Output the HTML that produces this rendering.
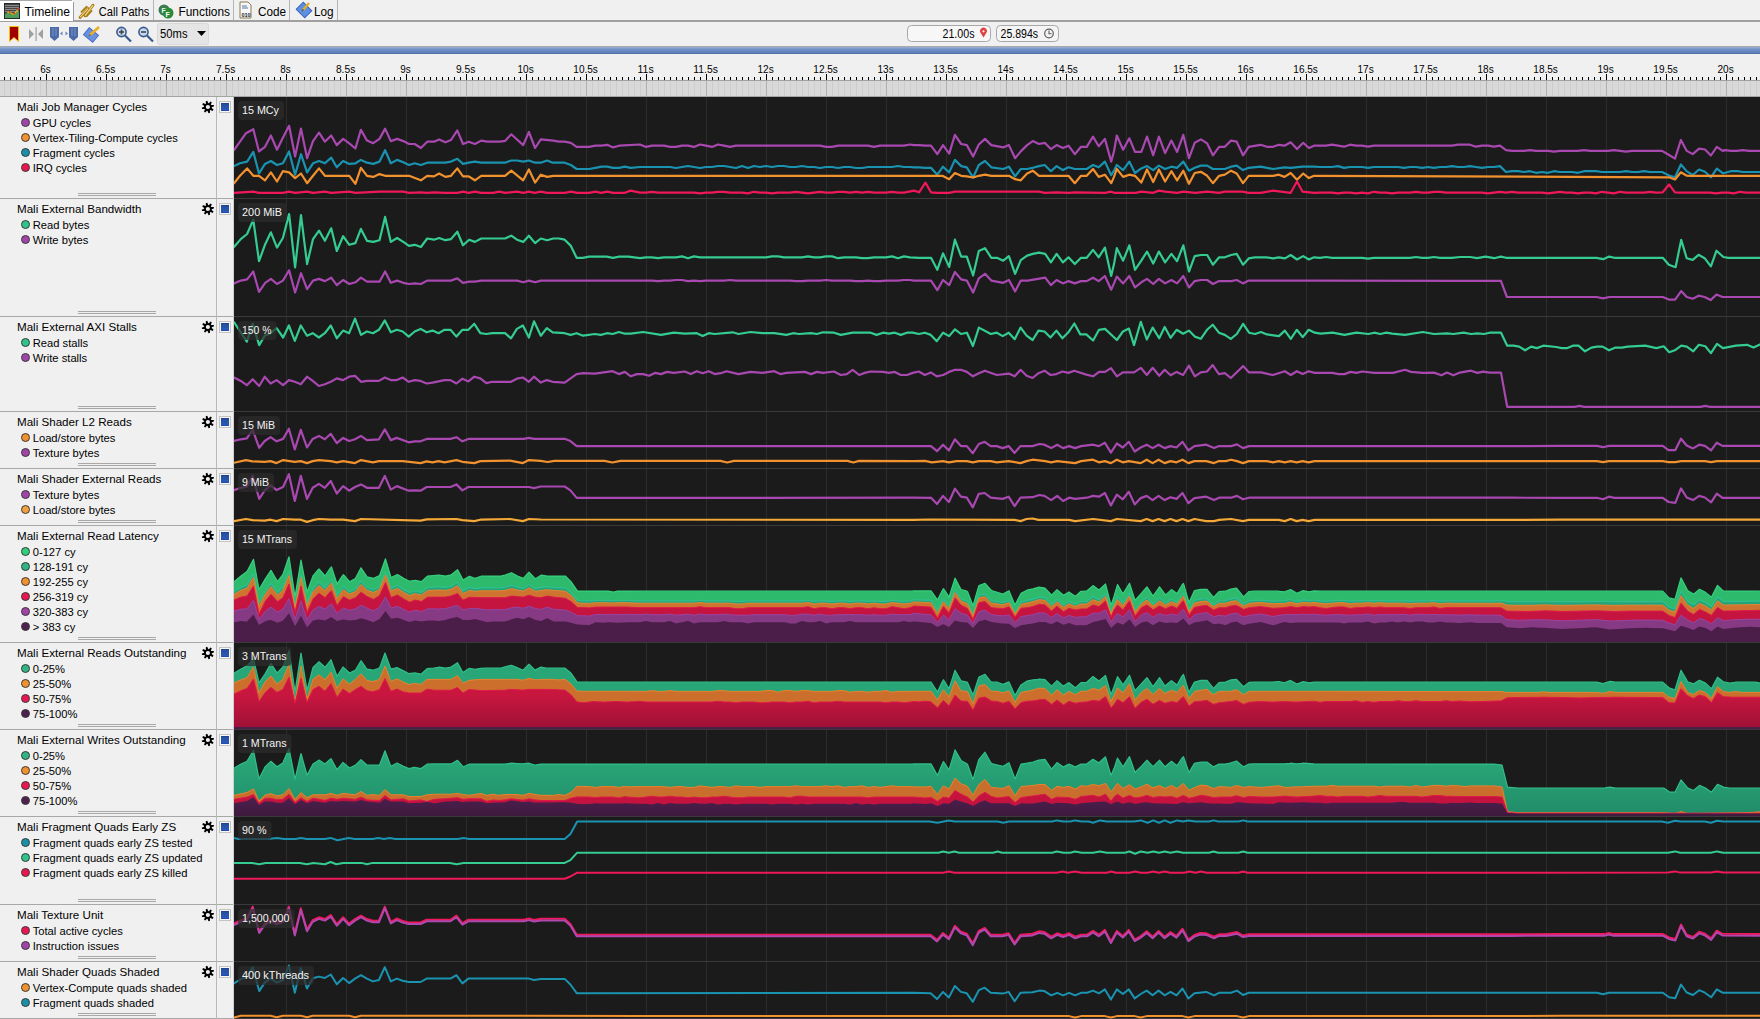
<!DOCTYPE html><html><head><meta charset="utf-8"><style>html,body{margin:0;padding:0;background:#f0f0f0;overflow:hidden}svg{display:block}text{font-family:"Liberation Sans",sans-serif}</style></head><body><svg width="1760" height="1019" viewBox="0 0 1760 1019"><rect width="1760" height="1019" fill="#f0f0f0"/><rect x="0" y="20" width="1760" height="2" fill="#a0a0a0"/><rect x="0" y="1" width="73" height="20" fill="#ffffff"/><rect x="0" y="0" width="72" height="1" fill="#a8a8a8"/><rect x="73" y="2" width="1" height="19" fill="#9a9a9a"/><rect x="153" y="0" width="1" height="20" fill="#b4b4b4"/><rect x="233" y="0" width="1" height="20" fill="#b4b4b4"/><rect x="289" y="0" width="1" height="20" fill="#b4b4b4"/><rect x="337" y="0" width="1" height="20" fill="#b4b4b4"/><text x="24.5" y="15.5" font-size="12" fill="#000" textLength="45.4" lengthAdjust="spacingAndGlyphs">Timeline</text><text x="98.8" y="15.5" font-size="12" fill="#000" textLength="50.6" lengthAdjust="spacingAndGlyphs">Call Paths</text><text x="178.4" y="15.5" font-size="12" fill="#000" textLength="51.7" lengthAdjust="spacingAndGlyphs">Functions</text><text x="258" y="15.5" font-size="12" fill="#000" textLength="28" lengthAdjust="spacingAndGlyphs">Code</text><text x="314" y="15.5" font-size="12" fill="#000" textLength="19.6" lengthAdjust="spacingAndGlyphs">Log</text><g><rect x="4" y="3" width="16" height="16" fill="#2a2a2a"/><rect x="5" y="4" width="14" height="14" fill="#454545"/><path d="M5 5.5h14M5 7.5h14M5 9.5h14M5 11.5h14" stroke="#8a8a8a" stroke-width="1"/><path d="M5 18 L5 14 L7.5 13 L9.5 12.5 L11 14 L13.5 15 L16 13 L19 10.5 L19 18Z" fill="#4f9d5c"/><path d="M7.5 13 L9.5 11.5 L11 13 L13.5 14.5 L15.5 12.5 L17 11 L19 8" stroke="#e8c020" stroke-width="1.3" fill="none"/><path d="M9 11.2 L10.5 12.5 M13.5 14.2 L14.8 13 M17.5 10 L19 8" stroke="#d83020" stroke-width="1.3" fill="none"/></g><g fill="none" stroke-linecap="round" stroke-linejoin="round"><path d="M80 17.5 L88 8.6 M85 15.8 L93 5.2" stroke="#a87c14" stroke-width="2.8"/><path d="M81.4 11.8 L86.7 6.6 M86.7 16.2 L91.6 11" stroke="#a87c14" stroke-width="1.8"/><path d="M80.3 17 L87.8 8.9 M85.3 15.4 L92.7 5.6" stroke="#f8dc90" stroke-width="1.1"/></g><circle cx="164" cy="10" r="5.5" fill="#3f7a4f"/><circle cx="168" cy="13" r="5.5" fill="#2a8a3a"/><text x="161.5" y="13" font-size="7" fill="#dfe" font-weight="bold">F</text><text x="165.5" y="16.5" font-size="7" fill="#fff" font-weight="bold">F</text><path d="M240 2 h8 l3 3 v13 h-11z" fill="#f8f8f8" stroke="#8a7a50" stroke-width="1"/><path d="M242 6h5M242 8h6" stroke="#5577aa" stroke-width="1"/><text x="241.5" y="16.5" font-size="5.5" fill="#123" font-weight="bold">010</text><g transform="translate(304,10) rotate(45)"><rect x="-6" y="-5" width="12" height="10" fill="#5f8fe0" stroke="#3a66c0" stroke-width="1"/></g><path d="M303 10 L309 3" stroke="#e8b020" stroke-width="2.4"/><path d="M302 11 L303.5 9.5" stroke="#555" stroke-width="1.5"/><rect x="0" y="46" width="1760" height="1" fill="#a8a8a8"/><defs><linearGradient id="bb" x1="0" y1="0" x2="0" y2="1"><stop offset="0" stop-color="#9bb2d8"/><stop offset="0.35" stop-color="#7090c8"/><stop offset="0.8" stop-color="#6080b8"/><stop offset="1" stop-color="#4a6aa0"/></linearGradient></defs><rect x="0" y="47" width="1760" height="7" fill="url(#bb)"/><defs><linearGradient id="bsq" x1="0" y1="0" x2="0" y2="1"><stop offset="0" stop-color="#1c3e92"/><stop offset="0.2" stop-color="#2550a0"/><stop offset="0.8" stop-color="#2a58b4"/><stop offset="1" stop-color="#1a48b8"/></linearGradient></defs><defs><clipPath id="chartclip"><rect x="234" y="97" width="1526" height="922"/></clipPath></defs><path d="M9.5 26.5 h9 v15 l-4.5 -4 l-4.5 4z" fill="#a00000" stroke="#f0c000" stroke-width="1"/><path d="M29 29 L34 34 L29 39z M43 29 L38 34 L43 39z" fill="#a0a0a0"/><rect x="35.5" y="27" width="1.2" height="14" fill="#a0a0a0"/><path d="M50 27 h9 v10 l-4.5 4 l-4.5 -4z M69 27 h9 v10 l-4.5 4 l-4.5 -4z" fill="#4a6aa8"/><path d="M53 28v8M56 28v8M72 28v8M75 28v8" stroke="#8aa0c8" stroke-width="0.8"/><path d="M60 33.5 l2.5 -2 v4z M68 33.5 l-2.5 -2 v4z" fill="#6a84b8"/><g transform="translate(91,35) rotate(40)"><rect x="-6" y="-4.5" width="12" height="9" fill="#6a90e0" stroke="#4a70c8" stroke-width="1"/></g><path d="M90 35 L99 27" stroke="#e8b020" stroke-width="2.6"/><path d="M89 36 L90.5 34.5" stroke="#666" stroke-width="1.4"/><circle cx="121.5" cy="32" r="4.6" fill="#c8d8f0" stroke="#3a5a8a" stroke-width="1.6"/><path d="M125 35.5 L131 41.5" stroke="#3a5a8a" stroke-width="2.2"/><path d="M119 32 h5" stroke="#444" stroke-width="1.6"/><path d="M121.5 29.5 v5" stroke="#444" stroke-width="1.6"/><circle cx="143.5" cy="32" r="4.6" fill="#c8d8f0" stroke="#3a5a8a" stroke-width="1.6"/><path d="M147 35.5 L153 41.5" stroke="#3a5a8a" stroke-width="2.2"/><path d="M141 32 h5" stroke="#444" stroke-width="1.6"/><rect x="157.5" y="23.5" width="51" height="21" rx="2" fill="#e5e5e5" stroke="#d8d8d8" stroke-width="1"/><text x="160" y="37.5" font-size="12" fill="#000" textLength="27.5" lengthAdjust="spacingAndGlyphs">50ms</text><path d="M197 31 h9 l-4.5 5z" fill="#000"/><rect x="907.5" y="25.5" width="83" height="16" rx="4" fill="#f7f7f7" stroke="#a8a8a8" stroke-width="1"/><rect x="996.5" y="25.5" width="62" height="16" rx="4" fill="#f4f4f4" stroke="#a8a8a8" stroke-width="1"/><text x="942.5" y="38" font-size="12" fill="#000" textLength="32" lengthAdjust="spacingAndGlyphs">21.00s</text><text x="1000.6" y="38" font-size="12" fill="#000" textLength="37.5" lengthAdjust="spacingAndGlyphs">25.894s</text><path d="M983.5 37.5 L980.6 32.8 A3.4 3.4 0 1 1 986.4 32.8 Z" fill="#e04040"/><circle cx="983.5" cy="31.3" r="1.1" fill="#f7f7f7"/><circle cx="1049" cy="33.5" r="4.3" fill="none" stroke="#606060" stroke-width="1.2"/><path d="M1049 30.5 v3.2 h2.6" stroke="#606060" stroke-width="1.1" fill="none"/><rect x="0" y="80" width="1760" height="1" fill="#a0a0a0"/><rect x="0" y="81" width="1760" height="15" fill="#d9d9d9"/><rect x="0" y="96" width="1760" height="1" fill="#a4a4a4"/><path d="M4.5 81v15M10.5 81v15M16.5 81v15M22.5 81v15M28.5 81v15M34.5 81v15M40.5 81v15M52.5 81v15M58.5 81v15M64.5 81v15M70.5 81v15M76.5 81v15M82.5 81v15M88.5 81v15M94.5 81v15M100.5 81v15M112.5 81v15M118.5 81v15M124.5 81v15M130.5 81v15M136.5 81v15M142.5 81v15M148.5 81v15M154.5 81v15M160.5 81v15M172.5 81v15M178.5 81v15M184.5 81v15M190.5 81v15M196.5 81v15M202.5 81v15M208.5 81v15M214.5 81v15M220.5 81v15M232.5 81v15M238.5 81v15M244.5 81v15M250.5 81v15M256.5 81v15M262.5 81v15M268.5 81v15M274.5 81v15M280.5 81v15M292.5 81v15M298.5 81v15M304.5 81v15M310.5 81v15M316.5 81v15M322.5 81v15M328.5 81v15M334.5 81v15M340.5 81v15M352.5 81v15M358.5 81v15M364.5 81v15M370.5 81v15M376.5 81v15M382.5 81v15M388.5 81v15M394.5 81v15M400.5 81v15M412.5 81v15M418.5 81v15M424.5 81v15M430.5 81v15M436.5 81v15M442.5 81v15M448.5 81v15M454.5 81v15M460.5 81v15M472.5 81v15M478.5 81v15M484.5 81v15M490.5 81v15M496.5 81v15M502.5 81v15M508.5 81v15M514.5 81v15M520.5 81v15M532.5 81v15M538.5 81v15M544.5 81v15M550.5 81v15M556.5 81v15M562.5 81v15M568.5 81v15M574.5 81v15M580.5 81v15M592.5 81v15M598.5 81v15M604.5 81v15M610.5 81v15M616.5 81v15M622.5 81v15M628.5 81v15M634.5 81v15M640.5 81v15M652.5 81v15M658.5 81v15M664.5 81v15M670.5 81v15M676.5 81v15M682.5 81v15M688.5 81v15M694.5 81v15M700.5 81v15M712.5 81v15M718.5 81v15M724.5 81v15M730.5 81v15M736.5 81v15M742.5 81v15M748.5 81v15M754.5 81v15M760.5 81v15M772.5 81v15M778.5 81v15M784.5 81v15M790.5 81v15M796.5 81v15M802.5 81v15M808.5 81v15M814.5 81v15M820.5 81v15M832.5 81v15M838.5 81v15M844.5 81v15M850.5 81v15M856.5 81v15M862.5 81v15M868.5 81v15M874.5 81v15M880.5 81v15M892.5 81v15M898.5 81v15M904.5 81v15M910.5 81v15M916.5 81v15M922.5 81v15M928.5 81v15M934.5 81v15M940.5 81v15M952.5 81v15M958.5 81v15M964.5 81v15M970.5 81v15M976.5 81v15M982.5 81v15M988.5 81v15M994.5 81v15M1000.5 81v15M1012.5 81v15M1018.5 81v15M1024.5 81v15M1030.5 81v15M1036.5 81v15M1042.5 81v15M1048.5 81v15M1054.5 81v15M1060.5 81v15M1072.5 81v15M1078.5 81v15M1084.5 81v15M1090.5 81v15M1096.5 81v15M1102.5 81v15M1108.5 81v15M1114.5 81v15M1120.5 81v15M1132.5 81v15M1138.5 81v15M1144.5 81v15M1150.5 81v15M1156.5 81v15M1162.5 81v15M1168.5 81v15M1174.5 81v15M1180.5 81v15M1192.5 81v15M1198.5 81v15M1204.5 81v15M1210.5 81v15M1216.5 81v15M1222.5 81v15M1228.5 81v15M1234.5 81v15M1240.5 81v15M1252.5 81v15M1258.5 81v15M1264.5 81v15M1270.5 81v15M1276.5 81v15M1282.5 81v15M1288.5 81v15M1294.5 81v15M1300.5 81v15M1312.5 81v15M1318.5 81v15M1324.5 81v15M1330.5 81v15M1336.5 81v15M1342.5 81v15M1348.5 81v15M1354.5 81v15M1360.5 81v15M1372.5 81v15M1378.5 81v15M1384.5 81v15M1390.5 81v15M1396.5 81v15M1402.5 81v15M1408.5 81v15M1414.5 81v15M1420.5 81v15M1432.5 81v15M1438.5 81v15M1444.5 81v15M1450.5 81v15M1456.5 81v15M1462.5 81v15M1468.5 81v15M1474.5 81v15M1480.5 81v15M1492.5 81v15M1498.5 81v15M1504.5 81v15M1510.5 81v15M1516.5 81v15M1522.5 81v15M1528.5 81v15M1534.5 81v15M1540.5 81v15M1552.5 81v15M1558.5 81v15M1564.5 81v15M1570.5 81v15M1576.5 81v15M1582.5 81v15M1588.5 81v15M1594.5 81v15M1600.5 81v15M1612.5 81v15M1618.5 81v15M1624.5 81v15M1630.5 81v15M1636.5 81v15M1642.5 81v15M1648.5 81v15M1654.5 81v15M1660.5 81v15M1672.5 81v15M1678.5 81v15M1684.5 81v15M1690.5 81v15M1696.5 81v15M1702.5 81v15M1708.5 81v15M1714.5 81v15M1720.5 81v15M1732.5 81v15M1738.5 81v15M1744.5 81v15M1750.5 81v15M1756.5 81v15" stroke="#cdcdcd" stroke-width="1"/><path d="M46.5 81v15M106.5 81v15M166.5 81v15M226.5 81v15M286.5 81v15M346.5 81v15M406.5 81v15M466.5 81v15M526.5 81v15M586.5 81v15M646.5 81v15M706.5 81v15M766.5 81v15M826.5 81v15M886.5 81v15M946.5 81v15M1006.5 81v15M1066.5 81v15M1126.5 81v15M1186.5 81v15M1246.5 81v15M1306.5 81v15M1366.5 81v15M1426.5 81v15M1486.5 81v15M1546.5 81v15M1606.5 81v15M1666.5 81v15M1726.5 81v15" stroke="#b0b0b0" stroke-width="1"/><path d="M4.5 77v3M10.5 77v3M16.5 77v3M22.5 77v3M28.5 77v3M34.5 77v3M40.5 77v3M46.5 74v6M52.5 77v3M58.5 77v3M64.5 77v3M70.5 77v3M76.5 77v3M82.5 77v3M88.5 77v3M94.5 77v3M100.5 77v3M106.5 74v6M112.5 77v3M118.5 77v3M124.5 77v3M130.5 77v3M136.5 77v3M142.5 77v3M148.5 77v3M154.5 77v3M160.5 77v3M166.5 74v6M172.5 77v3M178.5 77v3M184.5 77v3M190.5 77v3M196.5 77v3M202.5 77v3M208.5 77v3M214.5 77v3M220.5 77v3M226.5 74v6M232.5 77v3M238.5 77v3M244.5 77v3M250.5 77v3M256.5 77v3M262.5 77v3M268.5 77v3M274.5 77v3M280.5 77v3M286.5 74v6M292.5 77v3M298.5 77v3M304.5 77v3M310.5 77v3M316.5 77v3M322.5 77v3M328.5 77v3M334.5 77v3M340.5 77v3M346.5 74v6M352.5 77v3M358.5 77v3M364.5 77v3M370.5 77v3M376.5 77v3M382.5 77v3M388.5 77v3M394.5 77v3M400.5 77v3M406.5 74v6M412.5 77v3M418.5 77v3M424.5 77v3M430.5 77v3M436.5 77v3M442.5 77v3M448.5 77v3M454.5 77v3M460.5 77v3M466.5 74v6M472.5 77v3M478.5 77v3M484.5 77v3M490.5 77v3M496.5 77v3M502.5 77v3M508.5 77v3M514.5 77v3M520.5 77v3M526.5 74v6M532.5 77v3M538.5 77v3M544.5 77v3M550.5 77v3M556.5 77v3M562.5 77v3M568.5 77v3M574.5 77v3M580.5 77v3M586.5 74v6M592.5 77v3M598.5 77v3M604.5 77v3M610.5 77v3M616.5 77v3M622.5 77v3M628.5 77v3M634.5 77v3M640.5 77v3M646.5 74v6M652.5 77v3M658.5 77v3M664.5 77v3M670.5 77v3M676.5 77v3M682.5 77v3M688.5 77v3M694.5 77v3M700.5 77v3M706.5 74v6M712.5 77v3M718.5 77v3M724.5 77v3M730.5 77v3M736.5 77v3M742.5 77v3M748.5 77v3M754.5 77v3M760.5 77v3M766.5 74v6M772.5 77v3M778.5 77v3M784.5 77v3M790.5 77v3M796.5 77v3M802.5 77v3M808.5 77v3M814.5 77v3M820.5 77v3M826.5 74v6M832.5 77v3M838.5 77v3M844.5 77v3M850.5 77v3M856.5 77v3M862.5 77v3M868.5 77v3M874.5 77v3M880.5 77v3M886.5 74v6M892.5 77v3M898.5 77v3M904.5 77v3M910.5 77v3M916.5 77v3M922.5 77v3M928.5 77v3M934.5 77v3M940.5 77v3M946.5 74v6M952.5 77v3M958.5 77v3M964.5 77v3M970.5 77v3M976.5 77v3M982.5 77v3M988.5 77v3M994.5 77v3M1000.5 77v3M1006.5 74v6M1012.5 77v3M1018.5 77v3M1024.5 77v3M1030.5 77v3M1036.5 77v3M1042.5 77v3M1048.5 77v3M1054.5 77v3M1060.5 77v3M1066.5 74v6M1072.5 77v3M1078.5 77v3M1084.5 77v3M1090.5 77v3M1096.5 77v3M1102.5 77v3M1108.5 77v3M1114.5 77v3M1120.5 77v3M1126.5 74v6M1132.5 77v3M1138.5 77v3M1144.5 77v3M1150.5 77v3M1156.5 77v3M1162.5 77v3M1168.5 77v3M1174.5 77v3M1180.5 77v3M1186.5 74v6M1192.5 77v3M1198.5 77v3M1204.5 77v3M1210.5 77v3M1216.5 77v3M1222.5 77v3M1228.5 77v3M1234.5 77v3M1240.5 77v3M1246.5 74v6M1252.5 77v3M1258.5 77v3M1264.5 77v3M1270.5 77v3M1276.5 77v3M1282.5 77v3M1288.5 77v3M1294.5 77v3M1300.5 77v3M1306.5 74v6M1312.5 77v3M1318.5 77v3M1324.5 77v3M1330.5 77v3M1336.5 77v3M1342.5 77v3M1348.5 77v3M1354.5 77v3M1360.5 77v3M1366.5 74v6M1372.5 77v3M1378.5 77v3M1384.5 77v3M1390.5 77v3M1396.5 77v3M1402.5 77v3M1408.5 77v3M1414.5 77v3M1420.5 77v3M1426.5 74v6M1432.5 77v3M1438.5 77v3M1444.5 77v3M1450.5 77v3M1456.5 77v3M1462.5 77v3M1468.5 77v3M1474.5 77v3M1480.5 77v3M1486.5 74v6M1492.5 77v3M1498.5 77v3M1504.5 77v3M1510.5 77v3M1516.5 77v3M1522.5 77v3M1528.5 77v3M1534.5 77v3M1540.5 77v3M1546.5 74v6M1552.5 77v3M1558.5 77v3M1564.5 77v3M1570.5 77v3M1576.5 77v3M1582.5 77v3M1588.5 77v3M1594.5 77v3M1600.5 77v3M1606.5 74v6M1612.5 77v3M1618.5 77v3M1624.5 77v3M1630.5 77v3M1636.5 77v3M1642.5 77v3M1648.5 77v3M1654.5 77v3M1660.5 77v3M1666.5 74v6M1672.5 77v3M1678.5 77v3M1684.5 77v3M1690.5 77v3M1696.5 77v3M1702.5 77v3M1708.5 77v3M1714.5 77v3M1720.5 77v3M1726.5 74v6M1732.5 77v3M1738.5 77v3M1744.5 77v3M1750.5 77v3M1756.5 77v3" stroke="#000" stroke-width="1"/><text x="45.6" y="73" font-size="11" fill="#000" textLength="10.5" lengthAdjust="spacingAndGlyphs" text-anchor="middle">6s</text><text x="105.6" y="73" font-size="11" fill="#000" textLength="19.3" lengthAdjust="spacingAndGlyphs" text-anchor="middle">6.5s</text><text x="165.6" y="73" font-size="11" fill="#000" textLength="10.5" lengthAdjust="spacingAndGlyphs" text-anchor="middle">7s</text><text x="225.6" y="73" font-size="11" fill="#000" textLength="19.3" lengthAdjust="spacingAndGlyphs" text-anchor="middle">7.5s</text><text x="285.6" y="73" font-size="11" fill="#000" textLength="10.5" lengthAdjust="spacingAndGlyphs" text-anchor="middle">8s</text><text x="345.6" y="73" font-size="11" fill="#000" textLength="19.3" lengthAdjust="spacingAndGlyphs" text-anchor="middle">8.5s</text><text x="405.6" y="73" font-size="11" fill="#000" textLength="10.5" lengthAdjust="spacingAndGlyphs" text-anchor="middle">9s</text><text x="465.6" y="73" font-size="11" fill="#000" textLength="19.3" lengthAdjust="spacingAndGlyphs" text-anchor="middle">9.5s</text><text x="525.6" y="73" font-size="11" fill="#000" textLength="16.2" lengthAdjust="spacingAndGlyphs" text-anchor="middle">10s</text><text x="585.6" y="73" font-size="11" fill="#000" textLength="24.6" lengthAdjust="spacingAndGlyphs" text-anchor="middle">10.5s</text><text x="645.6" y="73" font-size="11" fill="#000" textLength="16.2" lengthAdjust="spacingAndGlyphs" text-anchor="middle">11s</text><text x="705.6" y="73" font-size="11" fill="#000" textLength="24.6" lengthAdjust="spacingAndGlyphs" text-anchor="middle">11.5s</text><text x="765.6" y="73" font-size="11" fill="#000" textLength="16.2" lengthAdjust="spacingAndGlyphs" text-anchor="middle">12s</text><text x="825.6" y="73" font-size="11" fill="#000" textLength="24.6" lengthAdjust="spacingAndGlyphs" text-anchor="middle">12.5s</text><text x="885.6" y="73" font-size="11" fill="#000" textLength="16.2" lengthAdjust="spacingAndGlyphs" text-anchor="middle">13s</text><text x="945.6" y="73" font-size="11" fill="#000" textLength="24.6" lengthAdjust="spacingAndGlyphs" text-anchor="middle">13.5s</text><text x="1005.6" y="73" font-size="11" fill="#000" textLength="16.2" lengthAdjust="spacingAndGlyphs" text-anchor="middle">14s</text><text x="1065.6" y="73" font-size="11" fill="#000" textLength="24.6" lengthAdjust="spacingAndGlyphs" text-anchor="middle">14.5s</text><text x="1125.6" y="73" font-size="11" fill="#000" textLength="16.2" lengthAdjust="spacingAndGlyphs" text-anchor="middle">15s</text><text x="1185.6" y="73" font-size="11" fill="#000" textLength="24.6" lengthAdjust="spacingAndGlyphs" text-anchor="middle">15.5s</text><text x="1245.6" y="73" font-size="11" fill="#000" textLength="16.2" lengthAdjust="spacingAndGlyphs" text-anchor="middle">16s</text><text x="1305.6" y="73" font-size="11" fill="#000" textLength="24.6" lengthAdjust="spacingAndGlyphs" text-anchor="middle">16.5s</text><text x="1365.6" y="73" font-size="11" fill="#000" textLength="16.2" lengthAdjust="spacingAndGlyphs" text-anchor="middle">17s</text><text x="1425.6" y="73" font-size="11" fill="#000" textLength="24.6" lengthAdjust="spacingAndGlyphs" text-anchor="middle">17.5s</text><text x="1485.6" y="73" font-size="11" fill="#000" textLength="16.2" lengthAdjust="spacingAndGlyphs" text-anchor="middle">18s</text><text x="1545.6" y="73" font-size="11" fill="#000" textLength="24.6" lengthAdjust="spacingAndGlyphs" text-anchor="middle">18.5s</text><text x="1605.6" y="73" font-size="11" fill="#000" textLength="16.2" lengthAdjust="spacingAndGlyphs" text-anchor="middle">19s</text><text x="1665.6" y="73" font-size="11" fill="#000" textLength="24.6" lengthAdjust="spacingAndGlyphs" text-anchor="middle">19.5s</text><text x="1725.6" y="73" font-size="11" fill="#000" textLength="16.2" lengthAdjust="spacingAndGlyphs" text-anchor="middle">20s</text><rect x="216" y="97" width="1" height="922" fill="#b8b8b8"/><rect x="234" y="97" width="1526" height="922" fill="#1b1b1b"/><rect x="233" y="97" width="1" height="922" fill="#cfcfcf"/><path d="M286.5 97V1019M346.5 97V1019M406.5 97V1019M466.5 97V1019M526.5 97V1019M586.5 97V1019M646.5 97V1019M706.5 97V1019M766.5 97V1019M826.5 97V1019M886.5 97V1019M946.5 97V1019M1006.5 97V1019M1066.5 97V1019M1126.5 97V1019M1186.5 97V1019M1246.5 97V1019M1306.5 97V1019M1366.5 97V1019M1426.5 97V1019M1486.5 97V1019M1546.5 97V1019M1606.5 97V1019M1666.5 97V1019M1726.5 97V1019" stroke="#2c2c2c" stroke-width="1"/><rect x="0" y="198" width="216" height="1" fill="#a8a8a8"/><rect x="217" y="198" width="16" height="1" fill="#a8a8a8"/><rect x="234" y="198" width="1526" height="1" fill="#3a3a3a"/><rect x="78" y="193" width="78" height="1" fill="#a8a8a8"/><rect x="78" y="195" width="78" height="1" fill="#a8a8a8"/><text x="17" y="111" font-size="11.6" fill="#000">Mali Job Manager Cycles</text><circle cx="25.5" cy="122.5" r="4" fill="#a044a8" stroke="#3a3a3a" stroke-width="1"/><text x="32.7" y="127" font-size="11.2" fill="#000">GPU cycles</text><circle cx="25.5" cy="137.5" r="4" fill="#f0902f" stroke="#3a3a3a" stroke-width="1"/><text x="32.7" y="142" font-size="11.2" fill="#000">Vertex-Tiling-Compute cycles</text><circle cx="25.5" cy="152.5" r="4" fill="#1a8fa8" stroke="#3a3a3a" stroke-width="1"/><text x="32.7" y="157" font-size="11.2" fill="#000">Fragment cycles</text><circle cx="25.5" cy="167.5" r="4" fill="#e8174f" stroke="#3a3a3a" stroke-width="1"/><text x="32.7" y="172" font-size="11.2" fill="#000">IRQ cycles</text><polygon points="205.89,103.66 205.78,101.17 207.25,100.83 208.24,103.11 208.84,103.22 210.52,101.38 211.80,102.18 210.89,104.49 211.24,104.99 213.73,104.88 214.07,106.35 211.79,107.34 211.68,107.94 213.52,109.62 212.72,110.90 210.41,109.99 209.91,110.34 210.02,112.83 208.55,113.17 207.56,110.89 206.96,110.78 205.28,112.62 204.00,111.82 204.91,109.51 204.56,109.01 202.07,109.12 201.73,107.65 204.01,106.66 204.12,106.06 202.28,104.38 203.08,103.10 205.39,104.01" fill="#000"/><circle cx="207.9" cy="107" r="2.1" fill="#f0f0f0"/><rect x="219.5" y="101.5" width="11" height="11" fill="#f8f6ee" stroke="#c4c4c4" stroke-width="1"/><rect x="221" y="103" width="8" height="8" fill="url(#bsq)"/><rect x="0" y="316" width="216" height="1" fill="#a8a8a8"/><rect x="217" y="316" width="16" height="1" fill="#a8a8a8"/><rect x="234" y="316" width="1526" height="1" fill="#3a3a3a"/><rect x="78" y="311" width="78" height="1" fill="#a8a8a8"/><rect x="78" y="313" width="78" height="1" fill="#a8a8a8"/><text x="17" y="213" font-size="11.6" fill="#000">Mali External Bandwidth</text><circle cx="25.5" cy="224.5" r="4" fill="#2fc48a" stroke="#3a3a3a" stroke-width="1"/><text x="32.7" y="229" font-size="11.2" fill="#000">Read bytes</text><circle cx="25.5" cy="239.5" r="4" fill="#a044a8" stroke="#3a3a3a" stroke-width="1"/><text x="32.7" y="244" font-size="11.2" fill="#000">Write bytes</text><polygon points="205.89,205.66 205.78,203.17 207.25,202.83 208.24,205.11 208.84,205.22 210.52,203.38 211.80,204.18 210.89,206.49 211.24,206.99 213.73,206.88 214.07,208.35 211.79,209.34 211.68,209.94 213.52,211.62 212.72,212.90 210.41,211.99 209.91,212.34 210.02,214.83 208.55,215.17 207.56,212.89 206.96,212.78 205.28,214.62 204.00,213.82 204.91,211.51 204.56,211.01 202.07,211.12 201.73,209.65 204.01,208.66 204.12,208.06 202.28,206.38 203.08,205.10 205.39,206.01" fill="#000"/><circle cx="207.9" cy="209" r="2.1" fill="#f0f0f0"/><rect x="219.5" y="203.5" width="11" height="11" fill="#f8f6ee" stroke="#c4c4c4" stroke-width="1"/><rect x="221" y="205" width="8" height="8" fill="url(#bsq)"/><rect x="0" y="411" width="216" height="1" fill="#a8a8a8"/><rect x="217" y="411" width="16" height="1" fill="#a8a8a8"/><rect x="234" y="411" width="1526" height="1" fill="#3a3a3a"/><rect x="78" y="406" width="78" height="1" fill="#a8a8a8"/><rect x="78" y="408" width="78" height="1" fill="#a8a8a8"/><text x="17" y="331" font-size="11.6" fill="#000">Mali External AXI Stalls</text><circle cx="25.5" cy="342.5" r="4" fill="#2fc48a" stroke="#3a3a3a" stroke-width="1"/><text x="32.7" y="347" font-size="11.2" fill="#000">Read stalls</text><circle cx="25.5" cy="357.5" r="4" fill="#a044a8" stroke="#3a3a3a" stroke-width="1"/><text x="32.7" y="362" font-size="11.2" fill="#000">Write stalls</text><polygon points="205.89,323.66 205.78,321.17 207.25,320.83 208.24,323.11 208.84,323.22 210.52,321.38 211.80,322.18 210.89,324.49 211.24,324.99 213.73,324.88 214.07,326.35 211.79,327.34 211.68,327.94 213.52,329.62 212.72,330.90 210.41,329.99 209.91,330.34 210.02,332.83 208.55,333.17 207.56,330.89 206.96,330.78 205.28,332.62 204.00,331.82 204.91,329.51 204.56,329.01 202.07,329.12 201.73,327.65 204.01,326.66 204.12,326.06 202.28,324.38 203.08,323.10 205.39,324.01" fill="#000"/><circle cx="207.9" cy="327" r="2.1" fill="#f0f0f0"/><rect x="219.5" y="321.5" width="11" height="11" fill="#f8f6ee" stroke="#c4c4c4" stroke-width="1"/><rect x="221" y="323" width="8" height="8" fill="url(#bsq)"/><rect x="0" y="468" width="216" height="1" fill="#a8a8a8"/><rect x="217" y="468" width="16" height="1" fill="#a8a8a8"/><rect x="234" y="468" width="1526" height="1" fill="#3a3a3a"/><rect x="78" y="463" width="78" height="1" fill="#a8a8a8"/><rect x="78" y="465" width="78" height="1" fill="#a8a8a8"/><text x="17" y="426" font-size="11.6" fill="#000">Mali Shader L2 Reads</text><circle cx="25.5" cy="437.5" r="4" fill="#f0902f" stroke="#3a3a3a" stroke-width="1"/><text x="32.7" y="442" font-size="11.2" fill="#000">Load/store bytes</text><circle cx="25.5" cy="452.5" r="4" fill="#a044a8" stroke="#3a3a3a" stroke-width="1"/><text x="32.7" y="457" font-size="11.2" fill="#000">Texture bytes</text><polygon points="205.89,418.66 205.78,416.17 207.25,415.83 208.24,418.11 208.84,418.22 210.52,416.38 211.80,417.18 210.89,419.49 211.24,419.99 213.73,419.88 214.07,421.35 211.79,422.34 211.68,422.94 213.52,424.62 212.72,425.90 210.41,424.99 209.91,425.34 210.02,427.83 208.55,428.17 207.56,425.89 206.96,425.78 205.28,427.62 204.00,426.82 204.91,424.51 204.56,424.01 202.07,424.12 201.73,422.65 204.01,421.66 204.12,421.06 202.28,419.38 203.08,418.10 205.39,419.01" fill="#000"/><circle cx="207.9" cy="422" r="2.1" fill="#f0f0f0"/><rect x="219.5" y="416.5" width="11" height="11" fill="#f8f6ee" stroke="#c4c4c4" stroke-width="1"/><rect x="221" y="418" width="8" height="8" fill="url(#bsq)"/><rect x="0" y="525" width="216" height="1" fill="#a8a8a8"/><rect x="217" y="525" width="16" height="1" fill="#a8a8a8"/><rect x="234" y="525" width="1526" height="1" fill="#3a3a3a"/><rect x="78" y="520" width="78" height="1" fill="#a8a8a8"/><rect x="78" y="522" width="78" height="1" fill="#a8a8a8"/><text x="17" y="483" font-size="11.6" fill="#000">Mali Shader External Reads</text><circle cx="25.5" cy="494.5" r="4" fill="#a044a8" stroke="#3a3a3a" stroke-width="1"/><text x="32.7" y="499" font-size="11.2" fill="#000">Texture bytes</text><circle cx="25.5" cy="509.5" r="4" fill="#f0a040" stroke="#3a3a3a" stroke-width="1"/><text x="32.7" y="514" font-size="11.2" fill="#000">Load/store bytes</text><polygon points="205.89,475.66 205.78,473.17 207.25,472.83 208.24,475.11 208.84,475.22 210.52,473.38 211.80,474.18 210.89,476.49 211.24,476.99 213.73,476.88 214.07,478.35 211.79,479.34 211.68,479.94 213.52,481.62 212.72,482.90 210.41,481.99 209.91,482.34 210.02,484.83 208.55,485.17 207.56,482.89 206.96,482.78 205.28,484.62 204.00,483.82 204.91,481.51 204.56,481.01 202.07,481.12 201.73,479.65 204.01,478.66 204.12,478.06 202.28,476.38 203.08,475.10 205.39,476.01" fill="#000"/><circle cx="207.9" cy="479" r="2.1" fill="#f0f0f0"/><rect x="219.5" y="473.5" width="11" height="11" fill="#f8f6ee" stroke="#c4c4c4" stroke-width="1"/><rect x="221" y="475" width="8" height="8" fill="url(#bsq)"/><rect x="0" y="642" width="216" height="1" fill="#a8a8a8"/><rect x="217" y="642" width="16" height="1" fill="#a8a8a8"/><rect x="234" y="642" width="1526" height="1" fill="#3a3a3a"/><rect x="78" y="637" width="78" height="1" fill="#a8a8a8"/><rect x="78" y="639" width="78" height="1" fill="#a8a8a8"/><text x="17" y="540" font-size="11.6" fill="#000">Mali External Read Latency</text><circle cx="25.5" cy="551.5" r="4" fill="#30d07a" stroke="#3a3a3a" stroke-width="1"/><text x="32.7" y="556" font-size="11.2" fill="#000">0-127 cy</text><circle cx="25.5" cy="566.5" r="4" fill="#2fb584" stroke="#3a3a3a" stroke-width="1"/><text x="32.7" y="571" font-size="11.2" fill="#000">128-191 cy</text><circle cx="25.5" cy="581.5" r="4" fill="#f0902f" stroke="#3a3a3a" stroke-width="1"/><text x="32.7" y="586" font-size="11.2" fill="#000">192-255 cy</text><circle cx="25.5" cy="596.5" r="4" fill="#e8174f" stroke="#3a3a3a" stroke-width="1"/><text x="32.7" y="601" font-size="11.2" fill="#000">256-319 cy</text><circle cx="25.5" cy="611.5" r="4" fill="#a044a8" stroke="#3a3a3a" stroke-width="1"/><text x="32.7" y="616" font-size="11.2" fill="#000">320-383 cy</text><circle cx="25.5" cy="626.5" r="4" fill="#4e2050" stroke="#3a3a3a" stroke-width="1"/><text x="32.7" y="631" font-size="11.2" fill="#000">&gt; 383 cy</text><polygon points="205.89,532.66 205.78,530.17 207.25,529.83 208.24,532.11 208.84,532.22 210.52,530.38 211.80,531.18 210.89,533.49 211.24,533.99 213.73,533.88 214.07,535.35 211.79,536.34 211.68,536.94 213.52,538.62 212.72,539.90 210.41,538.99 209.91,539.34 210.02,541.83 208.55,542.17 207.56,539.89 206.96,539.78 205.28,541.62 204.00,540.82 204.91,538.51 204.56,538.01 202.07,538.12 201.73,536.65 204.01,535.66 204.12,535.06 202.28,533.38 203.08,532.10 205.39,533.01" fill="#000"/><circle cx="207.9" cy="536" r="2.1" fill="#f0f0f0"/><rect x="219.5" y="530.5" width="11" height="11" fill="#f8f6ee" stroke="#c4c4c4" stroke-width="1"/><rect x="221" y="532" width="8" height="8" fill="url(#bsq)"/><rect x="0" y="729" width="216" height="1" fill="#a8a8a8"/><rect x="217" y="729" width="16" height="1" fill="#a8a8a8"/><rect x="234" y="729" width="1526" height="1" fill="#3a3a3a"/><rect x="78" y="724" width="78" height="1" fill="#a8a8a8"/><rect x="78" y="726" width="78" height="1" fill="#a8a8a8"/><text x="17" y="657" font-size="11.6" fill="#000">Mali External Reads Outstanding</text><circle cx="25.5" cy="668.5" r="4" fill="#2fb584" stroke="#3a3a3a" stroke-width="1"/><text x="32.7" y="673" font-size="11.2" fill="#000">0-25%</text><circle cx="25.5" cy="683.5" r="4" fill="#f0902f" stroke="#3a3a3a" stroke-width="1"/><text x="32.7" y="688" font-size="11.2" fill="#000">25-50%</text><circle cx="25.5" cy="698.5" r="4" fill="#e8174f" stroke="#3a3a3a" stroke-width="1"/><text x="32.7" y="703" font-size="11.2" fill="#000">50-75%</text><circle cx="25.5" cy="713.5" r="4" fill="#4e2050" stroke="#3a3a3a" stroke-width="1"/><text x="32.7" y="718" font-size="11.2" fill="#000">75-100%</text><polygon points="205.89,649.66 205.78,647.17 207.25,646.83 208.24,649.11 208.84,649.22 210.52,647.38 211.80,648.18 210.89,650.49 211.24,650.99 213.73,650.88 214.07,652.35 211.79,653.34 211.68,653.94 213.52,655.62 212.72,656.90 210.41,655.99 209.91,656.34 210.02,658.83 208.55,659.17 207.56,656.89 206.96,656.78 205.28,658.62 204.00,657.82 204.91,655.51 204.56,655.01 202.07,655.12 201.73,653.65 204.01,652.66 204.12,652.06 202.28,650.38 203.08,649.10 205.39,650.01" fill="#000"/><circle cx="207.9" cy="653" r="2.1" fill="#f0f0f0"/><rect x="219.5" y="647.5" width="11" height="11" fill="#f8f6ee" stroke="#c4c4c4" stroke-width="1"/><rect x="221" y="649" width="8" height="8" fill="url(#bsq)"/><rect x="0" y="816" width="216" height="1" fill="#a8a8a8"/><rect x="217" y="816" width="16" height="1" fill="#a8a8a8"/><rect x="234" y="816" width="1526" height="1" fill="#3a3a3a"/><rect x="78" y="811" width="78" height="1" fill="#a8a8a8"/><rect x="78" y="813" width="78" height="1" fill="#a8a8a8"/><text x="17" y="744" font-size="11.6" fill="#000">Mali External Writes Outstanding</text><circle cx="25.5" cy="755.5" r="4" fill="#2fb584" stroke="#3a3a3a" stroke-width="1"/><text x="32.7" y="760" font-size="11.2" fill="#000">0-25%</text><circle cx="25.5" cy="770.5" r="4" fill="#f0902f" stroke="#3a3a3a" stroke-width="1"/><text x="32.7" y="775" font-size="11.2" fill="#000">25-50%</text><circle cx="25.5" cy="785.5" r="4" fill="#e8174f" stroke="#3a3a3a" stroke-width="1"/><text x="32.7" y="790" font-size="11.2" fill="#000">50-75%</text><circle cx="25.5" cy="800.5" r="4" fill="#4e2050" stroke="#3a3a3a" stroke-width="1"/><text x="32.7" y="805" font-size="11.2" fill="#000">75-100%</text><polygon points="205.89,736.66 205.78,734.17 207.25,733.83 208.24,736.11 208.84,736.22 210.52,734.38 211.80,735.18 210.89,737.49 211.24,737.99 213.73,737.88 214.07,739.35 211.79,740.34 211.68,740.94 213.52,742.62 212.72,743.90 210.41,742.99 209.91,743.34 210.02,745.83 208.55,746.17 207.56,743.89 206.96,743.78 205.28,745.62 204.00,744.82 204.91,742.51 204.56,742.01 202.07,742.12 201.73,740.65 204.01,739.66 204.12,739.06 202.28,737.38 203.08,736.10 205.39,737.01" fill="#000"/><circle cx="207.9" cy="740" r="2.1" fill="#f0f0f0"/><rect x="219.5" y="734.5" width="11" height="11" fill="#f8f6ee" stroke="#c4c4c4" stroke-width="1"/><rect x="221" y="736" width="8" height="8" fill="url(#bsq)"/><rect x="0" y="904" width="216" height="1" fill="#a8a8a8"/><rect x="217" y="904" width="16" height="1" fill="#a8a8a8"/><rect x="234" y="904" width="1526" height="1" fill="#3a3a3a"/><rect x="78" y="899" width="78" height="1" fill="#a8a8a8"/><rect x="78" y="901" width="78" height="1" fill="#a8a8a8"/><text x="17" y="831" font-size="11.6" fill="#000">Mali Fragment Quads Early ZS</text><circle cx="25.5" cy="842.5" r="4" fill="#1a8fa8" stroke="#3a3a3a" stroke-width="1"/><text x="32.7" y="847" font-size="11.2" fill="#000">Fragment quads early ZS tested</text><circle cx="25.5" cy="857.5" r="4" fill="#2fc48a" stroke="#3a3a3a" stroke-width="1"/><text x="32.7" y="862" font-size="11.2" fill="#000">Fragment quads early ZS updated</text><circle cx="25.5" cy="872.5" r="4" fill="#e8174f" stroke="#3a3a3a" stroke-width="1"/><text x="32.7" y="877" font-size="11.2" fill="#000">Fragment quads early ZS killed</text><polygon points="205.89,823.66 205.78,821.17 207.25,820.83 208.24,823.11 208.84,823.22 210.52,821.38 211.80,822.18 210.89,824.49 211.24,824.99 213.73,824.88 214.07,826.35 211.79,827.34 211.68,827.94 213.52,829.62 212.72,830.90 210.41,829.99 209.91,830.34 210.02,832.83 208.55,833.17 207.56,830.89 206.96,830.78 205.28,832.62 204.00,831.82 204.91,829.51 204.56,829.01 202.07,829.12 201.73,827.65 204.01,826.66 204.12,826.06 202.28,824.38 203.08,823.10 205.39,824.01" fill="#000"/><circle cx="207.9" cy="827" r="2.1" fill="#f0f0f0"/><rect x="219.5" y="821.5" width="11" height="11" fill="#f8f6ee" stroke="#c4c4c4" stroke-width="1"/><rect x="221" y="823" width="8" height="8" fill="url(#bsq)"/><rect x="0" y="961" width="216" height="1" fill="#a8a8a8"/><rect x="217" y="961" width="16" height="1" fill="#a8a8a8"/><rect x="234" y="961" width="1526" height="1" fill="#3a3a3a"/><rect x="78" y="956" width="78" height="1" fill="#a8a8a8"/><rect x="78" y="958" width="78" height="1" fill="#a8a8a8"/><text x="17" y="919" font-size="11.6" fill="#000">Mali Texture Unit</text><circle cx="25.5" cy="930.5" r="4" fill="#e8174f" stroke="#3a3a3a" stroke-width="1"/><text x="32.7" y="935" font-size="11.2" fill="#000">Total active cycles</text><circle cx="25.5" cy="945.5" r="4" fill="#a044a8" stroke="#3a3a3a" stroke-width="1"/><text x="32.7" y="950" font-size="11.2" fill="#000">Instruction issues</text><polygon points="205.89,911.66 205.78,909.17 207.25,908.83 208.24,911.11 208.84,911.22 210.52,909.38 211.80,910.18 210.89,912.49 211.24,912.99 213.73,912.88 214.07,914.35 211.79,915.34 211.68,915.94 213.52,917.62 212.72,918.90 210.41,917.99 209.91,918.34 210.02,920.83 208.55,921.17 207.56,918.89 206.96,918.78 205.28,920.62 204.00,919.82 204.91,917.51 204.56,917.01 202.07,917.12 201.73,915.65 204.01,914.66 204.12,914.06 202.28,912.38 203.08,911.10 205.39,912.01" fill="#000"/><circle cx="207.9" cy="915" r="2.1" fill="#f0f0f0"/><rect x="219.5" y="909.5" width="11" height="11" fill="#f8f6ee" stroke="#c4c4c4" stroke-width="1"/><rect x="221" y="911" width="8" height="8" fill="url(#bsq)"/><rect x="0" y="1018" width="216" height="1" fill="#a8a8a8"/><rect x="217" y="1018" width="16" height="1" fill="#a8a8a8"/><rect x="234" y="1018" width="1526" height="1" fill="#3a3a3a"/><rect x="78" y="1013" width="78" height="1" fill="#a8a8a8"/><rect x="78" y="1015" width="78" height="1" fill="#a8a8a8"/><text x="17" y="976" font-size="11.6" fill="#000">Mali Shader Quads Shaded</text><circle cx="25.5" cy="987.5" r="4" fill="#f0902f" stroke="#3a3a3a" stroke-width="1"/><text x="32.7" y="992" font-size="11.2" fill="#000">Vertex-Compute quads shaded</text><circle cx="25.5" cy="1002.5" r="4" fill="#1a8fa8" stroke="#3a3a3a" stroke-width="1"/><text x="32.7" y="1007" font-size="11.2" fill="#000">Fragment quads shaded</text><polygon points="205.89,968.66 205.78,966.17 207.25,965.83 208.24,968.11 208.84,968.22 210.52,966.38 211.80,967.18 210.89,969.49 211.24,969.99 213.73,969.88 214.07,971.35 211.79,972.34 211.68,972.94 213.52,974.62 212.72,975.90 210.41,974.99 209.91,975.34 210.02,977.83 208.55,978.17 207.56,975.89 206.96,975.78 205.28,977.62 204.00,976.82 204.91,974.51 204.56,974.01 202.07,974.12 201.73,972.65 204.01,971.66 204.12,971.06 202.28,969.38 203.08,968.10 205.39,969.01" fill="#000"/><circle cx="207.9" cy="972" r="2.1" fill="#f0f0f0"/><rect x="219.5" y="966.5" width="11" height="11" fill="#f8f6ee" stroke="#c4c4c4" stroke-width="1"/><rect x="221" y="968" width="8" height="8" fill="url(#bsq)"/><g clip-path="url(#chartclip)"><path d="M232.0,150.2 234.0,150.2 240.0,141.7 246.0,133.2 253.3,129.2 259.0,151.4 265.0,146.8 270.9,135.5 277.0,149.7 282.9,137.7 289.1,125.8 295.1,156.5 301.0,128.6 307.1,158.2 313.0,141.1 319.0,132.6 324.9,141.7 331.2,135.5 336.8,145.1 343.1,138.9 349.3,143.4 355.4,148.5 360.9,129.8 367.0,140.6 373.2,143.2 379.5,138.9 385.1,128.6 390.8,141.1 397.1,138.9 403.3,141.1 409.0,144.0 414.7,144.0 420.9,148.0 427.2,141.7 434.0,141.7 439.1,139.4 445.4,142.3 451.0,140.0 457.3,130.3 463.0,144.0 468.7,141.7 474.9,144.0 481.2,140.6 487.4,141.7 499.9,141.7 505.0,140.9 511.3,134.3 523.2,145.1 528.9,132.0 535.1,148.0 540.8,139.4 553.3,140.6 559.0,141.7 564.7,141.7 570.9,142.8 576.6,146.8 589.1,146.8 595.4,145.7 601.6,145.7 607.3,144.8 613.0,147.4 619.2,145.7 640.0,144.5 646.0,146.9 652.0,145.7 658.0,145.7 664.0,145.7 670.0,146.9 676.0,146.9 682.0,145.7 688.0,145.7 694.0,146.9 700.0,144.5 706.0,145.7 712.0,146.9 718.0,144.5 724.0,145.7 730.0,146.9 736.0,145.7 742.0,145.7 748.0,145.7 754.0,145.7 760.0,145.7 766.0,145.7 772.0,145.7 778.0,145.7 784.0,145.7 790.0,145.7 796.0,145.7 802.0,145.7 808.0,145.7 814.0,145.7 820.0,145.7 826.0,146.9 832.0,146.9 838.0,145.7 844.0,145.7 850.0,145.7 856.0,145.7 862.0,145.7 868.0,145.7 874.0,146.9 880.0,145.7 886.0,145.7 892.0,145.7 898.0,145.7 904.0,145.7 910.0,144.5 914.0,145.1 919.1,145.1 925.4,145.7 931.0,145.7 937.3,154.2 943.0,145.1 949.2,153.6 954.9,134.9 961.2,144.0 966.8,145.1 973.1,156.5 978.8,144.5 985.0,138.9 991.3,145.1 1003.2,147.4 1008.9,145.1 1015.1,158.2 1020.8,151.4 1027.1,145.1 1032.8,141.1 1039.0,144.0 1044.7,142.8 1050.9,149.1 1056.6,145.1 1062.9,148.0 1068.5,145.7 1074.8,154.2 1081.0,146.8 1086.7,146.8 1093.0,136.6 1098.7,146.2 1104.9,138.9 1111.2,161.6 1114.0,151.4 1116.8,135.5 1123.1,149.7 1129.3,138.3 1135.0,151.9 1141.3,151.9 1147.0,136.6 1153.2,155.3 1158.9,136.6 1165.1,153.1 1171.4,140.6 1177.1,151.9 1183.3,134.9 1189.0,158.2 1194.7,142.8 1200.9,139.4 1207.2,143.4 1212.9,155.3 1219.1,146.8 1224.8,146.8 1231.0,140.6 1236.7,141.7 1243.0,155.3 1248.7,146.8 1260.6,144.8 1266.8,146.8 1273.1,146.8 1278.8,144.8 1284.5,145.7 1290.7,142.3 1297.0,149.1 1303.2,142.8 1308.9,148.0 1314.0,145.7 1320.0,145.7 1326.0,145.7 1332.0,144.7 1338.0,145.7 1344.0,146.7 1350.0,144.7 1356.0,145.7 1362.0,145.7 1368.0,146.7 1374.0,145.7 1380.0,145.7 1386.0,145.7 1392.0,145.7 1398.0,145.7 1404.0,145.7 1410.0,145.7 1416.0,145.7 1422.0,145.7 1428.0,145.7 1434.0,145.7 1440.0,145.7 1446.0,145.7 1452.0,145.7 1458.0,144.7 1464.0,144.7 1470.0,144.7 1476.0,146.7 1482.0,145.7 1488.0,145.7 1494.0,146.7 1500.0,145.7 1506.0,150.1 1512.0,150.9 1518.0,150.9 1524.0,150.9 1530.0,150.1 1536.0,150.9 1542.0,150.9 1548.0,150.9 1554.0,151.7 1560.0,150.9 1566.0,150.9 1572.0,150.9 1578.0,150.9 1584.0,150.1 1590.0,150.9 1596.0,150.9 1602.0,150.9 1608.0,150.9 1614.0,150.1 1620.0,150.9 1626.0,151.7 1632.0,150.9 1638.0,150.9 1644.0,150.9 1650.0,150.9 1656.0,150.9 1662.0,150.9 1669.1,155.0 1675.0,158.6 1680.9,140.0 1686.8,150.9 1692.7,154.1 1699.1,148.6 1705.0,149.5 1710.9,155.5 1716.8,146.8 1722.7,150.9 1725.0,150.1 1731.0,150.9 1737.0,150.9 1743.0,150.1 1749.0,150.9 1755.0,150.9 1762.0,150.9" fill="none" stroke="#a848b0" stroke-width="2.2" stroke-linejoin="round"/><path d="M232.0,166.1 234.0,166.1 240.0,163.3 247.1,161.6 253.3,151.9 259.0,173.5 265.0,163.9 270.9,161.0 277.0,165.0 282.9,163.3 289.1,151.4 295.1,174.7 301.0,154.2 307.1,172.4 313.0,163.3 319.0,161.0 324.9,163.3 331.2,157.6 336.8,167.3 343.1,161.0 349.3,163.9 355.4,163.3 360.9,159.9 367.0,162.7 373.2,163.9 379.5,161.6 385.1,150.2 390.8,163.3 397.1,159.9 403.3,162.2 409.0,165.0 414.7,163.3 420.9,165.0 427.2,162.7 434.0,162.7 445.4,162.7 451.0,161.6 457.3,158.8 463.0,163.9 468.7,162.7 474.9,161.6 481.2,162.7 505.0,162.7 511.3,160.5 517.0,160.5 523.2,161.6 528.9,160.5 535.1,162.7 540.8,162.7 547.1,160.5 552.8,162.7 564.7,162.7 570.9,165.0 576.6,169.0 589.1,169.0 595.4,167.8 601.6,166.7 607.3,166.7 613.0,167.8 619.2,167.8 624.9,166.7 630.6,167.8 640.0,167.0 646.0,167.0 652.0,167.0 658.0,167.0 664.0,167.0 670.0,167.0 676.0,168.0 682.0,167.0 688.0,166.0 694.0,167.0 700.0,168.0 706.0,167.0 712.0,167.0 718.0,166.0 724.0,166.0 730.0,167.0 736.0,168.0 742.0,166.0 748.0,168.0 754.0,166.0 760.0,167.0 766.0,166.0 772.0,167.0 778.0,166.0 784.0,166.0 790.0,167.0 796.0,167.0 802.0,166.0 808.0,167.0 814.0,167.0 820.0,168.0 826.0,167.0 832.0,167.0 838.0,168.0 844.0,167.0 850.0,167.0 856.0,168.0 862.0,168.0 868.0,167.0 874.0,167.0 880.0,167.0 886.0,167.0 892.0,167.0 898.0,166.0 904.0,167.0 910.0,167.0 914.0,167.3 919.1,167.3 925.4,167.8 931.0,167.8 937.3,174.7 943.0,166.7 949.2,172.4 954.9,159.9 961.2,166.1 966.8,167.3 973.1,177.5 978.8,165.0 985.0,161.0 991.3,167.3 1003.2,169.0 1008.9,166.7 1015.1,176.4 1020.8,169.0 1027.1,169.0 1032.8,167.8 1039.0,166.1 1044.7,165.0 1050.9,171.2 1056.6,166.1 1062.9,170.1 1068.5,167.3 1074.8,169.0 1086.7,169.0 1093.0,165.0 1098.7,167.3 1104.9,161.6 1111.2,175.2 1114.0,170.7 1116.8,165.0 1123.1,170.1 1129.3,161.6 1135.0,173.0 1141.3,168.4 1147.0,166.1 1153.2,170.1 1158.9,165.6 1165.1,169.0 1171.4,166.7 1177.1,167.8 1183.3,161.6 1189.0,170.7 1194.7,167.8 1200.9,165.6 1207.2,165.6 1212.9,169.0 1224.8,169.0 1231.0,166.7 1236.7,165.6 1243.0,170.1 1248.7,167.8 1260.6,166.7 1273.1,169.0 1284.5,167.3 1290.7,167.8 1302.6,166.7 1314.0,166.7 1320.0,167.0 1326.0,167.0 1332.0,167.0 1338.0,166.1 1344.0,167.9 1350.0,167.0 1356.0,167.0 1362.0,167.0 1368.0,167.9 1374.0,167.0 1380.0,167.0 1386.0,167.0 1392.0,167.0 1398.0,167.0 1404.0,167.9 1410.0,167.0 1416.0,167.0 1422.0,167.9 1428.0,167.0 1434.0,167.9 1440.0,167.0 1446.0,167.0 1452.0,166.1 1458.0,167.0 1464.0,167.0 1470.0,166.1 1476.0,167.0 1482.0,167.9 1488.0,167.0 1494.0,167.0 1500.0,166.1 1506.0,172.0 1512.0,171.2 1518.0,171.2 1524.0,172.0 1530.0,171.2 1536.0,172.8 1542.0,172.0 1548.0,172.8 1554.0,171.2 1560.0,172.0 1566.0,172.0 1572.0,172.0 1578.0,172.8 1584.0,171.2 1590.0,171.2 1596.0,171.2 1602.0,172.0 1608.0,172.0 1614.0,172.0 1620.0,172.0 1626.0,171.2 1632.0,172.0 1638.0,172.0 1644.0,171.2 1650.0,172.0 1656.0,172.0 1662.0,172.0 1669.1,175.5 1675.0,177.3 1680.9,164.5 1686.8,171.4 1692.7,175.0 1699.1,169.5 1705.0,171.8 1710.9,177.3 1716.8,168.6 1722.7,173.2 1725.0,172.8 1731.0,171.2 1737.0,171.2 1743.0,172.0 1749.0,172.0 1755.0,172.0 1762.0,172.0" fill="none" stroke="#1a93b0" stroke-width="2.2" stroke-linejoin="round"/><path d="M232.0,183.2 234.0,183.2 240.0,175.8 247.1,168.4 253.3,175.8 259.0,175.8 265.0,180.3 270.9,172.4 277.0,181.5 282.9,171.2 289.1,172.4 295.1,178.1 301.0,173.5 307.1,183.2 313.0,175.8 319.0,168.4 324.9,175.8 349.3,175.8 355.4,183.8 360.9,167.8 367.0,175.8 373.2,176.9 379.5,174.1 385.1,175.8 409.0,175.8 420.9,180.3 427.2,175.8 434.0,176.4 439.1,173.5 445.4,176.9 451.0,175.8 457.3,168.4 463.0,176.4 468.7,176.4 474.9,180.3 481.2,175.8 505.0,175.8 511.3,170.7 523.2,180.3 528.9,169.5 535.1,182.6 540.8,174.7 547.1,176.9 553.3,175.8 914.0,175.8 942.4,175.8 949.2,179.2 954.9,173.0 961.2,175.8 966.8,176.4 973.1,177.5 978.8,175.8 985.0,174.7 991.3,175.8 1008.9,175.8 1015.1,179.2 1020.8,180.3 1027.1,173.5 1032.8,170.7 1039.0,175.8 1068.5,175.8 1074.8,183.2 1081.0,175.8 1086.7,175.8 1093.0,169.0 1098.7,176.9 1104.9,174.7 1111.2,183.2 1114.0,176.9 1116.8,169.0 1123.1,176.9 1129.3,174.7 1135.0,175.8 1141.3,182.6 1147.0,169.5 1153.2,182.0 1158.9,169.5 1165.1,181.5 1171.4,171.2 1177.1,180.3 1183.3,170.7 1189.0,183.8 1194.7,173.0 1200.9,171.8 1207.2,175.8 1212.9,183.2 1219.1,175.8 1224.8,174.7 1231.0,170.7 1236.7,173.5 1243.0,183.2 1248.7,175.8 1273.1,175.8 1278.8,174.7 1284.5,176.9 1290.7,173.0 1297.0,179.8 1303.2,173.5 1308.9,178.1 1314.0,175.8 1669.1,177.3 1675.0,179.5 1680.9,172.3 1686.8,175.7 1690.0,175.8 1760.0,175.8 1762.0,175.8" fill="none" stroke="#f2922f" stroke-width="2.2" stroke-linejoin="round"/><path d="M232.0,192.8 234.0,192.8 253.3,191.7 259.0,192.8 282.9,192.8 289.1,191.7 295.1,192.8 307.1,191.7 313.0,192.8 324.9,191.7 331.2,192.8 349.3,191.7 355.4,192.8 379.5,191.7 403.3,191.7 409.0,192.8 420.9,192.3 427.2,192.8 434.0,192.3 445.4,192.8 457.3,192.8 463.0,191.7 468.7,192.8 474.9,191.7 481.2,192.8 493.1,192.8 499.3,191.7 505.0,192.8 517.0,191.7 523.2,192.8 528.9,191.7 534.6,192.8 540.8,191.7 547.1,192.8 564.7,192.8 570.9,191.7 577.2,192.8 589.1,192.8 595.4,191.7 601.0,192.8 607.3,191.7 613.0,192.8 624.9,192.8 630.6,190.6 640.0,192.6 646.0,192.6 652.0,191.8 658.0,192.6 664.0,192.6 670.0,192.6 676.0,192.6 682.0,192.6 688.0,192.6 694.0,192.6 700.0,193.4 706.0,192.6 712.0,192.6 718.0,191.8 724.0,191.8 730.0,192.6 736.0,192.6 742.0,192.6 748.0,193.4 754.0,191.8 760.0,192.6 766.0,192.6 772.0,193.4 778.0,192.6 784.0,192.6 790.0,192.6 796.0,191.8 802.0,192.6 808.0,193.4 814.0,192.6 820.0,191.8 826.0,192.6 832.0,192.6 838.0,191.8 844.0,191.8 850.0,192.6 856.0,191.8 862.0,192.6 868.0,191.8 874.0,192.6 880.0,192.6 886.0,192.6 892.0,191.8 898.0,192.6 904.0,192.6 914.0,190.6 919.1,192.3 925.4,182.6 931.0,192.3 937.3,192.8 949.2,192.8 954.9,191.7 1039.0,191.7 1044.7,192.8 1056.6,192.3 1068.5,192.8 1074.8,192.3 1104.9,192.8 1111.2,191.7 1114.0,192.8 1135.6,192.8 1141.3,191.7 1153.2,192.8 1158.9,190.6 1165.1,191.7 1177.1,192.8 1183.3,191.7 1195.2,192.8 1207.2,191.7 1219.1,192.8 1224.8,191.7 1242.4,191.7 1248.7,192.8 1260.6,192.8 1273.1,190.6 1290.7,192.8 1297.0,181.5 1302.6,191.7 1314.0,192.8 1320.0,192.6 1326.0,192.6 1332.0,192.6 1338.0,193.4 1344.0,192.6 1350.0,192.6 1356.0,193.4 1362.0,192.6 1368.0,193.4 1374.0,191.8 1380.0,192.6 1386.0,192.6 1392.0,193.4 1398.0,192.6 1404.0,192.6 1410.0,192.6 1416.0,191.8 1422.0,192.6 1428.0,192.6 1434.0,191.8 1440.0,191.8 1446.0,192.6 1452.0,192.6 1458.0,192.6 1464.0,192.6 1470.0,192.6 1476.0,192.6 1482.0,192.6 1488.0,193.4 1494.0,192.6 1500.0,191.8 1506.0,192.6 1512.0,191.8 1518.0,192.6 1524.0,192.6 1530.0,192.6 1536.0,192.6 1542.0,192.6 1548.0,193.4 1554.0,192.6 1560.0,191.8 1566.0,192.6 1572.0,192.6 1578.0,193.4 1584.0,192.6 1590.0,192.6 1596.0,193.4 1602.0,191.8 1608.0,192.6 1614.0,193.4 1620.0,191.8 1626.0,192.6 1632.0,192.6 1638.0,192.6 1644.0,192.6 1650.0,191.8 1656.0,192.6 1662.7,192.3 1669.1,184.5 1675.0,192.3 1680.0,192.6 1686.0,192.6 1692.0,192.6 1698.0,192.6 1704.0,192.6 1710.0,192.6 1716.0,193.4 1722.0,192.6 1728.0,192.6 1734.0,193.4 1740.0,191.8 1746.0,192.6 1752.0,192.6 1758.0,192.6 1762.0,192.6" fill="none" stroke="#f0185a" stroke-width="2.2" stroke-linejoin="round"/><path d="M232.0,247.0 234.0,247.0 240.8,239.1 247.1,234.0 253.3,219.8 259.0,261.2 265.2,244.2 270.9,232.3 277.0,247.6 282.9,238.0 289.1,214.1 295.1,267.5 301.0,215.2 307.1,264.1 313.0,239.1 319.0,230.6 324.9,240.8 331.2,228.3 336.8,251.0 343.1,236.2 349.3,244.8 355.4,243.1 360.9,228.9 367.0,240.8 373.2,241.9 379.5,240.2 385.1,216.9 390.8,241.9 397.1,238.0 403.3,241.9 409.0,245.9 414.7,244.8 420.9,247.0 427.2,238.5 434.0,239.7 439.1,238.0 445.4,240.2 451.0,239.1 457.3,231.7 463.0,245.3 469.2,239.7 474.9,241.9 481.2,238.5 505.0,238.5 511.3,235.7 517.0,239.7 523.2,241.9 528.9,235.7 535.1,243.1 540.8,238.5 547.1,240.2 553.3,238.5 559.0,238.5 564.7,239.7 570.9,245.9 576.6,257.8 582.9,257.8 589.1,256.7 606.7,256.7 613.0,257.8 619.2,256.7 628.3,256.7 640.0,258.2 646.0,257.3 652.0,257.3 658.0,258.2 664.0,257.3 670.0,257.3 676.0,257.3 682.0,256.4 688.0,258.2 694.0,256.4 700.0,257.3 706.0,257.3 712.0,257.3 718.0,257.3 724.0,257.3 730.0,257.3 736.0,257.3 742.0,257.3 748.0,257.3 754.0,257.3 760.0,257.3 766.0,257.3 772.0,256.4 778.0,256.4 784.0,257.3 790.0,257.3 796.0,257.3 802.0,257.3 808.0,256.4 814.0,257.3 820.0,257.3 826.0,256.4 832.0,256.4 838.0,258.2 844.0,257.3 850.0,257.3 856.0,257.3 862.0,258.2 868.0,258.2 874.0,257.3 880.0,257.3 886.0,257.3 892.0,256.4 898.0,258.2 904.0,256.4 910.0,257.3 919.1,257.8 931.0,257.8 937.3,269.8 943.0,253.3 949.2,266.9 954.9,239.7 961.2,256.7 966.8,256.7 973.1,275.5 978.8,251.0 985.0,248.2 991.3,257.8 997.0,257.8 1003.2,260.7 1008.9,256.1 1015.1,273.8 1020.8,260.1 1027.1,255.6 1032.8,253.9 1039.0,252.7 1045.2,253.9 1050.9,262.4 1056.6,253.9 1062.9,262.4 1068.5,257.3 1074.8,264.1 1081.0,257.8 1086.7,257.8 1093.0,249.9 1098.7,257.3 1104.9,247.6 1111.2,276.0 1114.0,264.1 1116.8,248.2 1123.1,260.7 1129.3,245.3 1135.0,269.8 1141.3,260.7 1147.0,251.6 1153.2,263.5 1158.9,251.6 1165.1,262.4 1171.4,253.9 1177.1,261.2 1183.3,245.3 1189.0,271.5 1194.7,256.1 1200.9,255.0 1207.2,255.0 1212.9,264.7 1219.1,257.3 1224.8,257.3 1231.0,255.0 1236.7,253.9 1243.0,264.7 1248.7,258.4 1254.9,257.3 1266.3,257.3 1273.1,258.4 1278.8,257.3 1285.0,258.4 1290.7,255.0 1297.0,259.5 1303.2,256.1 1308.9,259.5 1314.0,257.3 1320.0,257.8 1326.0,257.0 1332.0,257.8 1338.0,257.8 1344.0,257.8 1350.0,257.8 1356.0,257.8 1362.0,257.8 1368.0,258.6 1374.0,257.8 1380.0,257.8 1386.0,257.8 1392.0,257.8 1398.0,257.8 1404.0,257.8 1410.0,257.8 1416.0,257.0 1422.0,257.8 1428.0,257.8 1434.0,257.0 1440.0,257.8 1446.0,257.8 1452.0,257.8 1460.0,257.0 1470.2,257.0 1477.0,258.2 1485.6,256.6 1494.1,258.2 1500.9,256.6 1506.0,257.8 1596.4,257.8 1603.2,259.2 1609.1,256.6 1614.3,257.8 1662.8,257.8 1668.8,264.7 1675.6,267.2 1681.2,239.9 1686.7,258.2 1692.7,259.9 1698.6,254.8 1704.6,258.2 1710.9,266.4 1716.5,250.7 1723.3,257.0 1728.5,257.8 1760.0,257.8 1762.0,257.8" fill="none" stroke="#34cc90" stroke-width="2.2" stroke-linejoin="round"/><path d="M232.0,283.4 234.0,283.4 240.8,280.6 247.1,279.4 253.3,271.5 259.0,291.9 265.2,282.8 270.9,278.9 277.0,284.0 282.9,280.6 289.1,270.3 295.1,292.5 301.0,273.2 307.1,289.1 313.0,280.6 319.0,278.9 324.9,281.1 331.2,277.7 336.8,285.1 343.1,280.0 349.3,284.0 355.4,282.3 360.9,277.7 367.0,281.7 379.5,281.7 385.1,271.5 390.8,282.8 397.1,280.6 403.3,282.8 409.0,284.0 414.7,283.4 420.9,284.0 427.2,280.6 434.0,280.6 451.0,280.6 457.3,278.3 463.0,282.8 469.2,281.7 474.9,281.7 481.2,280.6 517.0,280.6 523.2,282.3 528.9,280.6 535.1,282.3 540.8,280.6 634.0,280.6 640.0,280.6 646.0,280.6 652.0,280.6 658.0,281.2 664.0,280.6 670.0,280.6 676.0,280.0 682.0,280.0 688.0,281.2 694.0,280.6 700.0,281.2 706.0,280.6 712.0,280.6 718.0,280.6 724.0,280.6 730.0,280.0 736.0,280.6 742.0,280.6 748.0,280.6 754.0,280.6 760.0,280.6 766.0,280.6 772.0,280.6 778.0,280.6 784.0,280.6 790.0,280.6 796.0,281.2 802.0,281.2 808.0,280.6 814.0,280.6 820.0,280.6 826.0,280.0 832.0,280.6 838.0,280.6 844.0,280.6 850.0,280.6 856.0,281.2 862.0,281.2 868.0,280.6 874.0,281.2 880.0,281.2 886.0,280.6 892.0,280.6 898.0,280.6 904.0,280.0 910.0,280.0 914.0,280.6 931.0,280.6 937.3,290.2 943.0,280.0 949.2,285.1 954.9,272.0 961.2,279.4 966.8,280.6 973.1,292.5 978.8,278.3 985.0,273.8 991.3,280.6 1003.2,282.8 1008.9,280.0 1015.1,291.4 1020.8,280.6 1027.6,280.6 1045.2,277.7 1050.9,285.1 1056.6,280.0 1062.9,283.4 1068.5,281.1 1074.8,283.4 1081.0,281.1 1086.7,281.1 1093.0,277.7 1098.7,281.1 1104.9,276.0 1111.2,289.7 1114.0,283.4 1116.8,276.6 1123.1,283.4 1129.3,276.0 1135.0,287.4 1141.3,282.3 1147.0,278.9 1153.2,284.0 1158.9,278.9 1165.1,283.4 1171.4,280.0 1177.1,283.4 1183.3,276.0 1189.0,287.4 1194.7,281.1 1200.9,280.0 1207.2,280.0 1212.9,284.0 1219.1,281.1 1231.0,281.1 1236.7,280.0 1243.0,283.4 1248.7,280.6 1314.0,280.6 1460.0,280.8 1500.9,280.8 1506.9,297.0 1596.4,297.0 1603.2,298.4 1609.1,297.0 1662.8,297.0 1668.8,299.6 1675.1,299.6 1681.2,291.1 1686.7,297.0 1692.7,298.7 1698.6,295.7 1704.6,297.0 1710.6,300.1 1716.5,294.5 1722.5,297.0 1760.0,297.0 1762.0,297.0" fill="none" stroke="#a848b0" stroke-width="2.2" stroke-linejoin="round"/><path d="M232.0,322.1 234.0,322.1 240.8,332.3 246.8,341.7 252.7,323.8 259.2,345.1 264.7,335.7 270.6,333.2 276.6,328.1 283.1,337.5 288.9,325.5 294.8,340.9 300.8,325.5 307.0,335.7 312.7,333.2 318.9,337.5 324.8,333.2 330.8,325.5 336.8,338.3 343.1,330.6 349.1,333.2 355.0,318.7 361.0,334.9 366.9,331.5 372.9,333.2 378.9,329.8 384.8,320.4 390.8,332.3 396.8,329.8 402.7,331.5 408.7,336.6 414.7,331.5 420.6,328.9 426.6,332.3 432.6,330.6 438.5,333.2 444.5,329.8 450.5,329.8 456.4,336.6 462.4,329.8 468.4,329.8 474.3,323.8 480.3,333.2 486.3,334.0 492.2,333.2 498.2,333.2 505.0,333.2 511.0,338.3 516.9,328.9 522.9,325.5 528.9,337.5 534.0,321.3 540.8,335.7 546.8,328.1 552.7,332.3 564.7,333.2 570.6,334.9 576.6,333.2 583.1,335.7 594.8,334.0 600.8,334.9 607.0,333.2 612.7,334.0 618.9,332.0 624.8,333.7 630.8,333.7 643.1,332.0 661.0,334.9 673.8,332.7 684.8,333.7 696.8,333.2 702.7,336.1 708.7,333.2 714.7,334.0 732.6,332.3 738.5,334.0 750.5,332.0 762.4,333.2 774.3,333.2 786.3,334.9 793.1,333.2 799.0,334.0 811.0,333.2 816.9,334.0 822.9,332.3 834.0,332.7 840.8,334.9 852.7,332.7 870.6,332.7 876.6,334.9 883.1,332.7 888.9,333.7 894.8,332.7 900.8,334.9 907.0,332.7 912.7,332.7 918.9,334.0 924.8,332.7 930.8,334.9 936.8,341.2 943.1,332.7 949.1,336.1 955.0,329.3 961.0,334.0 966.9,332.7 972.9,346.0 978.9,327.6 990.8,334.0 996.8,332.7 1002.7,336.1 1008.7,332.7 1014.7,339.2 1020.6,327.6 1026.6,335.7 1032.6,340.0 1038.5,330.6 1044.5,331.5 1050.5,337.5 1056.4,330.6 1062.4,338.3 1068.4,332.3 1074.3,323.5 1080.3,334.4 1086.3,334.4 1093.1,340.5 1099.0,329.8 1105.0,328.9 1116.9,340.0 1122.9,331.5 1128.9,328.6 1134.0,345.1 1140.8,321.8 1146.8,339.5 1152.7,327.6 1159.2,338.3 1164.7,326.9 1170.6,337.8 1176.6,329.8 1183.1,333.7 1188.9,330.6 1194.8,336.6 1200.8,338.8 1207.0,329.8 1212.7,324.7 1218.9,332.7 1224.8,334.9 1230.8,338.8 1236.8,334.0 1243.1,323.8 1249.1,332.7 1255.0,334.0 1261.0,332.0 1266.9,334.4 1278.9,336.1 1284.8,330.6 1290.8,338.8 1296.8,329.8 1302.7,337.1 1308.7,329.8 1314.7,332.7 1320.6,333.7 1332.6,332.7 1344.5,334.9 1356.4,332.7 1368.4,334.0 1374.3,332.7 1380.3,334.0 1386.3,332.7 1392.2,333.7 1405.0,334.9 1422.9,332.0 1434.0,334.0 1447.0,333.3 1453.4,334.0 1463.6,332.7 1471.0,334.0 1477.5,333.3 1484.0,334.0 1489.6,332.7 1501.0,332.7 1507.2,345.7 1513.6,345.7 1519.2,346.6 1525.1,350.3 1531.2,346.6 1536.8,348.1 1543.3,345.7 1556.2,347.0 1561.8,348.1 1567.4,348.1 1572.9,345.7 1578.5,345.7 1585.0,351.3 1591.4,347.6 1597.0,346.6 1602.5,346.6 1609.0,350.3 1615.5,347.6 1622.0,347.6 1627.6,346.6 1645.2,345.7 1656.3,348.1 1663.7,346.3 1669.2,352.2 1674.8,350.3 1681.3,345.7 1686.8,346.6 1693.3,351.3 1698.9,344.8 1705.3,346.3 1710.9,353.1 1717.0,343.9 1722.9,348.1 1735.9,345.7 1747.0,344.8 1753.5,347.6 1760.0,344.4 1762.0,344.4" fill="none" stroke="#34cc90" stroke-width="2.2" stroke-linejoin="round"/><path d="M232.0,377.5 234.0,377.5 240.8,380.9 246.8,385.2 252.7,379.2 259.2,386.0 264.7,376.7 270.6,383.5 276.6,380.1 283.1,385.2 288.9,380.1 294.8,381.8 300.8,384.3 307.0,376.7 312.7,380.9 318.9,386.0 324.8,384.3 330.8,381.8 336.8,378.4 343.1,380.1 349.1,376.7 355.0,375.8 361.0,381.8 366.9,380.9 378.9,380.9 384.8,377.5 390.8,380.1 396.8,380.1 402.7,377.5 408.7,381.8 414.7,380.1 420.6,380.9 426.6,383.5 432.6,382.6 438.5,381.4 444.5,380.1 450.5,380.1 456.4,383.5 462.4,378.7 468.4,381.4 474.3,376.7 480.3,378.4 486.3,383.1 492.2,381.8 511.0,381.8 516.9,378.7 522.9,377.5 528.9,381.8 534.0,376.7 540.8,382.6 546.8,380.1 552.7,381.8 564.7,382.6 576.6,374.1 583.1,373.2 594.8,373.6 612.7,371.2 618.9,374.1 624.8,371.9 630.8,376.3 636.8,374.1 643.1,374.1 649.1,375.8 655.0,372.9 661.0,374.1 666.9,371.9 673.8,372.9 684.8,371.5 690.8,374.1 696.8,371.2 702.7,373.2 708.7,371.2 714.7,374.1 720.6,373.2 726.6,371.2 738.5,374.1 750.5,371.9 762.4,372.9 774.3,371.2 780.3,374.1 786.3,372.9 805.0,371.9 811.0,374.1 816.9,371.9 822.9,372.9 834.0,371.5 840.8,375.0 846.8,374.1 852.7,369.8 859.2,375.0 864.7,372.9 870.6,371.5 883.1,371.9 888.9,372.9 894.8,371.9 900.8,375.0 907.0,375.0 912.7,372.9 918.9,371.5 924.8,375.0 930.8,372.4 936.8,376.3 943.1,375.0 949.1,371.9 955.0,369.8 961.0,369.8 966.9,371.9 972.9,376.3 978.9,373.2 984.8,370.7 996.8,375.0 1008.7,373.6 1014.7,376.3 1020.6,369.8 1026.6,375.8 1032.6,378.0 1038.5,373.2 1044.5,370.7 1050.5,375.0 1056.4,374.1 1062.4,371.5 1068.4,372.9 1074.3,370.7 1086.3,374.6 1093.1,376.3 1099.0,371.9 1105.0,371.9 1111.0,368.1 1116.9,376.3 1122.9,372.4 1134.0,372.4 1140.8,367.8 1146.8,375.0 1152.7,367.8 1159.2,375.8 1164.7,369.8 1170.6,375.3 1176.6,371.9 1183.1,375.0 1188.9,365.6 1194.8,376.3 1200.8,372.4 1207.0,371.5 1212.7,365.1 1218.9,374.1 1224.8,373.2 1230.8,378.0 1243.1,366.1 1249.1,372.4 1261.0,372.4 1272.9,375.0 1284.8,371.2 1290.8,375.0 1296.8,371.2 1302.7,374.1 1308.7,371.2 1314.7,372.9 1332.6,372.9 1338.5,374.1 1344.5,374.1 1350.5,371.9 1356.4,372.9 1362.4,371.5 1374.3,372.9 1393.1,372.9 1405.0,369.8 1411.0,371.9 1422.9,372.9 1434.0,372.6 1441.4,375.3 1447.0,372.6 1453.4,375.3 1459.9,372.6 1471.0,370.7 1477.5,372.9 1483.1,371.6 1489.6,372.6 1501.0,372.6 1507.2,406.8 1574.8,406.8 1579.4,405.9 1584.0,406.8 1700.7,406.8 1705.3,405.9 1710.0,406.8 1760.0,406.8 1762.0,406.8" fill="none" stroke="#a848b0" stroke-width="2.2" stroke-linejoin="round"/><path d="M232.0,441.0 234.0,441.0 240.8,439.3 246.8,438.4 252.7,429.9 259.2,447.8 264.7,441.0 270.6,437.2 276.6,441.3 283.1,438.9 288.9,428.7 294.8,449.5 300.8,429.9 307.0,447.5 312.7,438.9 318.9,435.9 324.8,439.3 330.8,433.8 336.8,443.2 343.1,437.9 349.1,441.0 355.0,439.3 361.0,435.9 366.9,440.1 378.9,439.3 384.8,429.4 390.8,440.1 396.8,437.9 408.7,442.3 414.7,441.3 420.6,441.3 426.6,438.9 450.5,438.9 456.4,437.2 462.4,441.3 468.4,438.9 523.8,438.9 528.9,437.9 534.0,438.8 564.7,438.8 570.4,441.1 576.7,446.1 914.0,446.1 929.5,446.1 931.0,446.1 937.0,451.2 943.0,444.7 948.9,450.4 954.9,439.3 960.9,446.1 966.8,446.1 972.8,453.2 978.8,444.0 984.7,441.8 990.7,446.1 996.7,446.1 1002.6,448.1 1008.6,446.1 1014.6,452.9 1020.5,446.1 1032.5,446.1 1039.3,444.0 1044.4,444.7 1051.2,448.1 1057.2,444.7 1063.1,448.1 1069.1,446.1 1075.1,448.1 1081.0,446.1 1093.0,444.7 1098.9,446.1 1104.9,442.7 1110.9,452.6 1116.8,443.5 1122.8,447.5 1128.8,441.8 1134.7,451.5 1140.7,447.5 1146.7,444.7 1152.6,448.1 1158.6,444.7 1164.6,448.1 1170.5,446.1 1176.5,447.5 1182.5,441.8 1188.4,450.4 1194.4,446.1 1206.3,444.7 1214.0,448.1 1219.1,446.1 1231.0,446.1 1237.0,444.4 1243.0,448.1 1248.9,446.1 1510.6,446.1 1560.0,445.9 1596.9,445.9 1603.0,447.2 1608.9,445.9 1662.8,445.9 1668.5,450.1 1675.3,450.1 1681.0,438.7 1686.7,445.5 1693.0,448.4 1699.2,444.7 1704.9,445.9 1711.1,450.4 1716.8,442.7 1722.5,445.9 1760.0,445.9 1762.0,445.9" fill="none" stroke="#a848b0" stroke-width="2.2" stroke-linejoin="round"/><path d="M232.0,462.8 234.0,462.8 245.9,460.1 252.7,461.4 264.7,461.8 270.6,461.1 276.6,463.1 283.1,460.1 294.8,461.8 300.8,461.1 307.0,463.1 312.7,461.1 318.9,460.1 330.8,461.1 336.8,462.3 343.1,461.1 355.0,463.1 361.0,460.1 372.9,462.3 378.9,461.1 402.7,461.1 420.6,463.1 426.6,461.4 432.6,462.3 438.5,461.1 444.5,462.3 456.4,460.1 462.4,461.8 474.3,463.1 480.3,461.1 510.1,460.6 522.9,463.1 528.9,460.1 540.8,460.9 547.6,462.0 554.5,460.9 604.5,460.9 612.4,462.5 620.4,460.9 720.4,460.9 727.2,462.5 734.0,460.9 847.6,460.9 853.3,462.5 859.0,460.9 914.0,461.1 924.9,460.9 931.9,462.3 943.0,461.1 948.9,462.3 956.6,461.1 966.8,461.1 972.8,462.3 978.8,461.1 990.7,461.1 996.7,462.3 1008.6,461.1 1020.5,463.1 1026.5,461.1 1032.5,459.7 1045.2,461.1 1051.2,462.3 1057.2,461.1 1075.1,463.1 1081.0,461.1 1093.0,459.7 1098.9,462.3 1104.9,461.1 1110.9,463.1 1116.8,459.7 1122.8,462.3 1128.8,461.1 1140.7,463.1 1146.7,459.7 1152.6,463.1 1158.6,459.7 1164.6,463.1 1170.5,461.1 1176.5,462.3 1182.5,459.7 1188.4,463.1 1194.4,461.1 1206.3,461.1 1214.0,463.1 1219.1,461.1 1225.9,461.1 1231.0,459.7 1237.0,461.1 1243.0,463.1 1248.9,461.1 1266.8,461.1 1272.8,462.3 1278.8,461.1 1284.7,462.3 1290.7,461.1 1296.7,462.3 1302.6,461.1 1308.6,462.3 1314.6,461.1 1510.6,461.1 1560.0,461.1 1596.9,461.1 1603.0,462.2 1608.9,461.1 1662.8,461.1 1668.5,462.2 1675.3,462.2 1681.0,461.1 1704.9,461.1 1711.1,462.2 1716.8,461.1 1760.0,461.1 1762.0,461.1" fill="none" stroke="#f2922f" stroke-width="2.2" stroke-linejoin="round"/><path d="M232.0,490.1 234.0,490.1 240.8,487.8 246.8,486.7 252.7,475.9 259.2,498.9 264.7,490.4 270.6,485.3 276.6,490.1 283.1,487.0 288.9,474.2 294.8,501.0 300.8,475.9 307.0,498.9 312.7,487.8 318.9,483.9 324.8,487.8 330.8,481.0 336.8,493.5 343.1,486.1 349.1,490.7 355.0,487.0 361.0,484.4 366.9,487.8 378.9,487.8 384.8,475.9 390.8,489.6 396.8,486.1 408.7,490.7 414.7,490.4 420.6,490.7 426.6,487.0 450.5,487.0 456.4,484.4 462.4,490.4 468.4,487.0 528.9,487.0 534.0,488.1 540.8,486.5 564.7,486.5 570.4,490.4 576.7,497.9 914.0,497.7 929.5,497.9 931.0,497.7 937.0,504.0 943.0,495.9 948.9,502.0 954.9,488.7 960.9,496.7 966.8,497.7 972.8,507.4 978.8,493.8 984.7,493.0 990.7,497.7 1002.6,498.9 1008.6,496.7 1014.6,506.1 1020.5,497.7 1032.5,497.2 1039.3,495.0 1044.4,495.9 1051.2,500.1 1057.2,495.9 1063.1,501.0 1069.1,497.7 1075.1,498.9 1087.0,497.7 1093.0,495.9 1098.9,496.7 1104.9,493.0 1110.9,505.4 1116.8,494.7 1122.8,499.3 1128.8,491.8 1134.7,504.4 1140.7,498.1 1146.7,495.9 1152.6,500.1 1158.6,495.9 1164.6,500.1 1170.5,497.2 1176.5,498.9 1182.5,493.0 1188.4,503.2 1194.4,498.1 1206.3,496.7 1214.0,500.1 1219.1,497.7 1231.0,497.7 1237.0,495.9 1243.0,499.3 1248.9,497.7 1510.6,497.7 1560.0,497.8 1596.9,497.8 1603.0,499.3 1608.9,496.7 1614.5,497.8 1662.8,497.8 1668.5,502.0 1675.3,502.9 1681.0,488.4 1686.7,497.5 1693.0,500.1 1699.2,495.9 1704.9,497.5 1711.1,502.3 1716.8,493.6 1722.5,497.8 1760.0,497.8 1762.0,497.8" fill="none" stroke="#a848b0" stroke-width="2.2" stroke-linejoin="round"/><path d="M232.0,521.1 234.0,521.1 245.9,519.0 252.7,520.2 264.7,520.7 270.6,519.7 276.6,521.1 283.1,519.0 294.8,519.7 300.8,519.7 307.0,521.9 312.7,520.2 318.9,519.0 330.8,519.7 343.1,519.7 355.0,521.1 361.0,519.0 420.6,520.7 426.6,519.4 456.4,519.0 462.4,520.2 474.3,521.1 480.3,519.7 510.1,519.0 522.9,521.1 528.9,519.0 540.8,519.5 914.0,519.9 929.5,519.5 1014.6,519.9 1020.5,521.1 1026.5,519.0 1032.5,518.5 1038.4,519.9 1069.1,519.9 1075.1,521.1 1093.0,519.0 1110.9,521.1 1116.8,519.0 1140.7,521.1 1146.7,519.0 1152.6,521.1 1158.6,519.0 1164.6,521.1 1170.5,519.0 1176.5,521.1 1182.5,519.0 1188.4,521.1 1194.4,519.0 1206.3,521.1 1214.0,521.1 1219.1,519.9 1231.0,519.0 1243.0,521.1 1248.9,519.9 1278.8,519.9 1284.7,521.1 1290.7,519.0 1296.7,521.1 1302.6,519.9 1308.6,521.1 1314.6,519.9 1510.6,519.9 1560.0,519.7 1760.0,519.7 1762.0,519.7" fill="none" stroke="#f4a838" stroke-width="2.2" stroke-linejoin="round"/><path d="M234,642L234,581.8 241,576.0 246,572.3 247,571.6 253.5,559.3 258,584.0 259,589.5 265.5,578.6 270,571.9 271,570.4 277.5,581.5 282,575.6 283,574.2 289,556.8 294,590.1 295,597.1 301,560.1 306,586.4 307,592.1 313,575.9 318,570.0 319,568.9 325,576.0 330,568.5 331.5,567.0 337,584.0 342,576.4 343.5,574.6 349.5,581.7 354,579.3 355.5,578.4 361,567.8 366,575.3 367,576.9 373.5,578.3 378,576.3 379.5,575.6 385.5,558.8 390,574.1 391,577.5 397.5,574.5 402,577.3 403.5,578.3 409.5,581.2 414,580.5 415,580.4 421.5,581.6 426,577.5 427.5,576.1 434,575.5 438,575.1 439,575.0 445.5,576.1 450,575.2 451,575.0 457.5,569.6 462,578.1 463,580.0 469.5,576.2 474,578.0 475,578.4 481,576.2 486,576.1 487,576.1 493,576.1 498,576.1 501,576.1 505,575.0 510,573.2 511.5,572.7 517.5,576.0 522,577.8 523.5,578.2 529,572.2 534,577.5 535.5,578.8 541,575.2 546,575.9 547.5,576.1 553.5,576.1 558,576.1 565.5,576.1 570,580.6 571,581.6 577.5,591.1 582,591.1 589.5,591.1 594,591.1 595.5,591.1 604.5,591.1 606,591.1 608,591.1 609.5,591.3 613.5,592.0 617.5,591.1 618,591.1 627.5,591.1 630,591.1 640,591.2 642,591.2 646,591.2 652,591.2 654,591.2 658,591.2 664,591.2 666,591.2 670,591.2 676,591.2 678,591.2 682,591.2 688,591.2 690,591.2 694,591.2 700,591.2 702,591.2 706,591.2 712,591.2 714,591.2 718,591.2 724,591.2 726,591.2 730,591.2 736,591.2 738,591.2 742,591.2 748,591.2 750,591.2 754,591.2 760,591.2 762,591.2 766,591.2 772,591.2 774,591.2 778,591.2 784,591.2 786,591.2 790,591.2 796,591.2 798,591.2 802,591.2 808,591.2 810,591.2 814,591.2 820,591.2 822,591.2 826,591.2 832,591.2 834,591.2 838,591.2 844,591.2 846,591.2 850,591.2 856,591.2 858,591.2 862,591.2 868,591.2 870,591.2 874,591.2 880,591.2 882,591.2 886,591.2 892,591.2 894,591.2 898,591.2 904,591.2 906,591.2 910,591.2 912,591.2 914,590.9 918,590.9 930,590.9 931,590.9 937.5,599.9 942,591.0 943.5,588.7 949,597.2 954,581.4 955,578.1 961,589.5 966,590.9 967.5,591.5 973,605.8 978,588.4 979,585.5 985,583.3 990,589.0 991.5,590.5 1002,593.7 1003,594.0 1009,590.7 1014,602.7 1015,605.1 1021,593.4 1026,590.7 1027,590.2 1033,588.9 1038,587.4 1039,587.0 1045,588.1 1050,593.5 1051.5,595.2 1057,589.7 1062,593.9 1063.5,595.2 1069,591.9 1074,595.4 1075.5,596.2 1081,591.3 1086,591.2 1086.5,591.2 1093,585.6 1098,589.2 1099,589.9 1105.5,584.0 1110,601.5 1111,605.4 1114,596.4 1117.5,584.6 1122,592.2 1123,593.9 1129.5,583.2 1134,597.2 1135,600.3 1141.5,593.2 1146,587.9 1147,586.8 1153,596.0 1158,589.0 1159.5,586.8 1165.5,594.9 1170,590.9 1171.5,589.6 1177,593.5 1182,585.0 1183.5,583.4 1189,602.6 1194,591.6 1194.5,590.5 1201,589.3 1206,589.3 1207,589.3 1213.5,597.4 1218,592.7 1219,591.7 1225.5,591.2 1230,589.4 1231,589.0 1236.5,588.2 1242,594.9 1243.5,596.9 1249,591.5 1254,591.2 1260.5,591.2 1266,591.2 1273,591.2 1278,591.2 1279,591.3 1284.5,591.8 1290,589.8 1290.5,589.6 1297,593.2 1302,591.0 1303,590.5 1309,591.8 1314,590.9 1320,591.2 1326,591.2 1332,591.2 1338,591.2 1344,591.2 1350,591.2 1356,591.2 1362,591.2 1368,591.2 1374,591.2 1380,591.2 1386,591.2 1392,591.2 1398,591.2 1404,591.2 1410,591.2 1416,591.2 1422,591.2 1428,591.2 1434,591.2 1440,591.2 1446,591.2 1452,591.2 1455,591.2 1458,591.2 1460,591.2 1470,591.2 1477,591.2 1482,591.2 1490.5,591.2 1494,591.2 1501,591.2 1506,591.2 1507,591.2 1518,591.2 1519.5,591.2 1528,591.2 1530,591.2 1531.5,591.2 1542,591.2 1545,591.2 1554,591.2 1562.5,591.2 1566,591.2 1578,591.2 1579.5,591.2 1590,591.2 1596.5,591.2 1602,591.2 1610,591.2 1613.5,591.2 1614,591.2 1626,591.2 1630.5,591.2 1638,591.2 1647.5,591.2 1650,591.2 1662,591.2 1663,591.4 1669,597.9 1674,599.0 1675,599.2 1681,577.9 1686,587.3 1687.5,590.6 1693.5,594.1 1698,590.5 1699.5,589.3 1705.5,592.4 1710,596.0 1711.5,597.0 1717.5,585.4 1722,589.7 1723.5,591.0 1732.5,591.1 1734,591.1 1746,591.1 1750,591.1 1758,591.2 1760,591.2L1760,642Z" fill="#2dba6c"/><path d="M234,581.8 241,576.0 246,572.3 247,571.6 253.5,559.3 258,584.0 259,589.5 265.5,578.6 270,571.9 271,570.4 277.5,581.5 282,575.6 283,574.2 289,556.8 294,590.1 295,597.1 301,560.1 306,586.4 307,592.1 313,575.9 318,570.0 319,568.9 325,576.0 330,568.5 331.5,567.0 337,584.0 342,576.4 343.5,574.6 349.5,581.7 354,579.3 355.5,578.4 361,567.8 366,575.3 367,576.9 373.5,578.3 378,576.3 379.5,575.6 385.5,558.8 390,574.1 391,577.5 397.5,574.5 402,577.3 403.5,578.3 409.5,581.2 414,580.5 415,580.4 421.5,581.6 426,577.5 427.5,576.1 434,575.5 438,575.1 439,575.0 445.5,576.1 450,575.2 451,575.0 457.5,569.6 462,578.1 463,580.0 469.5,576.2 474,578.0 475,578.4 481,576.2 486,576.1 487,576.1 493,576.1 498,576.1 501,576.1 505,575.0 510,573.2 511.5,572.7 517.5,576.0 522,577.8 523.5,578.2 529,572.2 534,577.5 535.5,578.8 541,575.2 546,575.9 547.5,576.1 553.5,576.1 558,576.1 565.5,576.1 570,580.6 571,581.6 577.5,591.1 582,591.1 589.5,591.1 594,591.1 595.5,591.1 604.5,591.1 606,591.1 608,591.1 609.5,591.3 613.5,592.0 617.5,591.1 618,591.1 627.5,591.1 630,591.1 640,591.2 642,591.2 646,591.2 652,591.2 654,591.2 658,591.2 664,591.2 666,591.2 670,591.2 676,591.2 678,591.2 682,591.2 688,591.2 690,591.2 694,591.2 700,591.2 702,591.2 706,591.2 712,591.2 714,591.2 718,591.2 724,591.2 726,591.2 730,591.2 736,591.2 738,591.2 742,591.2 748,591.2 750,591.2 754,591.2 760,591.2 762,591.2 766,591.2 772,591.2 774,591.2 778,591.2 784,591.2 786,591.2 790,591.2 796,591.2 798,591.2 802,591.2 808,591.2 810,591.2 814,591.2 820,591.2 822,591.2 826,591.2 832,591.2 834,591.2 838,591.2 844,591.2 846,591.2 850,591.2 856,591.2 858,591.2 862,591.2 868,591.2 870,591.2 874,591.2 880,591.2 882,591.2 886,591.2 892,591.2 894,591.2 898,591.2 904,591.2 906,591.2 910,591.2 912,591.2 914,590.9 918,590.9 930,590.9 931,590.9 937.5,599.9 942,591.0 943.5,588.7 949,597.2 954,581.4 955,578.1 961,589.5 966,590.9 967.5,591.5 973,605.8 978,588.4 979,585.5 985,583.3 990,589.0 991.5,590.5 1002,593.7 1003,594.0 1009,590.7 1014,602.7 1015,605.1 1021,593.4 1026,590.7 1027,590.2 1033,588.9 1038,587.4 1039,587.0 1045,588.1 1050,593.5 1051.5,595.2 1057,589.7 1062,593.9 1063.5,595.2 1069,591.9 1074,595.4 1075.5,596.2 1081,591.3 1086,591.2 1086.5,591.2 1093,585.6 1098,589.2 1099,589.9 1105.5,584.0 1110,601.5 1111,605.4 1114,596.4 1117.5,584.6 1122,592.2 1123,593.9 1129.5,583.2 1134,597.2 1135,600.3 1141.5,593.2 1146,587.9 1147,586.8 1153,596.0 1158,589.0 1159.5,586.8 1165.5,594.9 1170,590.9 1171.5,589.6 1177,593.5 1182,585.0 1183.5,583.4 1189,602.6 1194,591.6 1194.5,590.5 1201,589.3 1206,589.3 1207,589.3 1213.5,597.4 1218,592.7 1219,591.7 1225.5,591.2 1230,589.4 1231,589.0 1236.5,588.2 1242,594.9 1243.5,596.9 1249,591.5 1254,591.2 1260.5,591.2 1266,591.2 1273,591.2 1278,591.2 1279,591.3 1284.5,591.8 1290,589.8 1290.5,589.6 1297,593.2 1302,591.0 1303,590.5 1309,591.8 1314,590.9 1320,591.2 1326,591.2 1332,591.2 1338,591.2 1344,591.2 1350,591.2 1356,591.2 1362,591.2 1368,591.2 1374,591.2 1380,591.2 1386,591.2 1392,591.2 1398,591.2 1404,591.2 1410,591.2 1416,591.2 1422,591.2 1428,591.2 1434,591.2 1440,591.2 1446,591.2 1452,591.2 1455,591.2 1458,591.2 1460,591.2 1470,591.2 1477,591.2 1482,591.2 1490.5,591.2 1494,591.2 1501,591.2 1506,591.2 1507,591.2 1518,591.2 1519.5,591.2 1528,591.2 1530,591.2 1531.5,591.2 1542,591.2 1545,591.2 1554,591.2 1562.5,591.2 1566,591.2 1578,591.2 1579.5,591.2 1590,591.2 1596.5,591.2 1602,591.2 1610,591.2 1613.5,591.2 1614,591.2 1626,591.2 1630.5,591.2 1638,591.2 1647.5,591.2 1650,591.2 1662,591.2 1663,591.4 1669,597.9 1674,599.0 1675,599.2 1681,577.9 1686,587.3 1687.5,590.6 1693.5,594.1 1698,590.5 1699.5,589.3 1705.5,592.4 1710,596.0 1711.5,597.0 1717.5,585.4 1722,589.7 1723.5,591.0 1732.5,591.1 1734,591.1 1746,591.1 1750,591.1 1758,591.2 1760,591.2" fill="none" stroke="#36d07e" stroke-width="1.2" stroke-linejoin="round"/><path d="M234,642L234,591.6 241,587.4 246,585.2 247,584.8 253.5,573.7 258,597.5 259,602.7 265.5,590.7 270,584.6 271,583.3 277.5,592.3 282,587.9 283,586.8 289,571.5 294,599.5 295,605.4 301,574.1 306,598.1 307,603.2 313,588.4 318,583.1 319,582.1 325,587.7 330,581.1 331.5,579.8 337,595.7 342,588.3 343.5,586.6 349.5,591.6 354,589.5 355.5,588.8 361,581.0 366,586.3 367,587.5 373.5,589.7 378,587.2 379.5,586.4 385.5,571.7 390,585.3 391,588.3 397.5,585.5 402,588.4 403.5,589.4 409.5,592.5 414,591.3 415,591.0 421.5,592.3 426,588.7 427.5,587.5 434,587.2 438,587.0 439,586.9 445.5,587.4 450,586.5 451,586.3 457.5,582.4 462,589.3 463,590.8 469.5,587.5 474,588.4 475,588.6 481,587.8 486,587.8 487,587.8 493,587.8 498,587.8 501,587.8 505,587.3 510,585.7 511.5,585.3 517.5,587.1 522,588.2 523.5,588.4 529,584.6 534,587.9 535.5,588.7 541,587.3 546,586.9 547.5,586.9 553.5,587.5 558,587.7 565.5,588.1 570,591.6 571,592.5 577.5,600.4 582,600.7 589.5,600.9 594,600.5 595.5,600.4 604.5,600.4 606,600.4 608,600.4 609.5,600.5 613.5,600.7 617.5,600.4 618,600.4 627.5,600.4 630,600.4 640,600.8 642,600.8 646,600.8 652,600.8 654,600.8 658,600.8 664,600.8 666,600.8 670,600.8 676,600.8 678,600.8 682,600.8 688,600.8 690,600.8 694,600.8 700,600.2 702,600.4 706,600.8 712,600.8 714,600.8 718,600.8 724,600.8 726,600.8 730,600.8 736,601.4 738,601.4 742,601.4 748,600.8 750,600.8 754,600.8 760,600.8 762,600.8 766,600.8 772,600.8 774,600.8 778,600.8 784,600.8 786,600.8 790,600.8 796,600.8 798,600.8 802,600.8 808,600.2 810,600.6 814,601.4 820,600.8 822,600.8 826,600.8 832,601.4 834,601.2 838,600.8 844,600.8 846,601.0 850,601.4 856,600.8 858,600.8 862,600.8 868,601.4 870,601.2 874,600.8 880,601.4 882,601.4 886,601.4 892,600.2 894,600.4 898,600.8 904,601.4 906,601.2 910,600.8 912,600.3 914,599.7 918,599.8 930,600.3 931,600.3 937.5,610.5 942,601.5 943.5,599.1 949,606.4 954,592.5 955,589.6 961,598.6 966,600.6 967.5,601.3 973,613.7 978,598.0 979,595.4 985,593.8 990,599.1 991.5,600.5 1002,602.4 1003,602.6 1009,600.0 1014,610.1 1015,612.1 1021,602.0 1026,600.6 1027,600.3 1033,599.1 1038,597.4 1039,597.1 1045,597.8 1050,602.9 1051.5,604.5 1057,599.3 1062,603.5 1063.5,604.7 1069,601.4 1074,603.6 1075.5,604.2 1081,601.5 1086,601.5 1086.5,601.5 1093,596.8 1098,599.1 1099,599.6 1105.5,593.8 1110,608.8 1111,612.1 1114,604.3 1117.5,596.4 1122,602.0 1123,603.2 1129.5,593.4 1134,606.6 1135,609.5 1141.5,601.6 1146,598.0 1147,597.3 1153,604.0 1158,599.4 1159.5,597.9 1165.5,603.0 1170,600.1 1171.5,599.2 1177,602.1 1182,594.9 1183.5,593.5 1189,609.9 1194,601.2 1194.5,600.3 1201,599.0 1206,598.7 1207,598.7 1213.5,604.7 1218,601.7 1219,601.0 1225.5,600.8 1230,599.2 1231,598.9 1236.5,598.2 1242,602.8 1243.5,604.1 1249,600.9 1254,600.5 1260.5,600.2 1266,600.6 1273,601.1 1278,601.0 1279,601.0 1284.5,601.0 1290,599.6 1290.5,599.5 1297,601.6 1302,600.2 1303,599.9 1309,600.7 1314,600.0 1320,600.8 1326,601.2 1332,600.8 1338,600.3 1344,600.3 1350,601.2 1356,600.8 1362,600.8 1368,600.3 1374,600.8 1380,600.3 1386,600.8 1392,600.8 1398,600.8 1404,600.8 1410,601.2 1416,600.8 1422,600.8 1428,600.8 1434,600.3 1440,601.2 1446,600.8 1452,600.8 1455,600.8 1458,600.8 1460,600.8 1470,600.8 1477,600.8 1482,600.8 1490.5,600.8 1494,600.8 1501,600.4 1506,601.3 1507,601.6 1518,601.7 1519.5,601.7 1528,601.7 1530,601.7 1531.5,601.7 1542,601.5 1545,601.4 1554,601.6 1562.5,601.7 1566,601.7 1578,601.6 1579.5,601.6 1590,601.5 1596.5,601.4 1602,601.5 1610,601.7 1613.5,601.7 1614,601.7 1626,601.6 1630.5,601.6 1638,601.6 1647.5,601.6 1650,601.6 1662,601.6 1663,601.7 1669,607.0 1674,608.5 1675,608.7 1681,591.1 1686,598.6 1687.5,601.2 1693.5,604.7 1698,601.0 1699.5,599.8 1705.5,602.6 1710,605.7 1711.5,606.5 1717.5,596.8 1722,600.4 1723.5,601.5 1732.5,601.4 1734,601.4 1746,601.3 1750,601.2 1758,601.1 1760,601.1L1760,642Z" fill="#25a47a"/><path d="M234,591.6 241,587.4 246,585.2 247,584.8 253.5,573.7 258,597.5 259,602.7 265.5,590.7 270,584.6 271,583.3 277.5,592.3 282,587.9 283,586.8 289,571.5 294,599.5 295,605.4 301,574.1 306,598.1 307,603.2 313,588.4 318,583.1 319,582.1 325,587.7 330,581.1 331.5,579.8 337,595.7 342,588.3 343.5,586.6 349.5,591.6 354,589.5 355.5,588.8 361,581.0 366,586.3 367,587.5 373.5,589.7 378,587.2 379.5,586.4 385.5,571.7 390,585.3 391,588.3 397.5,585.5 402,588.4 403.5,589.4 409.5,592.5 414,591.3 415,591.0 421.5,592.3 426,588.7 427.5,587.5 434,587.2 438,587.0 439,586.9 445.5,587.4 450,586.5 451,586.3 457.5,582.4 462,589.3 463,590.8 469.5,587.5 474,588.4 475,588.6 481,587.8 486,587.8 487,587.8 493,587.8 498,587.8 501,587.8 505,587.3 510,585.7 511.5,585.3 517.5,587.1 522,588.2 523.5,588.4 529,584.6 534,587.9 535.5,588.7 541,587.3 546,586.9 547.5,586.9 553.5,587.5 558,587.7 565.5,588.1 570,591.6 571,592.5 577.5,600.4 582,600.7 589.5,600.9 594,600.5 595.5,600.4 604.5,600.4 606,600.4 608,600.4 609.5,600.5 613.5,600.7 617.5,600.4 618,600.4 627.5,600.4 630,600.4 640,600.8 642,600.8 646,600.8 652,600.8 654,600.8 658,600.8 664,600.8 666,600.8 670,600.8 676,600.8 678,600.8 682,600.8 688,600.8 690,600.8 694,600.8 700,600.2 702,600.4 706,600.8 712,600.8 714,600.8 718,600.8 724,600.8 726,600.8 730,600.8 736,601.4 738,601.4 742,601.4 748,600.8 750,600.8 754,600.8 760,600.8 762,600.8 766,600.8 772,600.8 774,600.8 778,600.8 784,600.8 786,600.8 790,600.8 796,600.8 798,600.8 802,600.8 808,600.2 810,600.6 814,601.4 820,600.8 822,600.8 826,600.8 832,601.4 834,601.2 838,600.8 844,600.8 846,601.0 850,601.4 856,600.8 858,600.8 862,600.8 868,601.4 870,601.2 874,600.8 880,601.4 882,601.4 886,601.4 892,600.2 894,600.4 898,600.8 904,601.4 906,601.2 910,600.8 912,600.3 914,599.7 918,599.8 930,600.3 931,600.3 937.5,610.5 942,601.5 943.5,599.1 949,606.4 954,592.5 955,589.6 961,598.6 966,600.6 967.5,601.3 973,613.7 978,598.0 979,595.4 985,593.8 990,599.1 991.5,600.5 1002,602.4 1003,602.6 1009,600.0 1014,610.1 1015,612.1 1021,602.0 1026,600.6 1027,600.3 1033,599.1 1038,597.4 1039,597.1 1045,597.8 1050,602.9 1051.5,604.5 1057,599.3 1062,603.5 1063.5,604.7 1069,601.4 1074,603.6 1075.5,604.2 1081,601.5 1086,601.5 1086.5,601.5 1093,596.8 1098,599.1 1099,599.6 1105.5,593.8 1110,608.8 1111,612.1 1114,604.3 1117.5,596.4 1122,602.0 1123,603.2 1129.5,593.4 1134,606.6 1135,609.5 1141.5,601.6 1146,598.0 1147,597.3 1153,604.0 1158,599.4 1159.5,597.9 1165.5,603.0 1170,600.1 1171.5,599.2 1177,602.1 1182,594.9 1183.5,593.5 1189,609.9 1194,601.2 1194.5,600.3 1201,599.0 1206,598.7 1207,598.7 1213.5,604.7 1218,601.7 1219,601.0 1225.5,600.8 1230,599.2 1231,598.9 1236.5,598.2 1242,602.8 1243.5,604.1 1249,600.9 1254,600.5 1260.5,600.2 1266,600.6 1273,601.1 1278,601.0 1279,601.0 1284.5,601.0 1290,599.6 1290.5,599.5 1297,601.6 1302,600.2 1303,599.9 1309,600.7 1314,600.0 1320,600.8 1326,601.2 1332,600.8 1338,600.3 1344,600.3 1350,601.2 1356,600.8 1362,600.8 1368,600.3 1374,600.8 1380,600.3 1386,600.8 1392,600.8 1398,600.8 1404,600.8 1410,601.2 1416,600.8 1422,600.8 1428,600.8 1434,600.3 1440,601.2 1446,600.8 1452,600.8 1455,600.8 1458,600.8 1460,600.8 1470,600.8 1477,600.8 1482,600.8 1490.5,600.8 1494,600.8 1501,600.4 1506,601.3 1507,601.6 1518,601.7 1519.5,601.7 1528,601.7 1530,601.7 1531.5,601.7 1542,601.5 1545,601.4 1554,601.6 1562.5,601.7 1566,601.7 1578,601.6 1579.5,601.6 1590,601.5 1596.5,601.4 1602,601.5 1610,601.7 1613.5,601.7 1614,601.7 1626,601.6 1630.5,601.6 1638,601.6 1647.5,601.6 1650,601.6 1662,601.6 1663,601.7 1669,607.0 1674,608.5 1675,608.7 1681,591.1 1686,598.6 1687.5,601.2 1693.5,604.7 1698,601.0 1699.5,599.8 1705.5,602.6 1710,605.7 1711.5,606.5 1717.5,596.8 1722,600.4 1723.5,601.5 1732.5,601.4 1734,601.4 1746,601.3 1750,601.2 1758,601.1 1760,601.1" fill="none" stroke="#30c090" stroke-width="1.2" stroke-linejoin="round"/><path d="M234,642L234,594.2 241,590.3 246,588.6 247,588.2 253.5,577.4 258,600.9 259,606.2 265.5,593.8 270,587.9 271,586.7 277.5,595.1 282,591.1 283,590.1 289,575.3 294,601.9 295,607.6 301,577.7 306,601.1 307,606.1 313,591.7 318,586.5 319,585.5 325,590.7 330,584.4 331.5,583.2 337,598.7 342,591.4 343.5,589.6 349.5,594.1 354,592.2 355.5,591.6 361,584.4 366,589.2 367,590.2 373.5,592.6 378,590.0 379.5,589.2 385.5,575.0 390,588.2 391,591.1 397.5,588.4 402,591.3 403.5,592.2 409.5,595.5 414,594.0 415,593.7 421.5,595.1 426,591.6 427.5,590.4 434,590.2 438,590.1 439,590.0 445.5,590.4 450,589.5 451,589.3 457.5,585.7 462,592.2 463,593.6 469.5,590.4 474,591.2 475,591.3 481,590.8 486,590.8 487,590.8 493,590.8 498,590.8 501,590.8 505,590.4 510,589.0 511.5,588.6 517.5,590.0 522,590.9 523.5,591.1 529,587.8 534,590.6 535.5,591.3 541,590.5 546,589.8 547.5,589.7 553.5,590.4 558,590.7 565.5,591.2 570,594.5 571,595.3 577.5,602.8 582,603.2 589.5,603.4 594,602.9 595.5,602.8 604.5,602.7 606,602.7 608,602.7 609.5,602.8 613.5,603.0 617.5,602.7 618,602.7 627.5,602.7 630,602.8 640,603.2 642,603.2 646,603.2 652,603.2 654,603.2 658,603.2 664,603.2 666,603.2 670,603.2 676,603.2 678,603.2 682,603.2 688,603.2 690,603.2 694,603.2 700,602.5 702,602.8 706,603.2 712,603.2 714,603.2 718,603.2 724,603.2 726,603.2 730,603.2 736,604.0 738,604.0 742,604.0 748,603.2 750,603.2 754,603.2 760,603.2 762,603.2 766,603.2 772,603.2 774,603.2 778,603.2 784,603.2 786,603.2 790,603.2 796,603.2 798,603.2 802,603.2 808,602.5 810,603.0 814,604.0 820,603.2 822,603.2 826,603.2 832,604.0 834,603.7 838,603.2 844,603.2 846,603.5 850,604.0 856,603.2 858,603.2 862,603.2 868,604.0 870,603.7 874,603.2 880,604.0 882,604.0 886,604.0 892,602.5 894,602.8 898,603.2 904,604.0 906,603.7 910,603.2 912,602.6 914,601.9 918,602.1 930,602.7 931,602.8 937.5,613.2 942,604.2 943.5,601.7 949,608.8 954,595.4 955,592.5 961,601.0 966,603.1 967.5,603.9 973,615.8 978,600.5 979,598.0 985,596.6 990,601.7 991.5,603.1 1002,604.7 1003,604.8 1009,602.5 1014,612.0 1015,613.9 1021,604.3 1026,603.2 1027,603.0 1033,601.7 1038,600.0 1039,599.7 1045,600.3 1050,605.3 1051.5,606.8 1057,601.7 1062,606.0 1063.5,607.2 1069,603.9 1074,605.8 1075.5,606.3 1081,604.1 1086,604.1 1086.5,604.1 1093,599.7 1098,601.7 1099,602.1 1105.5,596.4 1110,610.6 1111,613.8 1114,606.3 1117.5,599.5 1122,604.5 1123,605.6 1129.5,596.0 1134,609.0 1135,611.9 1141.5,603.7 1146,600.6 1147,600.0 1153,606.1 1158,602.1 1159.5,600.8 1165.5,605.0 1170,602.5 1171.5,601.6 1177,604.3 1182,597.4 1183.5,596.1 1189,611.7 1194,603.7 1194.5,602.9 1201,601.5 1206,601.2 1207,601.1 1213.5,606.6 1218,604.0 1219,603.4 1225.5,603.2 1230,601.8 1231,601.4 1236.5,600.8 1242,604.9 1243.5,606.0 1249,603.4 1254,602.9 1260.5,602.5 1266,603.0 1273,603.7 1278,603.5 1279,603.5 1284.5,603.4 1290,602.2 1290.5,602.0 1297,603.8 1302,602.5 1303,602.3 1309,603.0 1314,602.4 1320,603.2 1326,603.8 1332,603.2 1338,602.7 1344,602.7 1350,603.8 1356,603.2 1362,603.2 1368,602.7 1374,603.2 1380,602.7 1386,603.2 1392,603.2 1398,603.2 1404,603.2 1410,603.8 1416,603.2 1422,603.2 1428,603.2 1434,602.7 1440,603.8 1446,603.2 1452,603.2 1455,603.3 1458,603.3 1460,603.3 1470,603.3 1477,603.3 1482,603.3 1490.5,603.3 1494,603.3 1501,603.1 1506,604.8 1507,605.2 1518,605.3 1519.5,605.3 1528,605.4 1530,605.3 1531.5,605.3 1542,605.0 1545,604.9 1554,605.2 1562.5,605.4 1566,605.3 1578,605.2 1579.5,605.1 1590,605.0 1596.5,604.9 1602,605.1 1610,605.3 1613.5,605.4 1614,605.4 1626,605.2 1630.5,605.2 1638,605.2 1647.5,605.2 1650,605.2 1662,605.2 1663,605.3 1669,610.2 1674,611.7 1675,612.1 1681,595.6 1686,602.5 1687.5,604.9 1693.5,608.4 1698,604.6 1699.5,603.4 1705.5,606.1 1710,609.0 1711.5,609.8 1717.5,600.8 1722,604.1 1723.5,605.1 1732.5,605.0 1734,604.9 1746,604.8 1750,604.7 1758,604.6 1760,604.6L1760,642Z" fill="#cf7330"/><path d="M234,594.2 241,590.3 246,588.6 247,588.2 253.5,577.4 258,600.9 259,606.2 265.5,593.8 270,587.9 271,586.7 277.5,595.1 282,591.1 283,590.1 289,575.3 294,601.9 295,607.6 301,577.7 306,601.1 307,606.1 313,591.7 318,586.5 319,585.5 325,590.7 330,584.4 331.5,583.2 337,598.7 342,591.4 343.5,589.6 349.5,594.1 354,592.2 355.5,591.6 361,584.4 366,589.2 367,590.2 373.5,592.6 378,590.0 379.5,589.2 385.5,575.0 390,588.2 391,591.1 397.5,588.4 402,591.3 403.5,592.2 409.5,595.5 414,594.0 415,593.7 421.5,595.1 426,591.6 427.5,590.4 434,590.2 438,590.1 439,590.0 445.5,590.4 450,589.5 451,589.3 457.5,585.7 462,592.2 463,593.6 469.5,590.4 474,591.2 475,591.3 481,590.8 486,590.8 487,590.8 493,590.8 498,590.8 501,590.8 505,590.4 510,589.0 511.5,588.6 517.5,590.0 522,590.9 523.5,591.1 529,587.8 534,590.6 535.5,591.3 541,590.5 546,589.8 547.5,589.7 553.5,590.4 558,590.7 565.5,591.2 570,594.5 571,595.3 577.5,602.8 582,603.2 589.5,603.4 594,602.9 595.5,602.8 604.5,602.7 606,602.7 608,602.7 609.5,602.8 613.5,603.0 617.5,602.7 618,602.7 627.5,602.7 630,602.8 640,603.2 642,603.2 646,603.2 652,603.2 654,603.2 658,603.2 664,603.2 666,603.2 670,603.2 676,603.2 678,603.2 682,603.2 688,603.2 690,603.2 694,603.2 700,602.5 702,602.8 706,603.2 712,603.2 714,603.2 718,603.2 724,603.2 726,603.2 730,603.2 736,604.0 738,604.0 742,604.0 748,603.2 750,603.2 754,603.2 760,603.2 762,603.2 766,603.2 772,603.2 774,603.2 778,603.2 784,603.2 786,603.2 790,603.2 796,603.2 798,603.2 802,603.2 808,602.5 810,603.0 814,604.0 820,603.2 822,603.2 826,603.2 832,604.0 834,603.7 838,603.2 844,603.2 846,603.5 850,604.0 856,603.2 858,603.2 862,603.2 868,604.0 870,603.7 874,603.2 880,604.0 882,604.0 886,604.0 892,602.5 894,602.8 898,603.2 904,604.0 906,603.7 910,603.2 912,602.6 914,601.9 918,602.1 930,602.7 931,602.8 937.5,613.2 942,604.2 943.5,601.7 949,608.8 954,595.4 955,592.5 961,601.0 966,603.1 967.5,603.9 973,615.8 978,600.5 979,598.0 985,596.6 990,601.7 991.5,603.1 1002,604.7 1003,604.8 1009,602.5 1014,612.0 1015,613.9 1021,604.3 1026,603.2 1027,603.0 1033,601.7 1038,600.0 1039,599.7 1045,600.3 1050,605.3 1051.5,606.8 1057,601.7 1062,606.0 1063.5,607.2 1069,603.9 1074,605.8 1075.5,606.3 1081,604.1 1086,604.1 1086.5,604.1 1093,599.7 1098,601.7 1099,602.1 1105.5,596.4 1110,610.6 1111,613.8 1114,606.3 1117.5,599.5 1122,604.5 1123,605.6 1129.5,596.0 1134,609.0 1135,611.9 1141.5,603.7 1146,600.6 1147,600.0 1153,606.1 1158,602.1 1159.5,600.8 1165.5,605.0 1170,602.5 1171.5,601.6 1177,604.3 1182,597.4 1183.5,596.1 1189,611.7 1194,603.7 1194.5,602.9 1201,601.5 1206,601.2 1207,601.1 1213.5,606.6 1218,604.0 1219,603.4 1225.5,603.2 1230,601.8 1231,601.4 1236.5,600.8 1242,604.9 1243.5,606.0 1249,603.4 1254,602.9 1260.5,602.5 1266,603.0 1273,603.7 1278,603.5 1279,603.5 1284.5,603.4 1290,602.2 1290.5,602.0 1297,603.8 1302,602.5 1303,602.3 1309,603.0 1314,602.4 1320,603.2 1326,603.8 1332,603.2 1338,602.7 1344,602.7 1350,603.8 1356,603.2 1362,603.2 1368,602.7 1374,603.2 1380,602.7 1386,603.2 1392,603.2 1398,603.2 1404,603.2 1410,603.8 1416,603.2 1422,603.2 1428,603.2 1434,602.7 1440,603.8 1446,603.2 1452,603.2 1455,603.3 1458,603.3 1460,603.3 1470,603.3 1477,603.3 1482,603.3 1490.5,603.3 1494,603.3 1501,603.1 1506,604.8 1507,605.2 1518,605.3 1519.5,605.3 1528,605.4 1530,605.3 1531.5,605.3 1542,605.0 1545,604.9 1554,605.2 1562.5,605.4 1566,605.3 1578,605.2 1579.5,605.1 1590,605.0 1596.5,604.9 1602,605.1 1610,605.3 1613.5,605.4 1614,605.4 1626,605.2 1630.5,605.2 1638,605.2 1647.5,605.2 1650,605.2 1662,605.2 1663,605.3 1669,610.2 1674,611.7 1675,612.1 1681,595.6 1686,602.5 1687.5,604.9 1693.5,608.4 1698,604.6 1699.5,603.4 1705.5,606.1 1710,609.0 1711.5,609.8 1717.5,600.8 1722,604.1 1723.5,605.1 1732.5,605.0 1734,604.9 1746,604.8 1750,604.7 1758,604.6 1760,604.6" fill="none" stroke="#e8842f" stroke-width="1.0" stroke-linejoin="round"/><path d="M234,642L234,600.0 241,597.1 246,596.2 247,596.0 253.5,586.0 258,608.9 259,614.0 265.5,600.9 270,595.5 271,594.3 277.5,601.5 282,598.4 283,597.6 289,584.0 294,607.4 295,612.4 301,586.0 306,608.0 307,612.7 313,599.1 318,594.2 319,593.3 325,597.7 330,591.9 331.5,590.8 337,605.6 342,598.4 343.5,596.7 349.5,600.0 354,598.3 355.5,597.7 361,592.2 366,595.7 367,596.4 373.5,599.4 378,596.5 379.5,595.6 385.5,582.6 390,594.8 391,597.5 397.5,595.0 402,597.8 403.5,598.8 409.5,602.2 414,600.4 415,600.0 421.5,601.5 426,598.2 427.5,597.2 434,597.1 438,597.1 439,597.1 445.5,597.1 450,596.2 451,596.0 457.5,593.4 462,598.8 463,600.0 469.5,597.2 474,597.4 475,597.4 481,597.7 486,597.7 487,597.7 493,597.7 498,597.7 501,597.7 505,597.7 510,596.4 511.5,596.0 517.5,596.6 522,597.0 523.5,597.1 529,595.2 534,596.7 535.5,597.2 541,597.7 546,596.3 547.5,596.0 553.5,597.1 558,597.6 565.5,598.3 570,601.0 571,601.6 577.5,607.4 582,607.6 589.5,607.9 594,607.3 595.5,607.1 604.5,607.0 606,607.0 608,607.0 609.5,607.0 613.5,607.0 617.5,607.0 618,607.0 627.5,607.0 630,607.2 640,607.7 642,607.7 646,607.7 652,607.7 654,607.7 658,607.7 664,607.7 666,607.7 670,607.7 676,607.7 678,607.7 682,607.7 688,607.7 690,607.7 694,607.7 700,606.7 702,607.0 706,607.7 712,607.7 714,607.7 718,607.7 724,607.7 726,607.7 730,607.7 736,608.7 738,608.7 742,608.7 748,607.7 750,607.7 754,607.7 760,607.7 762,607.7 766,607.7 772,607.7 774,607.7 778,607.7 784,607.7 786,607.7 790,607.7 796,607.7 798,607.7 802,607.7 808,606.7 810,607.4 814,608.7 820,607.7 822,607.7 826,607.7 832,608.7 834,608.4 838,607.7 844,607.7 846,608.0 850,608.7 856,607.7 858,607.7 862,607.7 868,608.7 870,608.4 874,607.7 880,608.7 882,608.7 886,608.7 892,606.7 894,607.0 898,607.7 904,608.7 906,608.4 910,607.7 912,606.9 914,606.0 918,606.3 930,607.1 931,607.2 937.5,618.1 942,609.0 943.5,606.6 949,613.1 954,600.6 955,597.9 961,605.2 966,607.7 967.5,608.5 973,619.5 978,604.9 979,602.6 985,601.5 990,606.5 991.5,607.7 1002,608.7 1003,608.8 1009,606.8 1014,615.4 1015,617.2 1021,608.3 1026,607.8 1027,607.7 1033,606.5 1038,604.7 1039,604.3 1045,604.9 1050,609.6 1051.5,611.1 1057,606.2 1062,610.4 1063.5,611.7 1069,608.4 1074,609.6 1075.5,610.0 1081,608.9 1086,608.9 1086.5,608.9 1093,604.9 1098,606.3 1099,606.5 1105.5,601.0 1110,614.0 1111,616.9 1114,610.0 1117.5,605.0 1122,609.0 1123,609.9 1129.5,600.8 1134,613.4 1135,616.2 1141.5,607.6 1146,605.4 1147,604.9 1153,609.8 1158,606.9 1159.5,606.0 1165.5,608.8 1170,606.7 1171.5,606.1 1177,608.3 1182,602.0 1183.5,600.8 1189,615.1 1194,608.1 1194.5,607.4 1201,606.0 1206,605.6 1207,605.5 1213.5,610.0 1218,608.2 1219,607.8 1225.5,607.7 1230,606.3 1231,606.0 1236.5,605.5 1242,608.5 1243.5,609.4 1249,607.8 1254,607.2 1260.5,606.6 1266,607.3 1273,608.3 1278,608.0 1279,608.0 1284.5,607.7 1290,606.7 1290.5,606.6 1297,607.7 1302,606.8 1303,606.6 1309,607.1 1314,606.6 1320,607.7 1326,608.5 1332,607.7 1338,606.9 1344,606.9 1350,608.5 1356,607.7 1362,607.7 1368,606.9 1374,607.7 1380,606.9 1386,607.7 1392,607.7 1398,607.7 1404,607.7 1410,608.5 1416,607.7 1422,607.7 1428,607.7 1434,606.9 1440,608.5 1446,607.7 1452,607.7 1455,607.7 1458,607.7 1460,607.7 1470,607.7 1477,607.7 1482,607.7 1490.5,607.7 1494,607.7 1501,607.8 1506,610.6 1507,611.1 1518,611.3 1519.5,611.3 1528,611.5 1530,611.4 1531.5,611.3 1542,610.9 1545,610.8 1554,611.1 1562.5,611.5 1566,611.4 1578,611.2 1579.5,611.1 1590,610.9 1596.5,610.8 1602,611.0 1610,611.3 1613.5,611.5 1614,611.5 1626,611.2 1630.5,611.1 1638,611.1 1647.5,611.1 1650,611.1 1662,611.1 1663,611.3 1669,615.5 1674,617.2 1675,617.6 1681,603.2 1686,609.0 1687.5,611.1 1693.5,614.5 1698,610.7 1699.5,609.4 1705.5,612.0 1710,614.6 1711.5,615.3 1717.5,607.5 1722,610.3 1723.5,611.1 1732.5,610.9 1734,610.9 1746,610.6 1750,610.5 1758,610.3 1760,610.3L1760,642Z" fill="#c4143f"/><path d="M234,600.0 241,597.1 246,596.2 247,596.0 253.5,586.0 258,608.9 259,614.0 265.5,600.9 270,595.5 271,594.3 277.5,601.5 282,598.4 283,597.6 289,584.0 294,607.4 295,612.4 301,586.0 306,608.0 307,612.7 313,599.1 318,594.2 319,593.3 325,597.7 330,591.9 331.5,590.8 337,605.6 342,598.4 343.5,596.7 349.5,600.0 354,598.3 355.5,597.7 361,592.2 366,595.7 367,596.4 373.5,599.4 378,596.5 379.5,595.6 385.5,582.6 390,594.8 391,597.5 397.5,595.0 402,597.8 403.5,598.8 409.5,602.2 414,600.4 415,600.0 421.5,601.5 426,598.2 427.5,597.2 434,597.1 438,597.1 439,597.1 445.5,597.1 450,596.2 451,596.0 457.5,593.4 462,598.8 463,600.0 469.5,597.2 474,597.4 475,597.4 481,597.7 486,597.7 487,597.7 493,597.7 498,597.7 501,597.7 505,597.7 510,596.4 511.5,596.0 517.5,596.6 522,597.0 523.5,597.1 529,595.2 534,596.7 535.5,597.2 541,597.7 546,596.3 547.5,596.0 553.5,597.1 558,597.6 565.5,598.3 570,601.0 571,601.6 577.5,607.4 582,607.6 589.5,607.9 594,607.3 595.5,607.1 604.5,607.0 606,607.0 608,607.0 609.5,607.0 613.5,607.0 617.5,607.0 618,607.0 627.5,607.0 630,607.2 640,607.7 642,607.7 646,607.7 652,607.7 654,607.7 658,607.7 664,607.7 666,607.7 670,607.7 676,607.7 678,607.7 682,607.7 688,607.7 690,607.7 694,607.7 700,606.7 702,607.0 706,607.7 712,607.7 714,607.7 718,607.7 724,607.7 726,607.7 730,607.7 736,608.7 738,608.7 742,608.7 748,607.7 750,607.7 754,607.7 760,607.7 762,607.7 766,607.7 772,607.7 774,607.7 778,607.7 784,607.7 786,607.7 790,607.7 796,607.7 798,607.7 802,607.7 808,606.7 810,607.4 814,608.7 820,607.7 822,607.7 826,607.7 832,608.7 834,608.4 838,607.7 844,607.7 846,608.0 850,608.7 856,607.7 858,607.7 862,607.7 868,608.7 870,608.4 874,607.7 880,608.7 882,608.7 886,608.7 892,606.7 894,607.0 898,607.7 904,608.7 906,608.4 910,607.7 912,606.9 914,606.0 918,606.3 930,607.1 931,607.2 937.5,618.1 942,609.0 943.5,606.6 949,613.1 954,600.6 955,597.9 961,605.2 966,607.7 967.5,608.5 973,619.5 978,604.9 979,602.6 985,601.5 990,606.5 991.5,607.7 1002,608.7 1003,608.8 1009,606.8 1014,615.4 1015,617.2 1021,608.3 1026,607.8 1027,607.7 1033,606.5 1038,604.7 1039,604.3 1045,604.9 1050,609.6 1051.5,611.1 1057,606.2 1062,610.4 1063.5,611.7 1069,608.4 1074,609.6 1075.5,610.0 1081,608.9 1086,608.9 1086.5,608.9 1093,604.9 1098,606.3 1099,606.5 1105.5,601.0 1110,614.0 1111,616.9 1114,610.0 1117.5,605.0 1122,609.0 1123,609.9 1129.5,600.8 1134,613.4 1135,616.2 1141.5,607.6 1146,605.4 1147,604.9 1153,609.8 1158,606.9 1159.5,606.0 1165.5,608.8 1170,606.7 1171.5,606.1 1177,608.3 1182,602.0 1183.5,600.8 1189,615.1 1194,608.1 1194.5,607.4 1201,606.0 1206,605.6 1207,605.5 1213.5,610.0 1218,608.2 1219,607.8 1225.5,607.7 1230,606.3 1231,606.0 1236.5,605.5 1242,608.5 1243.5,609.4 1249,607.8 1254,607.2 1260.5,606.6 1266,607.3 1273,608.3 1278,608.0 1279,608.0 1284.5,607.7 1290,606.7 1290.5,606.6 1297,607.7 1302,606.8 1303,606.6 1309,607.1 1314,606.6 1320,607.7 1326,608.5 1332,607.7 1338,606.9 1344,606.9 1350,608.5 1356,607.7 1362,607.7 1368,606.9 1374,607.7 1380,606.9 1386,607.7 1392,607.7 1398,607.7 1404,607.7 1410,608.5 1416,607.7 1422,607.7 1428,607.7 1434,606.9 1440,608.5 1446,607.7 1452,607.7 1455,607.7 1458,607.7 1460,607.7 1470,607.7 1477,607.7 1482,607.7 1490.5,607.7 1494,607.7 1501,607.8 1506,610.6 1507,611.1 1518,611.3 1519.5,611.3 1528,611.5 1530,611.4 1531.5,611.3 1542,610.9 1545,610.8 1554,611.1 1562.5,611.5 1566,611.4 1578,611.2 1579.5,611.1 1590,610.9 1596.5,610.8 1602,611.0 1610,611.3 1613.5,611.5 1614,611.5 1626,611.2 1630.5,611.1 1638,611.1 1647.5,611.1 1650,611.1 1662,611.1 1663,611.3 1669,615.5 1674,617.2 1675,617.6 1681,603.2 1686,609.0 1687.5,611.1 1693.5,614.5 1698,610.7 1699.5,609.4 1705.5,612.0 1710,614.6 1711.5,615.3 1717.5,607.5 1722,610.3 1723.5,611.1 1732.5,610.9 1734,610.9 1746,610.6 1750,610.5 1758,610.3 1760,610.3" fill="none" stroke="#e0184a" stroke-width="1.0" stroke-linejoin="round"/><path d="M234,642L234,611.1 241,609.1 246,608.9 247,608.8 253.5,600.2 258,616.0 259,619.5 265.5,611.0 270,607.8 271,607.1 277.5,612.1 282,609.6 283,609.0 289,598.6 294,615.7 295,619.3 301,600.8 306,616.7 307,620.1 313,609.9 318,606.9 319,606.3 325,609.1 330,604.8 331.5,604.0 337,613.3 342,609.1 343.5,608.0 349.5,610.2 354,609.2 355.5,608.8 361,605.2 366,607.6 367,608.1 373.5,610.8 378,608.1 379.5,607.2 385.5,596.8 390,606.0 391,608.1 397.5,606.3 402,608.6 403.5,609.3 409.5,612.2 414,610.6 415,610.2 421.5,611.5 426,609.5 427.5,608.8 434,608.8 438,609.0 439,609.1 445.5,608.5 450,607.4 451,607.1 457.5,605.3 462,609.1 463,609.9 469.5,608.5 474,608.3 475,608.3 481,609.1 486,609.8 487,609.9 493,609.6 498,609.6 501,609.6 505,609.7 510,608.1 511.5,607.7 517.5,607.1 522,608.0 523.5,608.2 529,606.2 534,608.0 535.5,608.6 541,609.4 546,607.6 547.5,607.2 553.5,609.3 558,609.5 565.5,610.0 570,611.8 571,612.1 577.5,615.7 582,615.8 589.5,616.1 594,614.8 595.5,614.4 604.5,614.6 606,614.5 608,614.4 609.5,614.3 613.5,614.5 617.5,614.6 618,614.6 627.5,614.3 630,614.4 640,614.7 642,614.5 646,614.1 652,614.7 654,614.7 658,614.7 664,614.7 666,614.5 670,614.1 676,615.2 678,615.0 682,614.7 688,614.1 690,614.5 694,615.2 700,614.1 702,614.3 706,614.7 712,614.7 714,614.7 718,614.7 724,614.1 726,614.3 730,614.7 736,615.2 738,615.2 742,615.2 748,615.2 750,615.0 754,614.7 760,614.7 762,614.7 766,614.7 772,614.7 774,614.7 778,614.7 784,614.7 786,614.9 790,615.2 796,615.2 798,614.9 802,614.1 808,614.1 810,614.5 814,615.2 820,614.1 822,614.5 826,615.2 832,615.2 834,615.0 838,614.7 844,614.7 846,614.6 850,614.6 856,614.7 858,614.7 862,614.7 868,615.2 870,615.0 874,614.7 880,615.2 882,615.2 886,615.2 892,614.1 894,614.3 898,614.7 904,614.6 906,614.6 910,614.7 912,614.0 914,613.4 918,613.7 930,614.7 931,614.8 937.5,622.4 942,616.6 943.5,615.1 949,619.8 954,610.6 955,608.7 961,613.2 966,614.7 967.5,615.3 973,623.6 978,613.3 979,611.6 985,610.2 990,613.7 991.5,614.6 1002,615.8 1003,615.9 1009,614.9 1014,621.2 1015,622.4 1021,616.5 1026,615.8 1027,615.6 1033,614.7 1038,613.1 1039,612.8 1045,613.1 1050,616.4 1051.5,617.4 1057,613.5 1062,616.9 1063.5,617.9 1069,615.4 1074,616.9 1075.5,617.3 1081,616.8 1086,616.8 1086.5,616.8 1093,613.1 1098,613.3 1099,613.4 1105.5,609.7 1110,619.9 1111,622.2 1114,617.4 1117.5,613.4 1122,616.4 1123,617.0 1129.5,609.7 1134,619.3 1135,621.4 1141.5,614.7 1146,613.1 1147,612.8 1153,617.2 1158,614.3 1159.5,613.4 1165.5,615.6 1170,614.4 1171.5,614.0 1177,615.4 1182,610.4 1183.5,609.4 1189,620.0 1194,615.2 1194.5,614.7 1201,613.4 1206,612.7 1207,612.6 1213.5,616.8 1218,615.6 1219,615.4 1225.5,616.1 1230,614.3 1231,613.9 1236.5,613.1 1242,616.2 1243.5,617.0 1249,615.4 1254,614.8 1260.5,614.0 1266,615.0 1273,616.5 1278,615.6 1279,615.5 1284.5,614.5 1290,614.5 1290.5,614.5 1297,614.8 1302,614.3 1303,614.2 1309,614.5 1314,614.2 1320,614.8 1326,615.2 1332,614.8 1338,614.4 1344,614.9 1350,615.2 1356,614.8 1362,614.8 1368,613.9 1374,615.3 1380,614.4 1386,614.8 1392,614.3 1398,614.8 1404,614.3 1410,615.2 1416,614.3 1422,614.3 1428,614.8 1434,614.4 1440,614.7 1446,614.8 1452,614.8 1455,614.9 1458,615.0 1460,615.1 1470,614.7 1477,615.1 1482,615.1 1490.5,615.1 1494,615.1 1501,615.4 1506,619.2 1507,619.7 1518,620.2 1519.5,620.3 1528,620.0 1530,619.9 1531.5,619.8 1542,619.8 1545,619.8 1554,620.3 1562.5,620.8 1566,620.6 1578,620.2 1579.5,620.2 1590,619.8 1596.5,619.6 1602,620.1 1610,621.0 1613.5,620.9 1614,620.9 1626,620.4 1630.5,620.2 1638,620.1 1647.5,620.0 1650,620.0 1662,620.2 1663,620.2 1669,623.0 1674,624.5 1675,624.8 1681,615.2 1686,618.7 1687.5,620.0 1693.5,622.7 1698,619.5 1699.5,618.5 1705.5,620.4 1710,623.0 1711.5,623.7 1717.5,617.6 1722,619.9 1723.5,620.6 1732.5,619.9 1734,619.8 1746,619.3 1750,619.2 1758,619.3 1760,619.3L1760,642Z" fill="#863a84"/><path d="M234,611.1 241,609.1 246,608.9 247,608.8 253.5,600.2 258,616.0 259,619.5 265.5,611.0 270,607.8 271,607.1 277.5,612.1 282,609.6 283,609.0 289,598.6 294,615.7 295,619.3 301,600.8 306,616.7 307,620.1 313,609.9 318,606.9 319,606.3 325,609.1 330,604.8 331.5,604.0 337,613.3 342,609.1 343.5,608.0 349.5,610.2 354,609.2 355.5,608.8 361,605.2 366,607.6 367,608.1 373.5,610.8 378,608.1 379.5,607.2 385.5,596.8 390,606.0 391,608.1 397.5,606.3 402,608.6 403.5,609.3 409.5,612.2 414,610.6 415,610.2 421.5,611.5 426,609.5 427.5,608.8 434,608.8 438,609.0 439,609.1 445.5,608.5 450,607.4 451,607.1 457.5,605.3 462,609.1 463,609.9 469.5,608.5 474,608.3 475,608.3 481,609.1 486,609.8 487,609.9 493,609.6 498,609.6 501,609.6 505,609.7 510,608.1 511.5,607.7 517.5,607.1 522,608.0 523.5,608.2 529,606.2 534,608.0 535.5,608.6 541,609.4 546,607.6 547.5,607.2 553.5,609.3 558,609.5 565.5,610.0 570,611.8 571,612.1 577.5,615.7 582,615.8 589.5,616.1 594,614.8 595.5,614.4 604.5,614.6 606,614.5 608,614.4 609.5,614.3 613.5,614.5 617.5,614.6 618,614.6 627.5,614.3 630,614.4 640,614.7 642,614.5 646,614.1 652,614.7 654,614.7 658,614.7 664,614.7 666,614.5 670,614.1 676,615.2 678,615.0 682,614.7 688,614.1 690,614.5 694,615.2 700,614.1 702,614.3 706,614.7 712,614.7 714,614.7 718,614.7 724,614.1 726,614.3 730,614.7 736,615.2 738,615.2 742,615.2 748,615.2 750,615.0 754,614.7 760,614.7 762,614.7 766,614.7 772,614.7 774,614.7 778,614.7 784,614.7 786,614.9 790,615.2 796,615.2 798,614.9 802,614.1 808,614.1 810,614.5 814,615.2 820,614.1 822,614.5 826,615.2 832,615.2 834,615.0 838,614.7 844,614.7 846,614.6 850,614.6 856,614.7 858,614.7 862,614.7 868,615.2 870,615.0 874,614.7 880,615.2 882,615.2 886,615.2 892,614.1 894,614.3 898,614.7 904,614.6 906,614.6 910,614.7 912,614.0 914,613.4 918,613.7 930,614.7 931,614.8 937.5,622.4 942,616.6 943.5,615.1 949,619.8 954,610.6 955,608.7 961,613.2 966,614.7 967.5,615.3 973,623.6 978,613.3 979,611.6 985,610.2 990,613.7 991.5,614.6 1002,615.8 1003,615.9 1009,614.9 1014,621.2 1015,622.4 1021,616.5 1026,615.8 1027,615.6 1033,614.7 1038,613.1 1039,612.8 1045,613.1 1050,616.4 1051.5,617.4 1057,613.5 1062,616.9 1063.5,617.9 1069,615.4 1074,616.9 1075.5,617.3 1081,616.8 1086,616.8 1086.5,616.8 1093,613.1 1098,613.3 1099,613.4 1105.5,609.7 1110,619.9 1111,622.2 1114,617.4 1117.5,613.4 1122,616.4 1123,617.0 1129.5,609.7 1134,619.3 1135,621.4 1141.5,614.7 1146,613.1 1147,612.8 1153,617.2 1158,614.3 1159.5,613.4 1165.5,615.6 1170,614.4 1171.5,614.0 1177,615.4 1182,610.4 1183.5,609.4 1189,620.0 1194,615.2 1194.5,614.7 1201,613.4 1206,612.7 1207,612.6 1213.5,616.8 1218,615.6 1219,615.4 1225.5,616.1 1230,614.3 1231,613.9 1236.5,613.1 1242,616.2 1243.5,617.0 1249,615.4 1254,614.8 1260.5,614.0 1266,615.0 1273,616.5 1278,615.6 1279,615.5 1284.5,614.5 1290,614.5 1290.5,614.5 1297,614.8 1302,614.3 1303,614.2 1309,614.5 1314,614.2 1320,614.8 1326,615.2 1332,614.8 1338,614.4 1344,614.9 1350,615.2 1356,614.8 1362,614.8 1368,613.9 1374,615.3 1380,614.4 1386,614.8 1392,614.3 1398,614.8 1404,614.3 1410,615.2 1416,614.3 1422,614.3 1428,614.8 1434,614.4 1440,614.7 1446,614.8 1452,614.8 1455,614.9 1458,615.0 1460,615.1 1470,614.7 1477,615.1 1482,615.1 1490.5,615.1 1494,615.1 1501,615.4 1506,619.2 1507,619.7 1518,620.2 1519.5,620.3 1528,620.0 1530,619.9 1531.5,619.8 1542,619.8 1545,619.8 1554,620.3 1562.5,620.8 1566,620.6 1578,620.2 1579.5,620.2 1590,619.8 1596.5,619.6 1602,620.1 1610,621.0 1613.5,620.9 1614,620.9 1626,620.4 1630.5,620.2 1638,620.1 1647.5,620.0 1650,620.0 1662,620.2 1663,620.2 1669,623.0 1674,624.5 1675,624.8 1681,615.2 1686,618.7 1687.5,620.0 1693.5,622.7 1698,619.5 1699.5,618.5 1705.5,620.4 1710,623.0 1711.5,623.7 1717.5,617.6 1722,619.9 1723.5,620.6 1732.5,619.9 1734,619.8 1746,619.3 1750,619.2 1758,619.3 1760,619.3" fill="none" stroke="#9a44a0" stroke-width="1.0" stroke-linejoin="round"/><path d="M234,642L234,622.2 241,621.1 246,621.5 247,621.6 253.5,614.5 258,623.1 259,625.0 265.5,621.0 270,620.1 271,619.9 277.5,622.7 282,620.9 283,620.4 289,613.3 294,623.9 295,626.2 301,615.7 306,625.4 307,627.5 313,620.6 318,619.6 319,619.4 325,620.5 330,617.8 331.5,617.2 337,621.0 342,619.7 343.5,619.4 349.5,620.5 354,620.1 355.5,619.9 361,618.2 366,619.6 367,619.9 373.5,622.2 378,619.7 379.5,618.9 385.5,611.0 390,617.3 391,618.7 397.5,617.7 402,619.3 403.5,619.9 409.5,622.1 414,620.8 415,620.5 421.5,621.6 426,620.8 427.5,620.5 434,620.5 438,620.9 439,621.0 445.5,619.9 450,618.5 451,618.2 457.5,617.1 462,619.4 463,619.9 469.5,619.9 474,619.3 475,619.1 481,620.4 486,621.9 487,622.2 493,621.4 498,621.5 501,621.5 505,621.6 510,619.9 511.5,619.3 517.5,617.7 522,618.9 523.5,619.3 529,617.1 534,619.3 535.5,619.9 541,621.0 546,618.8 547.5,618.3 553.5,621.4 558,621.5 565.5,621.6 570,622.5 571,622.7 577.5,624.5 582,624.7 589.5,625.0 594,622.9 595.5,622.2 604.5,622.7 606,622.6 608,622.3 609.5,622.2 613.5,622.5 617.5,622.7 618,622.7 627.5,622.2 630,622.2 640,622.2 642,621.8 646,621.0 652,622.2 654,622.2 658,622.2 664,622.2 666,621.8 670,621.0 676,623.4 678,623.0 682,622.2 688,621.0 690,621.8 694,623.4 700,622.2 702,622.2 706,622.2 712,622.2 714,622.2 718,622.2 724,621.0 726,621.4 730,622.2 736,622.2 738,622.2 742,622.2 748,623.4 750,623.0 754,622.2 760,622.2 762,622.2 766,622.2 772,622.2 774,622.2 778,622.2 784,622.2 786,622.6 790,623.4 796,623.4 798,622.6 802,621.0 808,622.2 810,622.2 814,622.2 820,621.0 822,621.8 826,623.4 832,622.2 834,622.2 838,622.2 844,622.2 846,621.8 850,621.0 856,622.2 858,622.2 862,622.2 868,622.2 870,622.2 874,622.2 880,622.2 882,622.2 886,622.2 892,622.2 894,622.2 898,622.2 904,621.0 906,621.4 910,622.2 912,621.8 914,621.4 918,621.8 930,623.0 931,623.1 937.5,626.9 942,624.8 943.5,624.3 949,626.9 954,621.5 955,620.4 961,621.9 966,622.4 967.5,622.6 973,628.1 978,622.3 979,621.3 985,619.7 990,621.5 991.5,622.0 1002,623.5 1003,623.6 1009,623.7 1014,627.4 1015,628.1 1021,625.3 1026,624.4 1027,624.2 1033,623.6 1038,622.2 1039,621.9 1045,621.9 1050,623.7 1051.5,624.2 1057,621.5 1062,624.0 1063.5,624.8 1069,623.1 1074,624.8 1075.5,625.3 1081,625.3 1086,625.3 1086.5,625.3 1093,621.9 1098,621.0 1099,620.8 1105.5,619.1 1110,626.3 1111,627.9 1114,625.3 1117.5,622.5 1122,624.3 1123,624.7 1129.5,619.3 1134,625.6 1135,627.0 1141.5,622.5 1146,621.6 1147,621.4 1153,625.2 1158,622.3 1159.5,621.4 1165.5,623.0 1170,622.6 1171.5,622.5 1177,623.1 1182,619.5 1183.5,618.7 1189,625.3 1194,622.8 1194.5,622.6 1201,621.4 1206,620.4 1207,620.3 1213.5,624.2 1218,623.7 1219,623.6 1225.5,625.3 1230,623.0 1231,622.5 1236.5,621.4 1242,624.4 1243.5,625.3 1249,623.7 1254,622.9 1260.5,621.9 1266,623.4 1273,625.3 1278,623.9 1279,623.6 1284.5,621.9 1290,622.9 1290.5,623.0 1297,622.5 1302,622.5 1303,622.5 1309,622.5 1314,622.5 1320,622.5 1326,622.5 1332,622.5 1338,622.5 1344,623.5 1350,622.5 1356,622.5 1362,622.5 1368,621.5 1374,623.5 1380,622.5 1386,622.5 1392,621.5 1398,622.5 1404,621.5 1410,622.5 1416,621.5 1422,621.5 1428,622.5 1434,622.5 1440,621.5 1446,622.5 1452,622.5 1455,622.7 1458,622.9 1460,623.1 1470,622.2 1477,623.1 1482,623.1 1490.5,623.1 1494,623.1 1501,623.1 1506,626.7 1507,627.3 1518,628.1 1519.5,628.2 1528,627.6 1530,627.4 1531.5,627.3 1542,627.7 1545,627.8 1554,628.5 1562.5,629.0 1566,628.8 1578,628.2 1579.5,628.2 1590,627.6 1596.5,627.3 1602,628.2 1610,629.5 1613.5,629.3 1614,629.3 1626,628.5 1630.5,628.2 1638,628.0 1647.5,627.8 1650,627.9 1662,628.2 1663,628.2 1669,629.7 1674,631.0 1675,631.2 1681,625.8 1686,627.3 1687.5,627.8 1693.5,629.9 1698,627.3 1699.5,626.5 1705.5,627.9 1710,630.4 1711.5,631.2 1717.5,626.5 1722,628.5 1723.5,629.0 1732.5,627.9 1734,627.8 1746,627.0 1750,626.8 1758,627.2 1760,627.3L1760,642Z" fill="#4a1e48"/><defs><linearGradient id="gr7" gradientUnits="userSpaceOnUse" x1="0" x2="0" y1="695" y2="729"><stop offset="0" stop-color="#c8163f"/><stop offset="1" stop-color="#9e1036"/></linearGradient><linearGradient id="gg8" gradientUnits="userSpaceOnUse" x1="0" x2="0" y1="740" y2="816"><stop offset="0" stop-color="#2cb07e"/><stop offset="1" stop-color="#218c68"/></linearGradient><linearGradient id="gp8" gradientUnits="userSpaceOnUse" x1="0" x2="0" y1="795" y2="816"><stop offset="0" stop-color="#4e2050"/><stop offset="1" stop-color="#3e1a3e"/></linearGradient></defs><path d="M234,729L234,673.1 241,669.0 246,666.3 247,665.8 253.5,658.6 258,678.4 259,682.8 265,674.0 270,665.1 271,663.6 277,672.8 282,667.8 283,666.5 289,650.7 294,685.0 295,692.0 301,653.0 306,684.0 307,690.3 313,667.4 318,662.7 319,661.8 325,667.3 330,661.0 331,659.7 337,676.3 342,668.5 343,667.0 349.5,673.0 354,670.9 355.5,670.0 361,660.7 366,667.8 367,669.1 373,670.2 378,668.5 379.5,667.9 385,653.0 390,666.8 391,669.1 397,667.5 402,670.1 403.5,670.9 409,673.7 414,672.9 414.5,672.8 421,674.2 426,669.6 427,668.7 434,668.0 438,667.3 439,667.1 445.5,668.2 450,667.3 451,667.1 457.5,662.7 462,670.8 463,672.5 469,668.4 474,669.2 475,669.3 481,668.3 486,668.2 498,668.0 501,668.0 505,666.9 510,665.5 511.5,665.3 517,667.6 522,669.8 523,670.2 529,664.1 534,669.1 535,670.1 541,667.1 546,668.0 547,668.2 553.5,668.2 558,668.2 559,668.2 565,668.2 570,672.3 571,673.2 577,681.9 582,682.2 584,682.2 593,682.2 594,682.2 604.5,682.2 606,682.2 616,682.2 618,682.2 627,682.2 630,682.2 640,682.2 642,682.2 646,682.2 652,682.2 654,682.2 658,682.2 664,682.2 666,682.2 670,682.2 676,682.2 678,682.2 682,682.2 688,682.2 690,682.2 694,682.2 700,682.2 702,682.2 706,682.2 712,682.2 714,682.2 718,682.2 724,682.2 726,682.2 730,682.2 736,682.2 738,682.2 742,682.2 748,682.2 750,682.2 754,682.2 760,682.2 762,682.2 766,682.2 772,682.2 774,682.2 778,682.2 784,682.2 786,682.2 790,682.2 796,682.2 798,682.2 802,682.2 808,682.2 810,682.2 814,682.2 820,682.2 822,682.2 826,682.2 832,682.2 834,682.2 838,682.2 844,682.2 846,682.2 850,682.2 856,682.2 858,682.2 862,682.2 868,682.2 870,682.2 874,682.2 880,682.2 882,682.2 886,682.2 892,682.2 894,682.2 898,682.2 904,682.2 906,682.2 910,682.2 912,682.2 914,682.2 918,682.2 919,682.2 925.5,682.2 930,682.2 931,682.2 937.5,692.0 942,682.2 943.5,679.7 949,688.7 954,673.4 955,670.2 961,680.8 966,681.9 967.5,682.4 973,695.1 978,679.6 979,677.0 985,674.3 990,680.6 991.5,682.2 997.5,682.2 1002,684.0 1003,684.4 1009,681.9 1014,693.3 1015,695.5 1021,684.9 1026,681.7 1027,681.1 1033,679.9 1038,679.3 1039,679.1 1045,679.6 1050,684.6 1051.5,686.2 1057,680.7 1062,684.9 1063.5,686.1 1069,682.6 1074,686.7 1075.5,687.8 1081,682.6 1086,682.5 1086.5,682.5 1093,676.5 1098,680.2 1099,680.9 1105.5,675.5 1110,691.2 1111,694.7 1114,686.8 1117.5,676.7 1122,683.4 1123,684.9 1129.5,675.3 1134,687.9 1135,690.7 1141.5,683.7 1146,678.7 1147,677.7 1153,686.5 1158,679.8 1159.5,677.7 1165,686.0 1170,681.8 1171.5,680.6 1177,685.0 1182,676.1 1183.5,674.3 1189,692.4 1194,682.9 1194.5,682.0 1201,680.3 1206,680.3 1207,680.3 1213.5,688.4 1218,683.7 1219,682.7 1225.5,682.1 1230,680.3 1231,679.9 1236.5,679.4 1242,685.1 1243.5,686.7 1249,682.4 1254,682.2 1260.5,682.2 1266,682.2 1273,682.2 1278,681.5 1279,681.5 1284.5,682.8 1290,680.6 1290.5,680.4 1296,683.5 1297,684.1 1302,682.1 1303,681.7 1309,682.8 1314,682.2 1320,682.2 1326,682.2 1332,682.2 1338,682.2 1344,682.2 1350,682.2 1356,682.2 1362,682.2 1368,682.2 1374,682.2 1380,682.2 1386,682.2 1392,682.2 1398,682.2 1404,682.2 1410,682.2 1416,682.2 1422,682.2 1428,682.2 1434,682.2 1440,682.2 1446,682.2 1452,682.2 1455,682.2 1458,682.2 1460,682.2 1470,682.2 1482,682.2 1494,682.2 1501,682.2 1506,682.2 1507,682.2 1511,682.2 1518,682.2 1530,682.2 1540,682.2 1542,682.2 1543.5,682.2 1545,682.2 1547,682.2 1554,682.2 1566,682.2 1578,682.2 1579.5,682.2 1590,682.2 1596.5,682.2 1602,683.3 1603,683.5 1610,681.4 1613.5,681.8 1614,681.9 1617,682.2 1626,682.2 1638,682.2 1650,682.2 1662,682.2 1663,682.4 1669,687.7 1674,689.5 1675,689.8 1681,670.2 1686,678.8 1687.5,681.8 1693.5,683.9 1698,681.1 1699.5,680.2 1705.5,683.1 1710,687.4 1711.5,688.5 1717.5,677.2 1722,680.8 1723.5,681.9 1729.5,683.0 1732.5,682.7 1734,682.5 1736,682.2 1741,682.2 1746,682.2 1755,682.2 1758,682.7 1760,683.1L1760,729Z" fill="#29a677"/><path d="M234,673.1 241,669.0 246,666.3 247,665.8 253.5,658.6 258,678.4 259,682.8 265,674.0 270,665.1 271,663.6 277,672.8 282,667.8 283,666.5 289,650.7 294,685.0 295,692.0 301,653.0 306,684.0 307,690.3 313,667.4 318,662.7 319,661.8 325,667.3 330,661.0 331,659.7 337,676.3 342,668.5 343,667.0 349.5,673.0 354,670.9 355.5,670.0 361,660.7 366,667.8 367,669.1 373,670.2 378,668.5 379.5,667.9 385,653.0 390,666.8 391,669.1 397,667.5 402,670.1 403.5,670.9 409,673.7 414,672.9 414.5,672.8 421,674.2 426,669.6 427,668.7 434,668.0 438,667.3 439,667.1 445.5,668.2 450,667.3 451,667.1 457.5,662.7 462,670.8 463,672.5 469,668.4 474,669.2 475,669.3 481,668.3 486,668.2 498,668.0 501,668.0 505,666.9 510,665.5 511.5,665.3 517,667.6 522,669.8 523,670.2 529,664.1 534,669.1 535,670.1 541,667.1 546,668.0 547,668.2 553.5,668.2 558,668.2 559,668.2 565,668.2 570,672.3 571,673.2 577,681.9 582,682.2 584,682.2 593,682.2 594,682.2 604.5,682.2 606,682.2 616,682.2 618,682.2 627,682.2 630,682.2 640,682.2 642,682.2 646,682.2 652,682.2 654,682.2 658,682.2 664,682.2 666,682.2 670,682.2 676,682.2 678,682.2 682,682.2 688,682.2 690,682.2 694,682.2 700,682.2 702,682.2 706,682.2 712,682.2 714,682.2 718,682.2 724,682.2 726,682.2 730,682.2 736,682.2 738,682.2 742,682.2 748,682.2 750,682.2 754,682.2 760,682.2 762,682.2 766,682.2 772,682.2 774,682.2 778,682.2 784,682.2 786,682.2 790,682.2 796,682.2 798,682.2 802,682.2 808,682.2 810,682.2 814,682.2 820,682.2 822,682.2 826,682.2 832,682.2 834,682.2 838,682.2 844,682.2 846,682.2 850,682.2 856,682.2 858,682.2 862,682.2 868,682.2 870,682.2 874,682.2 880,682.2 882,682.2 886,682.2 892,682.2 894,682.2 898,682.2 904,682.2 906,682.2 910,682.2 912,682.2 914,682.2 918,682.2 919,682.2 925.5,682.2 930,682.2 931,682.2 937.5,692.0 942,682.2 943.5,679.7 949,688.7 954,673.4 955,670.2 961,680.8 966,681.9 967.5,682.4 973,695.1 978,679.6 979,677.0 985,674.3 990,680.6 991.5,682.2 997.5,682.2 1002,684.0 1003,684.4 1009,681.9 1014,693.3 1015,695.5 1021,684.9 1026,681.7 1027,681.1 1033,679.9 1038,679.3 1039,679.1 1045,679.6 1050,684.6 1051.5,686.2 1057,680.7 1062,684.9 1063.5,686.1 1069,682.6 1074,686.7 1075.5,687.8 1081,682.6 1086,682.5 1086.5,682.5 1093,676.5 1098,680.2 1099,680.9 1105.5,675.5 1110,691.2 1111,694.7 1114,686.8 1117.5,676.7 1122,683.4 1123,684.9 1129.5,675.3 1134,687.9 1135,690.7 1141.5,683.7 1146,678.7 1147,677.7 1153,686.5 1158,679.8 1159.5,677.7 1165,686.0 1170,681.8 1171.5,680.6 1177,685.0 1182,676.1 1183.5,674.3 1189,692.4 1194,682.9 1194.5,682.0 1201,680.3 1206,680.3 1207,680.3 1213.5,688.4 1218,683.7 1219,682.7 1225.5,682.1 1230,680.3 1231,679.9 1236.5,679.4 1242,685.1 1243.5,686.7 1249,682.4 1254,682.2 1260.5,682.2 1266,682.2 1273,682.2 1278,681.5 1279,681.5 1284.5,682.8 1290,680.6 1290.5,680.4 1296,683.5 1297,684.1 1302,682.1 1303,681.7 1309,682.8 1314,682.2 1320,682.2 1326,682.2 1332,682.2 1338,682.2 1344,682.2 1350,682.2 1356,682.2 1362,682.2 1368,682.2 1374,682.2 1380,682.2 1386,682.2 1392,682.2 1398,682.2 1404,682.2 1410,682.2 1416,682.2 1422,682.2 1428,682.2 1434,682.2 1440,682.2 1446,682.2 1452,682.2 1455,682.2 1458,682.2 1460,682.2 1470,682.2 1482,682.2 1494,682.2 1501,682.2 1506,682.2 1507,682.2 1511,682.2 1518,682.2 1530,682.2 1540,682.2 1542,682.2 1543.5,682.2 1545,682.2 1547,682.2 1554,682.2 1566,682.2 1578,682.2 1579.5,682.2 1590,682.2 1596.5,682.2 1602,683.3 1603,683.5 1610,681.4 1613.5,681.8 1614,681.9 1617,682.2 1626,682.2 1638,682.2 1650,682.2 1662,682.2 1663,682.4 1669,687.7 1674,689.5 1675,689.8 1681,670.2 1686,678.8 1687.5,681.8 1693.5,683.9 1698,681.1 1699.5,680.2 1705.5,683.1 1710,687.4 1711.5,688.5 1717.5,677.2 1722,680.8 1723.5,681.9 1729.5,683.0 1732.5,682.7 1734,682.5 1736,682.2 1741,682.2 1746,682.2 1755,682.2 1758,682.7 1760,683.1" fill="none" stroke="#30bf88" stroke-width="1.2" stroke-linejoin="round"/><path d="M234,729L234,682.8 241,679.9 246,678.0 247,677.7 253.5,667.1 258,688.3 259,693.0 265,682.1 270,676.9 271,676.0 277,684.2 282,680.1 283,679.0 289,664.3 294,695.8 295,702.3 301,666.0 306,693.8 307,699.4 313,679.3 318,675.6 319,674.8 325,679.8 330,673.5 331,672.2 337,688.2 342,680.5 343,678.9 349.5,684.3 354,680.5 355.5,679.2 361,673.8 366,679.4 367,680.5 373,681.6 378,679.9 379.5,679.3 385,666.1 390,679.3 391,681.6 397,678.8 402,681.5 403.5,682.3 409,684.5 414,683.5 414.5,683.4 421,684.4 426,680.3 427,679.5 434,679.4 438,679.4 439,679.4 445.5,679.4 450,679.4 451,679.4 457.5,675.7 462,682.0 463,683.3 469,680.4 474,679.9 475,679.8 481,679.4 486,679.4 498,679.4 501,679.4 505,679.4 510,679.4 511.5,679.4 517,679.4 522,680.1 523,680.2 529,678.3 534,679.6 535,679.9 541,679.4 546,679.4 547,679.4 553.5,679.4 558,679.8 559,679.9 565,679.4 570,683.2 571,684.0 577,691.1 582,691.3 584,691.3 593,691.3 594,691.3 604.5,691.3 606,691.3 616,691.3 618,691.3 627,691.3 630,691.3 640,691.4 642,691.4 646,691.4 652,690.6 654,690.9 658,691.4 664,691.4 666,691.1 670,690.6 676,691.4 678,691.4 682,691.4 688,691.4 690,691.4 694,691.4 700,691.4 702,691.4 706,691.4 712,691.4 714,691.1 718,690.6 724,690.6 726,690.9 730,691.4 736,691.4 738,691.4 742,691.4 748,691.4 750,691.4 754,691.4 760,691.4 762,691.1 766,690.6 772,690.6 774,691.1 778,692.2 784,690.6 786,690.6 790,690.6 796,691.4 798,691.1 802,690.6 808,690.6 810,690.9 814,691.4 820,691.4 822,691.4 826,691.4 832,691.4 834,691.1 838,690.6 844,690.6 846,691.1 850,692.2 856,691.4 858,691.4 862,691.4 868,692.2 870,691.9 874,691.4 880,691.4 882,691.1 886,690.6 892,692.2 894,691.9 898,691.4 904,691.4 906,691.4 910,691.4 912,691.3 914,691.3 918,691.3 919,691.3 925.5,691.3 930,691.3 931,691.3 937.5,700.0 942,692.0 943.5,689.8 949,697.2 954,683.8 955,680.9 961,691.0 966,691.3 967.5,691.5 973,703.6 978,688.6 979,686.1 985,684.5 990,689.9 991.5,691.3 997.5,691.3 1002,692.6 1003,692.9 1009,690.9 1014,700.5 1015,702.4 1021,692.4 1026,691.5 1027,691.3 1033,690.1 1038,688.5 1039,688.2 1045,688.4 1050,693.6 1051.5,695.3 1057,689.8 1062,694.0 1063.5,695.2 1069,691.4 1074,694.0 1075.5,694.6 1081,691.3 1086,691.3 1086.5,691.3 1093,688.5 1098,689.8 1099,690.1 1105.5,685.7 1110,698.7 1111,701.6 1114,695.3 1117.5,688.0 1122,692.0 1123,692.9 1129.5,683.8 1134,697.3 1135,700.3 1141.5,692.3 1146,689.1 1147,688.5 1153,694.5 1158,689.9 1159.5,688.5 1165,693.4 1170,690.9 1171.5,690.2 1177,692.4 1182,686.6 1183.5,685.5 1189,698.7 1194,692.2 1194.5,691.5 1201,690.2 1206,689.5 1207,689.4 1213.5,694.7 1218,692.0 1219,691.4 1225.5,691.3 1230,691.3 1231,691.3 1236.5,689.7 1242,693.5 1243.5,694.7 1249,691.4 1254,691.3 1260.5,691.3 1266,691.3 1273,691.3 1278,691.3 1279,691.3 1284.5,691.3 1290,691.3 1290.5,691.3 1296,691.3 1297,691.3 1302,691.3 1303,691.3 1309,691.3 1314,691.3 1320,691.3 1326,691.3 1332,691.3 1338,691.3 1344,691.4 1350,691.4 1356,691.4 1362,691.4 1368,691.4 1374,691.4 1380,691.4 1386,691.4 1392,691.5 1398,691.5 1404,691.5 1410,691.5 1416,691.5 1422,691.5 1428,691.5 1434,691.6 1440,691.6 1446,691.6 1452,691.6 1455,691.6 1458,691.6 1460,691.6 1470,691.6 1482,691.6 1494,691.6 1501,691.6 1506,692.4 1507,692.4 1511,692.4 1518,692.4 1530,692.4 1540,692.4 1542,692.0 1543.5,691.6 1545,691.9 1547,692.4 1554,692.4 1566,692.4 1578,692.4 1579.5,692.4 1590,692.4 1596.5,692.4 1602,693.1 1603,693.3 1610,691.6 1613.5,692.0 1614,692.1 1617,692.4 1626,692.4 1638,692.4 1650,692.4 1662,692.4 1663,692.6 1669,697.2 1674,698.2 1675,698.4 1681,681.5 1686,689.6 1687.5,692.3 1693.5,694.5 1698,691.4 1699.5,690.4 1705.5,692.5 1710,697.0 1711.5,698.2 1717.5,686.6 1722,690.4 1723.5,691.6 1729.5,692.4 1732.5,692.0 1734,691.8 1736,691.6 1741,692.4 1746,692.4 1755,692.4 1758,692.4 1760,692.4L1760,729Z" fill="#cc6f2c"/><path d="M234,682.8 241,679.9 246,678.0 247,677.7 253.5,667.1 258,688.3 259,693.0 265,682.1 270,676.9 271,676.0 277,684.2 282,680.1 283,679.0 289,664.3 294,695.8 295,702.3 301,666.0 306,693.8 307,699.4 313,679.3 318,675.6 319,674.8 325,679.8 330,673.5 331,672.2 337,688.2 342,680.5 343,678.9 349.5,684.3 354,680.5 355.5,679.2 361,673.8 366,679.4 367,680.5 373,681.6 378,679.9 379.5,679.3 385,666.1 390,679.3 391,681.6 397,678.8 402,681.5 403.5,682.3 409,684.5 414,683.5 414.5,683.4 421,684.4 426,680.3 427,679.5 434,679.4 438,679.4 439,679.4 445.5,679.4 450,679.4 451,679.4 457.5,675.7 462,682.0 463,683.3 469,680.4 474,679.9 475,679.8 481,679.4 486,679.4 498,679.4 501,679.4 505,679.4 510,679.4 511.5,679.4 517,679.4 522,680.1 523,680.2 529,678.3 534,679.6 535,679.9 541,679.4 546,679.4 547,679.4 553.5,679.4 558,679.8 559,679.9 565,679.4 570,683.2 571,684.0 577,691.1 582,691.3 584,691.3 593,691.3 594,691.3 604.5,691.3 606,691.3 616,691.3 618,691.3 627,691.3 630,691.3 640,691.4 642,691.4 646,691.4 652,690.6 654,690.9 658,691.4 664,691.4 666,691.1 670,690.6 676,691.4 678,691.4 682,691.4 688,691.4 690,691.4 694,691.4 700,691.4 702,691.4 706,691.4 712,691.4 714,691.1 718,690.6 724,690.6 726,690.9 730,691.4 736,691.4 738,691.4 742,691.4 748,691.4 750,691.4 754,691.4 760,691.4 762,691.1 766,690.6 772,690.6 774,691.1 778,692.2 784,690.6 786,690.6 790,690.6 796,691.4 798,691.1 802,690.6 808,690.6 810,690.9 814,691.4 820,691.4 822,691.4 826,691.4 832,691.4 834,691.1 838,690.6 844,690.6 846,691.1 850,692.2 856,691.4 858,691.4 862,691.4 868,692.2 870,691.9 874,691.4 880,691.4 882,691.1 886,690.6 892,692.2 894,691.9 898,691.4 904,691.4 906,691.4 910,691.4 912,691.3 914,691.3 918,691.3 919,691.3 925.5,691.3 930,691.3 931,691.3 937.5,700.0 942,692.0 943.5,689.8 949,697.2 954,683.8 955,680.9 961,691.0 966,691.3 967.5,691.5 973,703.6 978,688.6 979,686.1 985,684.5 990,689.9 991.5,691.3 997.5,691.3 1002,692.6 1003,692.9 1009,690.9 1014,700.5 1015,702.4 1021,692.4 1026,691.5 1027,691.3 1033,690.1 1038,688.5 1039,688.2 1045,688.4 1050,693.6 1051.5,695.3 1057,689.8 1062,694.0 1063.5,695.2 1069,691.4 1074,694.0 1075.5,694.6 1081,691.3 1086,691.3 1086.5,691.3 1093,688.5 1098,689.8 1099,690.1 1105.5,685.7 1110,698.7 1111,701.6 1114,695.3 1117.5,688.0 1122,692.0 1123,692.9 1129.5,683.8 1134,697.3 1135,700.3 1141.5,692.3 1146,689.1 1147,688.5 1153,694.5 1158,689.9 1159.5,688.5 1165,693.4 1170,690.9 1171.5,690.2 1177,692.4 1182,686.6 1183.5,685.5 1189,698.7 1194,692.2 1194.5,691.5 1201,690.2 1206,689.5 1207,689.4 1213.5,694.7 1218,692.0 1219,691.4 1225.5,691.3 1230,691.3 1231,691.3 1236.5,689.7 1242,693.5 1243.5,694.7 1249,691.4 1254,691.3 1260.5,691.3 1266,691.3 1273,691.3 1278,691.3 1279,691.3 1284.5,691.3 1290,691.3 1290.5,691.3 1296,691.3 1297,691.3 1302,691.3 1303,691.3 1309,691.3 1314,691.3 1320,691.3 1326,691.3 1332,691.3 1338,691.3 1344,691.4 1350,691.4 1356,691.4 1362,691.4 1368,691.4 1374,691.4 1380,691.4 1386,691.4 1392,691.5 1398,691.5 1404,691.5 1410,691.5 1416,691.5 1422,691.5 1428,691.5 1434,691.6 1440,691.6 1446,691.6 1452,691.6 1455,691.6 1458,691.6 1460,691.6 1470,691.6 1482,691.6 1494,691.6 1501,691.6 1506,692.4 1507,692.4 1511,692.4 1518,692.4 1530,692.4 1540,692.4 1542,692.0 1543.5,691.6 1545,691.9 1547,692.4 1554,692.4 1566,692.4 1578,692.4 1579.5,692.4 1590,692.4 1596.5,692.4 1602,693.1 1603,693.3 1610,691.6 1613.5,692.0 1614,692.1 1617,692.4 1626,692.4 1638,692.4 1650,692.4 1662,692.4 1663,692.6 1669,697.2 1674,698.2 1675,698.4 1681,681.5 1686,689.6 1687.5,692.3 1693.5,694.5 1698,691.4 1699.5,690.4 1705.5,692.5 1710,697.0 1711.5,698.2 1717.5,686.6 1722,690.4 1723.5,691.6 1729.5,692.4 1732.5,692.0 1734,691.8 1736,691.6 1741,692.4 1746,692.4 1755,692.4 1758,692.4 1760,692.4" fill="none" stroke="#e8822f" stroke-width="1.0" stroke-linejoin="round"/><path d="M234,729L234,694.1 241,690.7 246,688.8 247,688.5 253.5,679.0 258,697.4 259,701.5 265,692.8 270,688.2 271,687.4 277,692.3 282,690.0 283,689.3 289,677.3 294,698.8 295,703.2 301,678.4 306,698.3 307,702.4 313,689.6 318,686.7 319,686.2 325,691.2 330,684.8 331,683.5 337,697.3 342,690.5 343,689.1 349.5,693.5 354,690.5 355.5,689.5 361,686.2 366,690.0 367,690.7 373,691.8 378,690.1 379.5,689.5 385,678.5 390,689.4 391,691.2 397,689.0 402,691.3 403.5,691.9 409,693.0 414,693.0 414.5,693.0 421,693.0 426,689.8 427,689.1 434,690.2 438,690.2 439,690.2 445.5,690.2 450,690.2 451,690.2 457.5,687.5 462,692.0 463,693.0 469,689.5 474,689.9 475,690.0 481,690.7 486,690.6 498,690.3 501,690.3 505,690.2 510,689.5 511.5,689.4 517,689.7 522,690.1 523,690.1 529,689.4 534,689.4 535,689.4 541,689.4 546,689.4 547,689.4 553.5,689.6 558,689.8 559,689.9 565,690.1 570,694.0 571,694.8 577,701.9 582,702.5 584,702.7 593,701.5 594,701.6 604.5,702.1 606,702.0 616,701.5 618,701.6 627,702.1 630,701.9 640,701.2 642,701.5 646,702.0 652,702.0 654,702.0 658,702.0 664,702.0 666,702.0 670,702.0 676,702.0 678,702.0 682,702.0 688,702.0 690,702.0 694,702.0 700,702.0 702,702.0 706,702.0 712,702.0 714,701.7 718,701.2 724,702.0 726,702.0 730,702.0 736,702.8 738,702.5 742,702.0 748,702.0 750,702.0 754,702.0 760,702.8 762,702.8 766,702.8 772,702.0 774,702.0 778,702.0 784,702.0 786,702.3 790,702.8 796,702.0 798,702.0 802,702.0 808,701.2 810,701.7 814,702.8 820,702.0 822,702.0 826,702.0 832,702.0 834,701.7 838,701.2 844,702.0 846,702.0 850,702.0 856,702.0 858,702.0 862,702.0 868,702.0 870,702.0 874,702.0 880,702.0 882,702.3 886,702.8 892,702.0 894,702.0 898,702.0 904,702.8 906,702.5 910,702.0 912,701.8 914,701.5 918,701.8 919,701.9 925.5,701.2 930,701.7 931,701.9 937.5,707.7 942,702.1 943.5,700.6 949,705.8 954,696.9 955,695.0 961,701.0 966,701.2 967.5,701.3 973,709.9 978,699.7 979,698.1 985,697.0 990,700.1 991.5,701.0 997.5,701.5 1002,702.9 1003,703.2 1009,701.3 1014,707.5 1015,708.7 1021,702.6 1026,701.4 1027,701.2 1033,700.9 1038,700.0 1039,699.8 1045,699.3 1050,703.1 1051.5,704.4 1057,700.0 1062,703.8 1063.5,704.9 1069,701.3 1074,702.8 1075.5,703.2 1081,702.3 1086,701.9 1086.5,701.9 1093,700.4 1098,701.0 1099,701.2 1105.5,696.5 1110,705.9 1111,708.0 1114,704.4 1117.5,699.3 1122,702.0 1123,702.6 1129.5,696.7 1134,706.2 1135,708.3 1141.5,702.0 1146,699.7 1147,699.3 1153,704.2 1158,701.3 1159.5,700.4 1165,703.2 1170,701.9 1171.5,701.5 1177,702.6 1182,697.7 1183.5,696.7 1189,706.1 1194,702.1 1194.5,701.7 1201,701.2 1206,700.5 1207,700.4 1213.5,704.3 1218,703.0 1219,702.7 1225.5,702.1 1230,701.6 1231,701.5 1236.5,700.4 1242,703.5 1243.5,704.3 1249,702.2 1254,701.9 1260.5,701.5 1266,701.8 1273,702.1 1278,701.8 1279,701.8 1284.5,701.5 1290,701.8 1290.5,701.8 1296,702.1 1297,702.0 1302,701.8 1303,701.7 1309,701.4 1314,701.2 1320,702.3 1326,701.5 1332,701.5 1338,701.5 1344,701.5 1350,701.5 1356,700.7 1362,702.3 1368,701.5 1374,702.3 1380,701.5 1386,701.5 1392,701.5 1398,700.7 1404,701.5 1410,701.5 1416,700.7 1422,701.5 1428,701.5 1434,701.5 1440,701.5 1446,700.7 1452,701.5 1455,701.3 1458,701.1 1460,701.0 1470,701.8 1482,701.5 1494,701.1 1501,700.9 1506,698.3 1507,697.9 1511,697.6 1518,697.5 1530,697.4 1540,697.3 1542,697.2 1543.5,697.2 1545,697.2 1547,697.2 1554,697.4 1566,697.6 1578,697.9 1579.5,697.9 1590,697.7 1596.5,697.5 1602,697.4 1603,697.4 1610,697.3 1613.5,697.2 1614,697.2 1617,697.2 1626,697.3 1638,697.4 1650,697.5 1662,697.5 1663,697.7 1669,702.7 1674,702.9 1675,703.0 1681,688.7 1686,694.0 1687.5,695.8 1693.5,698.4 1698,695.8 1699.5,695.0 1705.5,696.7 1710,701.2 1711.5,702.5 1717.5,692.5 1722,695.7 1723.5,696.7 1729.5,697.0 1732.5,697.2 1734,697.2 1736,697.2 1741,697.2 1746,697.2 1755,697.2 1758,697.2 1760,697.2L1760,729Z" fill="url(#gr7)"/><path d="M234,694.1 241,690.7 246,688.8 247,688.5 253.5,679.0 258,697.4 259,701.5 265,692.8 270,688.2 271,687.4 277,692.3 282,690.0 283,689.3 289,677.3 294,698.8 295,703.2 301,678.4 306,698.3 307,702.4 313,689.6 318,686.7 319,686.2 325,691.2 330,684.8 331,683.5 337,697.3 342,690.5 343,689.1 349.5,693.5 354,690.5 355.5,689.5 361,686.2 366,690.0 367,690.7 373,691.8 378,690.1 379.5,689.5 385,678.5 390,689.4 391,691.2 397,689.0 402,691.3 403.5,691.9 409,693.0 414,693.0 414.5,693.0 421,693.0 426,689.8 427,689.1 434,690.2 438,690.2 439,690.2 445.5,690.2 450,690.2 451,690.2 457.5,687.5 462,692.0 463,693.0 469,689.5 474,689.9 475,690.0 481,690.7 486,690.6 498,690.3 501,690.3 505,690.2 510,689.5 511.5,689.4 517,689.7 522,690.1 523,690.1 529,689.4 534,689.4 535,689.4 541,689.4 546,689.4 547,689.4 553.5,689.6 558,689.8 559,689.9 565,690.1 570,694.0 571,694.8 577,701.9 582,702.5 584,702.7 593,701.5 594,701.6 604.5,702.1 606,702.0 616,701.5 618,701.6 627,702.1 630,701.9 640,701.2 642,701.5 646,702.0 652,702.0 654,702.0 658,702.0 664,702.0 666,702.0 670,702.0 676,702.0 678,702.0 682,702.0 688,702.0 690,702.0 694,702.0 700,702.0 702,702.0 706,702.0 712,702.0 714,701.7 718,701.2 724,702.0 726,702.0 730,702.0 736,702.8 738,702.5 742,702.0 748,702.0 750,702.0 754,702.0 760,702.8 762,702.8 766,702.8 772,702.0 774,702.0 778,702.0 784,702.0 786,702.3 790,702.8 796,702.0 798,702.0 802,702.0 808,701.2 810,701.7 814,702.8 820,702.0 822,702.0 826,702.0 832,702.0 834,701.7 838,701.2 844,702.0 846,702.0 850,702.0 856,702.0 858,702.0 862,702.0 868,702.0 870,702.0 874,702.0 880,702.0 882,702.3 886,702.8 892,702.0 894,702.0 898,702.0 904,702.8 906,702.5 910,702.0 912,701.8 914,701.5 918,701.8 919,701.9 925.5,701.2 930,701.7 931,701.9 937.5,707.7 942,702.1 943.5,700.6 949,705.8 954,696.9 955,695.0 961,701.0 966,701.2 967.5,701.3 973,709.9 978,699.7 979,698.1 985,697.0 990,700.1 991.5,701.0 997.5,701.5 1002,702.9 1003,703.2 1009,701.3 1014,707.5 1015,708.7 1021,702.6 1026,701.4 1027,701.2 1033,700.9 1038,700.0 1039,699.8 1045,699.3 1050,703.1 1051.5,704.4 1057,700.0 1062,703.8 1063.5,704.9 1069,701.3 1074,702.8 1075.5,703.2 1081,702.3 1086,701.9 1086.5,701.9 1093,700.4 1098,701.0 1099,701.2 1105.5,696.5 1110,705.9 1111,708.0 1114,704.4 1117.5,699.3 1122,702.0 1123,702.6 1129.5,696.7 1134,706.2 1135,708.3 1141.5,702.0 1146,699.7 1147,699.3 1153,704.2 1158,701.3 1159.5,700.4 1165,703.2 1170,701.9 1171.5,701.5 1177,702.6 1182,697.7 1183.5,696.7 1189,706.1 1194,702.1 1194.5,701.7 1201,701.2 1206,700.5 1207,700.4 1213.5,704.3 1218,703.0 1219,702.7 1225.5,702.1 1230,701.6 1231,701.5 1236.5,700.4 1242,703.5 1243.5,704.3 1249,702.2 1254,701.9 1260.5,701.5 1266,701.8 1273,702.1 1278,701.8 1279,701.8 1284.5,701.5 1290,701.8 1290.5,701.8 1296,702.1 1297,702.0 1302,701.8 1303,701.7 1309,701.4 1314,701.2 1320,702.3 1326,701.5 1332,701.5 1338,701.5 1344,701.5 1350,701.5 1356,700.7 1362,702.3 1368,701.5 1374,702.3 1380,701.5 1386,701.5 1392,701.5 1398,700.7 1404,701.5 1410,701.5 1416,700.7 1422,701.5 1428,701.5 1434,701.5 1440,701.5 1446,700.7 1452,701.5 1455,701.3 1458,701.1 1460,701.0 1470,701.8 1482,701.5 1494,701.1 1501,700.9 1506,698.3 1507,697.9 1511,697.6 1518,697.5 1530,697.4 1540,697.3 1542,697.2 1543.5,697.2 1545,697.2 1547,697.2 1554,697.4 1566,697.6 1578,697.9 1579.5,697.9 1590,697.7 1596.5,697.5 1602,697.4 1603,697.4 1610,697.3 1613.5,697.2 1614,697.2 1617,697.2 1626,697.3 1638,697.4 1650,697.5 1662,697.5 1663,697.7 1669,702.7 1674,702.9 1675,703.0 1681,688.7 1686,694.0 1687.5,695.8 1693.5,698.4 1698,695.8 1699.5,695.0 1705.5,696.7 1710,701.2 1711.5,702.5 1717.5,692.5 1722,695.7 1723.5,696.7 1729.5,697.0 1732.5,697.2 1734,697.2 1736,697.2 1741,697.2 1746,697.2 1755,697.2 1758,697.2 1760,697.2" fill="none" stroke="#e0184a" stroke-width="1.0" stroke-linejoin="round"/><rect x="234" y="727" width="1526" height="2" fill="#4a1e48"/><path d="M234,816L234,768.1 241,764.0 246,761.7 247,761.3 253.5,750.3 258,773.7 259,778.9 265,766.9 270,762.1 271,761.3 277,766.8 282,763.6 283,762.6 289,748.5 294,774.0 295,779.3 301,753.5 306,771.5 307,775.2 313,764.1 318,760.8 319,760.1 325,764.0 330,759.5 331,758.6 337,769.6 342,763.7 343,762.5 349.5,768.0 354,765.9 355.5,765.1 361,759.6 366,764.3 367,765.2 373,765.2 378,765.2 379.5,765.1 385,750.8 390,764.1 391,766.3 397,763.0 402,765.6 403.5,766.4 409,768.6 414,767.4 414.5,767.3 421,768.6 426,765.0 427,764.2 434,763.9 438,763.9 445.5,763.9 450,763.9 451,763.9 457.5,760.3 462,765.4 463,766.6 463.5,766.8 469,764.2 474,764.1 481,764.1 486,764.1 487,764.1 493,764.1 498,764.1 499,764.1 505,764.1 510,763.4 511.5,763.2 517,763.5 522,763.8 523,763.9 529,763.2 534,764.9 535,765.2 541,764.1 546,764.1 553.5,764.1 558,764.1 559,764.1 565,764.1 570,764.1 571,764.1 577,764.1 582,764.1 589,764.1 594,764.1 595.5,764.1 601,764.1 606,764.1 613,764.1 616,764.1 618,764.1 619,764.1 625.5,764.1 627,764.1 630,764.1 640,764.0 642,764.0 646,764.0 652,764.0 654,764.0 658,764.0 664,764.0 666,764.0 670,764.0 676,764.0 678,764.0 682,764.0 688,764.0 690,764.0 694,764.0 700,764.0 702,764.0 706,764.0 712,764.0 714,764.0 718,764.0 724,764.0 726,764.0 730,764.0 736,764.0 738,764.0 742,764.0 748,764.0 750,764.0 754,764.0 760,764.0 762,764.0 766,764.0 772,764.0 774,764.0 778,764.0 784,764.0 786,764.0 790,764.0 796,764.0 798,764.0 802,764.0 808,764.0 810,764.0 814,764.0 820,764.0 822,764.0 826,764.0 832,764.0 834,764.0 838,764.0 844,764.0 846,764.0 850,764.0 856,764.0 858,764.0 862,764.0 868,764.0 870,764.0 874,764.0 880,764.0 882,764.0 886,764.0 892,764.0 894,764.0 898,764.0 904,764.0 906,764.0 910,764.0 912,764.0 914,763.9 918,763.9 925.5,763.9 930,763.9 931,763.9 937.5,775.5 942,764.5 943.5,761.5 949,770.0 954,753.4 955,749.8 961,760.4 966,763.3 967.5,764.3 973,779.7 978,762.3 979,759.3 985,752.2 990,761.2 991.5,763.6 997.5,765.0 1002,766.1 1003,766.3 1009,762.7 1014,776.3 1015,779.1 1021,764.1 1026,763.3 1027,763.2 1033,762.0 1038,760.4 1039,760.1 1045,759.4 1050,766.8 1051.5,769.2 1057,762.6 1062,765.9 1063.5,766.9 1069,764.1 1074,766.3 1075.5,766.9 1081,764.1 1086,764.1 1086.5,764.1 1093,759.3 1098,762.2 1099,762.8 1105.5,756.8 1110,772.1 1111,775.5 1114,768.6 1117.5,758.0 1122,765.2 1123,766.8 1129.5,756.6 1134,769.6 1135,772.5 1141.5,766.1 1146,761.2 1147,760.2 1153,766.7 1158,761.7 1159.5,760.2 1165,766.8 1170,762.5 1171.5,761.3 1177,765.7 1182,758.2 1183.5,756.7 1189,772.6 1194,764.1 1194.5,763.3 1201,762.0 1206,762.0 1207,762.0 1213.5,766.9 1218,764.6 1219,764.1 1225.5,764.1 1230,763.0 1231,762.7 1236.5,761.0 1242,765.6 1243.5,766.9 1249,764.0 1254,763.9 1261.5,763.9 1266,763.9 1273,763.9 1278,763.9 1279,763.9 1284.5,763.9 1290,763.3 1290.5,763.2 1296,763.8 1297,763.9 1301.5,763.4 1302,763.3 1303,763.2 1314,763.9 1320,764.0 1326,764.0 1332,764.0 1338,764.0 1344,764.0 1350,764.0 1356,764.0 1362,764.0 1368,764.0 1374,764.0 1380,764.0 1386,764.0 1392,764.1 1398,764.1 1404,764.1 1410,764.1 1416,764.1 1422,764.1 1428,764.1 1434,764.1 1440,764.1 1446,764.1 1452,764.1 1455,764.1 1458,764.1 1460,764.1 1465,764.1 1470,764.1 1477,764.1 1482,764.1 1494,764.1 1502,765.1 1506,781.1 1507.5,787.1 1518,788.0 1530,788.0 1542,788.0 1554,788.0 1566,788.0 1578,788.0 1590,788.0 1602,788.0 1605,787.9 1610,787.1 1614,787.8 1615,787.9 1626,788.0 1638,788.0 1650,788.0 1662,788.0 1663.5,788.0 1664.5,788.5 1669.5,792.1 1674,792.2 1675,792.2 1681,779.9 1686,785.9 1687.5,787.9 1693.5,790.5 1698,786.7 1699.5,785.4 1705.5,788.0 1710,791.2 1711.5,792.1 1717.5,784.3 1722,786.4 1723.5,787.1 1729.5,788.0 1734,788.0 1746,788.0 1750,788.0 1758,788.0 1760,788.0L1760,816Z" fill="url(#gg8)"/><path d="M234,768.1 241,764.0 246,761.7 247,761.3 253.5,750.3 258,773.7 259,778.9 265,766.9 270,762.1 271,761.3 277,766.8 282,763.6 283,762.6 289,748.5 294,774.0 295,779.3 301,753.5 306,771.5 307,775.2 313,764.1 318,760.8 319,760.1 325,764.0 330,759.5 331,758.6 337,769.6 342,763.7 343,762.5 349.5,768.0 354,765.9 355.5,765.1 361,759.6 366,764.3 367,765.2 373,765.2 378,765.2 379.5,765.1 385,750.8 390,764.1 391,766.3 397,763.0 402,765.6 403.5,766.4 409,768.6 414,767.4 414.5,767.3 421,768.6 426,765.0 427,764.2 434,763.9 438,763.9 445.5,763.9 450,763.9 451,763.9 457.5,760.3 462,765.4 463,766.6 463.5,766.8 469,764.2 474,764.1 481,764.1 486,764.1 487,764.1 493,764.1 498,764.1 499,764.1 505,764.1 510,763.4 511.5,763.2 517,763.5 522,763.8 523,763.9 529,763.2 534,764.9 535,765.2 541,764.1 546,764.1 553.5,764.1 558,764.1 559,764.1 565,764.1 570,764.1 571,764.1 577,764.1 582,764.1 589,764.1 594,764.1 595.5,764.1 601,764.1 606,764.1 613,764.1 616,764.1 618,764.1 619,764.1 625.5,764.1 627,764.1 630,764.1 640,764.0 642,764.0 646,764.0 652,764.0 654,764.0 658,764.0 664,764.0 666,764.0 670,764.0 676,764.0 678,764.0 682,764.0 688,764.0 690,764.0 694,764.0 700,764.0 702,764.0 706,764.0 712,764.0 714,764.0 718,764.0 724,764.0 726,764.0 730,764.0 736,764.0 738,764.0 742,764.0 748,764.0 750,764.0 754,764.0 760,764.0 762,764.0 766,764.0 772,764.0 774,764.0 778,764.0 784,764.0 786,764.0 790,764.0 796,764.0 798,764.0 802,764.0 808,764.0 810,764.0 814,764.0 820,764.0 822,764.0 826,764.0 832,764.0 834,764.0 838,764.0 844,764.0 846,764.0 850,764.0 856,764.0 858,764.0 862,764.0 868,764.0 870,764.0 874,764.0 880,764.0 882,764.0 886,764.0 892,764.0 894,764.0 898,764.0 904,764.0 906,764.0 910,764.0 912,764.0 914,763.9 918,763.9 925.5,763.9 930,763.9 931,763.9 937.5,775.5 942,764.5 943.5,761.5 949,770.0 954,753.4 955,749.8 961,760.4 966,763.3 967.5,764.3 973,779.7 978,762.3 979,759.3 985,752.2 990,761.2 991.5,763.6 997.5,765.0 1002,766.1 1003,766.3 1009,762.7 1014,776.3 1015,779.1 1021,764.1 1026,763.3 1027,763.2 1033,762.0 1038,760.4 1039,760.1 1045,759.4 1050,766.8 1051.5,769.2 1057,762.6 1062,765.9 1063.5,766.9 1069,764.1 1074,766.3 1075.5,766.9 1081,764.1 1086,764.1 1086.5,764.1 1093,759.3 1098,762.2 1099,762.8 1105.5,756.8 1110,772.1 1111,775.5 1114,768.6 1117.5,758.0 1122,765.2 1123,766.8 1129.5,756.6 1134,769.6 1135,772.5 1141.5,766.1 1146,761.2 1147,760.2 1153,766.7 1158,761.7 1159.5,760.2 1165,766.8 1170,762.5 1171.5,761.3 1177,765.7 1182,758.2 1183.5,756.7 1189,772.6 1194,764.1 1194.5,763.3 1201,762.0 1206,762.0 1207,762.0 1213.5,766.9 1218,764.6 1219,764.1 1225.5,764.1 1230,763.0 1231,762.7 1236.5,761.0 1242,765.6 1243.5,766.9 1249,764.0 1254,763.9 1261.5,763.9 1266,763.9 1273,763.9 1278,763.9 1279,763.9 1284.5,763.9 1290,763.3 1290.5,763.2 1296,763.8 1297,763.9 1301.5,763.4 1302,763.3 1303,763.2 1314,763.9 1320,764.0 1326,764.0 1332,764.0 1338,764.0 1344,764.0 1350,764.0 1356,764.0 1362,764.0 1368,764.0 1374,764.0 1380,764.0 1386,764.0 1392,764.1 1398,764.1 1404,764.1 1410,764.1 1416,764.1 1422,764.1 1428,764.1 1434,764.1 1440,764.1 1446,764.1 1452,764.1 1455,764.1 1458,764.1 1460,764.1 1465,764.1 1470,764.1 1477,764.1 1482,764.1 1494,764.1 1502,765.1 1506,781.1 1507.5,787.1 1518,788.0 1530,788.0 1542,788.0 1554,788.0 1566,788.0 1578,788.0 1590,788.0 1602,788.0 1605,787.9 1610,787.1 1614,787.8 1615,787.9 1626,788.0 1638,788.0 1650,788.0 1662,788.0 1663.5,788.0 1664.5,788.5 1669.5,792.1 1674,792.2 1675,792.2 1681,779.9 1686,785.9 1687.5,787.9 1693.5,790.5 1698,786.7 1699.5,785.4 1705.5,788.0 1710,791.2 1711.5,792.1 1717.5,784.3 1722,786.4 1723.5,787.1 1729.5,788.0 1734,788.0 1746,788.0 1750,788.0 1758,788.0 1760,788.0" fill="none" stroke="#30bf88" stroke-width="1.2" stroke-linejoin="round"/><path d="M234,816L234,795.3 241,793.8 246,792.7 247,792.5 253.5,788.9 258,798.8 259,801.0 265,795.0 270,793.8 271,793.7 277,795.8 282,794.9 283,794.6 289,788.6 294,797.7 295,799.6 301,792.6 306,796.7 307,797.6 313,794.8 318,794.8 319,794.8 325,794.8 330,793.7 331,793.4 337,795.3 342,793.7 343,793.4 349.5,794.1 354,794.6 355.5,794.7 361,791.4 366,794.7 367,795.3 373,794.6 378,795.2 379.5,795.3 385,789.5 390,794.0 391,794.8 397,794.8 402,794.8 403.5,794.8 409,796.5 414,796.5 414.5,796.5 421,796.5 426,795.1 427,794.8 434,794.2 438,794.2 445.5,794.2 450,794.2 451,794.2 457.5,793.4 462,794.3 463,794.5 463.5,794.6 469,795.3 474,794.6 481,793.4 486,795.1 487,795.3 493,794.2 498,795.2 499,795.3 505,794.5 510,794.5 511.5,794.5 517,794.6 522,795.2 523,795.3 529,793.4 534,794.2 535,794.4 541,795.3 546,795.3 553.5,795.3 558,794.7 559,794.5 565,795.3 570,792.8 571,792.2 577,786.4 582,786.4 589,786.6 594,787.2 595.5,787.4 601,786.6 606,786.6 613,786.6 616,787.0 618,787.2 619,787.4 625.5,786.3 627,786.8 630,786.8 640,786.6 642,786.6 646,786.6 652,786.6 654,786.6 658,786.6 664,786.6 666,786.9 670,787.4 676,786.6 678,786.6 682,786.6 688,787.4 690,787.4 694,787.4 700,785.8 702,786.1 706,786.6 712,787.4 714,787.1 718,786.6 724,786.6 726,786.9 730,787.4 736,785.8 738,786.1 742,786.6 748,786.6 750,786.6 754,786.6 760,787.4 762,787.1 766,786.6 772,786.6 774,786.6 778,786.6 784,786.6 786,786.6 790,786.6 796,785.8 798,786.1 802,786.6 808,786.6 810,786.6 814,786.6 820,786.6 822,786.3 826,785.8 832,786.6 834,786.3 838,785.8 844,787.4 846,787.1 850,786.6 856,786.6 858,786.3 862,785.8 868,787.4 870,787.1 874,786.6 880,787.4 882,787.1 886,786.6 892,785.8 894,786.1 898,786.6 904,786.6 906,786.6 910,786.6 912,786.7 914,786.8 918,786.9 925.5,787.0 930,786.4 931,786.3 937.5,794.5 942,787.7 943.5,785.8 949,789.0 954,779.9 955,778.0 961,783.8 966,785.7 967.5,786.4 973,795.2 978,786.0 979,784.4 985,779.5 990,785.8 991.5,787.4 997.5,788.0 1002,788.4 1003,788.5 1009,785.6 1014,794.0 1015,795.7 1021,786.6 1026,786.1 1027,786.0 1033,785.4 1038,784.7 1039,784.5 1045,784.5 1050,788.9 1051.5,790.2 1057,786.4 1062,787.1 1063.5,787.4 1069,786.3 1074,788.5 1075.5,789.0 1081,785.7 1086,786.2 1086.5,786.2 1093,784.5 1098,785.5 1099,785.6 1105.5,783.4 1110,790.2 1111,791.7 1114,788.0 1117.5,783.3 1122,787.5 1123,788.4 1129.5,784.7 1134,788.3 1135,789.1 1141.5,786.7 1146,784.7 1147,784.3 1153,787.8 1158,786.0 1159.5,785.5 1165,788.4 1170,786.1 1171.5,785.5 1177,788.5 1182,784.5 1183.5,783.6 1189,790.2 1194,787.7 1194.5,787.5 1201,785.1 1206,785.6 1207,785.7 1213.5,788.5 1218,787.0 1219,786.6 1225.5,787.0 1230,787.3 1231,787.4 1236.5,785.5 1242,786.9 1243.5,787.4 1249,786.6 1254,786.9 1261.5,787.4 1266,787.0 1273,786.3 1278,785.8 1279,785.8 1284.5,787.4 1290,787.2 1290.5,787.2 1296,786.9 1297,786.9 1301.5,786.7 1302,786.7 1303,786.7 1314,786.2 1320,786.2 1326,786.2 1332,785.4 1338,786.2 1344,786.2 1350,786.2 1356,786.2 1362,786.2 1368,786.2 1374,786.2 1380,787.0 1386,786.2 1392,786.2 1398,786.2 1404,786.2 1410,787.0 1416,785.4 1422,787.0 1428,786.2 1434,785.4 1440,785.4 1446,786.2 1452,785.4 1455,785.6 1458,785.8 1460,785.9 1465,786.6 1470,785.9 1477,785.9 1482,785.9 1494,785.9 1502,787.0 1506,804.9 1507.5,811.7 1518,812.7 1530,812.7 1542,812.7 1554,812.7 1566,812.7 1578,812.7 1590,812.7 1602,812.7 1605,812.7 1610,812.7 1614,812.7 1615,812.7 1626,812.7 1638,812.7 1650,812.7 1662,812.7 1663.5,812.7 1664.5,812.7 1669.5,813.1 1674,813.4 1675,813.5 1681,811.6 1686,813.0 1687.5,813.5 1693.5,813.4 1698,813.4 1699.5,813.4 1705.5,813.3 1710,813.2 1711.5,813.2 1717.5,813.1 1722,813.0 1723.5,813.0 1729.5,812.9 1734,812.9 1746,812.7 1750,812.6 1758,812.0 1760,811.8L1760,816Z" fill="#c96e2c"/><path d="M234,795.3 241,793.8 246,792.7 247,792.5 253.5,788.9 258,798.8 259,801.0 265,795.0 270,793.8 271,793.7 277,795.8 282,794.9 283,794.6 289,788.6 294,797.7 295,799.6 301,792.6 306,796.7 307,797.6 313,794.8 318,794.8 319,794.8 325,794.8 330,793.7 331,793.4 337,795.3 342,793.7 343,793.4 349.5,794.1 354,794.6 355.5,794.7 361,791.4 366,794.7 367,795.3 373,794.6 378,795.2 379.5,795.3 385,789.5 390,794.0 391,794.8 397,794.8 402,794.8 403.5,794.8 409,796.5 414,796.5 414.5,796.5 421,796.5 426,795.1 427,794.8 434,794.2 438,794.2 445.5,794.2 450,794.2 451,794.2 457.5,793.4 462,794.3 463,794.5 463.5,794.6 469,795.3 474,794.6 481,793.4 486,795.1 487,795.3 493,794.2 498,795.2 499,795.3 505,794.5 510,794.5 511.5,794.5 517,794.6 522,795.2 523,795.3 529,793.4 534,794.2 535,794.4 541,795.3 546,795.3 553.5,795.3 558,794.7 559,794.5 565,795.3 570,792.8 571,792.2 577,786.4 582,786.4 589,786.6 594,787.2 595.5,787.4 601,786.6 606,786.6 613,786.6 616,787.0 618,787.2 619,787.4 625.5,786.3 627,786.8 630,786.8 640,786.6 642,786.6 646,786.6 652,786.6 654,786.6 658,786.6 664,786.6 666,786.9 670,787.4 676,786.6 678,786.6 682,786.6 688,787.4 690,787.4 694,787.4 700,785.8 702,786.1 706,786.6 712,787.4 714,787.1 718,786.6 724,786.6 726,786.9 730,787.4 736,785.8 738,786.1 742,786.6 748,786.6 750,786.6 754,786.6 760,787.4 762,787.1 766,786.6 772,786.6 774,786.6 778,786.6 784,786.6 786,786.6 790,786.6 796,785.8 798,786.1 802,786.6 808,786.6 810,786.6 814,786.6 820,786.6 822,786.3 826,785.8 832,786.6 834,786.3 838,785.8 844,787.4 846,787.1 850,786.6 856,786.6 858,786.3 862,785.8 868,787.4 870,787.1 874,786.6 880,787.4 882,787.1 886,786.6 892,785.8 894,786.1 898,786.6 904,786.6 906,786.6 910,786.6 912,786.7 914,786.8 918,786.9 925.5,787.0 930,786.4 931,786.3 937.5,794.5 942,787.7 943.5,785.8 949,789.0 954,779.9 955,778.0 961,783.8 966,785.7 967.5,786.4 973,795.2 978,786.0 979,784.4 985,779.5 990,785.8 991.5,787.4 997.5,788.0 1002,788.4 1003,788.5 1009,785.6 1014,794.0 1015,795.7 1021,786.6 1026,786.1 1027,786.0 1033,785.4 1038,784.7 1039,784.5 1045,784.5 1050,788.9 1051.5,790.2 1057,786.4 1062,787.1 1063.5,787.4 1069,786.3 1074,788.5 1075.5,789.0 1081,785.7 1086,786.2 1086.5,786.2 1093,784.5 1098,785.5 1099,785.6 1105.5,783.4 1110,790.2 1111,791.7 1114,788.0 1117.5,783.3 1122,787.5 1123,788.4 1129.5,784.7 1134,788.3 1135,789.1 1141.5,786.7 1146,784.7 1147,784.3 1153,787.8 1158,786.0 1159.5,785.5 1165,788.4 1170,786.1 1171.5,785.5 1177,788.5 1182,784.5 1183.5,783.6 1189,790.2 1194,787.7 1194.5,787.5 1201,785.1 1206,785.6 1207,785.7 1213.5,788.5 1218,787.0 1219,786.6 1225.5,787.0 1230,787.3 1231,787.4 1236.5,785.5 1242,786.9 1243.5,787.4 1249,786.6 1254,786.9 1261.5,787.4 1266,787.0 1273,786.3 1278,785.8 1279,785.8 1284.5,787.4 1290,787.2 1290.5,787.2 1296,786.9 1297,786.9 1301.5,786.7 1302,786.7 1303,786.7 1314,786.2 1320,786.2 1326,786.2 1332,785.4 1338,786.2 1344,786.2 1350,786.2 1356,786.2 1362,786.2 1368,786.2 1374,786.2 1380,787.0 1386,786.2 1392,786.2 1398,786.2 1404,786.2 1410,787.0 1416,785.4 1422,787.0 1428,786.2 1434,785.4 1440,785.4 1446,786.2 1452,785.4 1455,785.6 1458,785.8 1460,785.9 1465,786.6 1470,785.9 1477,785.9 1482,785.9 1494,785.9 1502,787.0 1506,804.9 1507.5,811.7 1518,812.7 1530,812.7 1542,812.7 1554,812.7 1566,812.7 1578,812.7 1590,812.7 1602,812.7 1605,812.7 1610,812.7 1614,812.7 1615,812.7 1626,812.7 1638,812.7 1650,812.7 1662,812.7 1663.5,812.7 1664.5,812.7 1669.5,813.1 1674,813.4 1675,813.5 1681,811.6 1686,813.0 1687.5,813.5 1693.5,813.4 1698,813.4 1699.5,813.4 1705.5,813.3 1710,813.2 1711.5,813.2 1717.5,813.1 1722,813.0 1723.5,813.0 1729.5,812.9 1734,812.9 1746,812.7 1750,812.6 1758,812.0 1760,811.8" fill="none" stroke="#e8822f" stroke-width="1.0" stroke-linejoin="round"/><path d="M234,816L234,799.3 241,798.1 246,797.2 247,797.1 253.5,794.5 258,801.7 259,803.3 265,798.4 270,798.2 271,798.2 277,799.8 282,799.4 283,799.2 289,794.3 294,801.1 295,802.5 301,797.7 306,800.9 307,801.5 313,798.2 318,799.1 319,799.3 325,800.4 330,798.6 331,798.2 337,799.3 342,798.4 343,798.2 349.5,798.8 354,799.2 355.5,799.3 361,797.1 366,799.4 367,799.9 373,800.2 378,800.4 379.5,800.4 385,795.5 390,799.2 391,799.9 397,799.3 402,798.9 403.5,798.8 409,801.0 414,800.5 414.5,800.5 421,799.9 426,801.3 427,801.5 434,799.3 438,799.1 445.5,798.7 450,798.3 451,798.2 457.5,797.7 462,799.0 463,799.3 463.5,799.3 469,798.8 474,798.8 481,798.8 486,801.0 487,801.3 493,799.9 498,800.4 499,800.4 505,799.9 510,799.0 511.5,798.8 517,799.5 522,800.1 523,800.2 529,798.8 534,799.7 535,799.9 541,800.5 546,800.5 553.5,800.5 558,800.5 559,800.5 565,800.5 570,798.6 571,798.2 577,796.9 582,796.9 589,797.0 594,797.5 595.5,797.6 601,797.0 606,797.0 613,797.0 616,797.5 618,797.8 619,797.9 625.5,796.5 627,797.0 630,797.2 640,797.8 642,797.5 646,797.0 652,796.2 654,796.5 658,797.0 664,797.0 666,796.7 670,796.2 676,797.0 678,797.0 682,797.0 688,797.8 690,797.5 694,797.0 700,797.8 702,797.8 706,797.8 712,797.0 714,797.0 718,797.0 724,796.2 726,796.5 730,797.0 736,797.8 738,797.8 742,797.8 748,797.0 750,797.0 754,797.0 760,797.0 762,797.0 766,797.0 772,797.0 774,797.0 778,797.0 784,797.0 786,797.3 790,797.8 796,796.2 798,796.2 802,796.2 808,797.0 810,797.0 814,797.0 820,797.0 822,797.0 826,797.0 832,797.0 834,797.0 838,797.0 844,797.0 846,797.0 850,797.0 856,797.0 858,797.0 862,797.0 868,797.8 870,797.5 874,797.0 880,797.0 882,797.0 886,797.0 892,797.0 894,797.0 898,797.0 904,797.0 906,797.0 910,797.0 912,797.0 914,797.0 918,797.4 925.5,797.9 930,797.4 931,797.3 937.5,801.4 942,798.0 943.5,797.1 949,798.1 954,791.8 955,790.4 961,794.1 966,796.4 967.5,797.1 973,802.1 978,796.8 979,795.8 985,792.3 990,795.6 991.5,796.5 997.5,797.9 1002,797.4 1003,797.2 1009,796.6 1014,801.6 1015,802.6 1021,797.6 1026,796.9 1027,796.7 1033,795.9 1038,795.2 1039,795.1 1045,794.2 1050,798.1 1051.5,799.3 1057,797.1 1062,797.3 1063.5,797.3 1069,797.6 1074,798.9 1075.5,799.2 1081,796.5 1086,796.0 1086.5,796.0 1093,795.3 1098,796.7 1099,797.0 1105.5,794.2 1110,799.9 1111,801.2 1114,797.0 1117.5,794.3 1122,797.4 1123,798.1 1129.5,795.4 1134,797.5 1135,797.9 1141.5,797.0 1146,795.6 1147,795.4 1153,797.5 1158,796.7 1159.5,796.5 1165,797.0 1170,796.6 1171.5,796.5 1177,798.2 1182,795.9 1183.5,795.4 1189,798.2 1194,797.2 1194.5,797.1 1201,795.3 1206,796.0 1207,796.1 1213.5,797.6 1218,797.2 1219,797.1 1225.5,797.0 1230,797.0 1231,797.0 1236.5,795.7 1242,797.2 1243.5,797.6 1249,796.5 1254,796.7 1261.5,797.0 1266,797.0 1273,797.0 1278,796.7 1279,796.6 1284.5,796.1 1290,796.6 1290.5,796.6 1296,797.0 1297,797.0 1301.5,796.8 1302,796.7 1303,796.7 1314,796.1 1320,795.5 1326,796.3 1332,796.3 1338,797.1 1344,796.3 1350,796.3 1356,796.3 1362,796.3 1368,797.1 1374,796.3 1380,795.5 1386,796.3 1392,796.3 1398,796.3 1404,796.3 1410,796.3 1416,796.3 1422,797.1 1428,796.3 1434,795.5 1440,795.5 1446,796.3 1452,796.3 1455,796.4 1458,796.4 1460,796.5 1465,796.5 1470,796.5 1477,796.5 1482,796.5 1494,796.5 1502,797.1 1506,808.3 1507.5,812.5 1518,813.2 1530,813.2 1542,813.2 1554,813.2 1566,813.2 1578,813.2 1590,813.2 1602,813.2 1605,813.2 1610,813.2 1614,813.2 1615,813.2 1626,813.2 1638,813.2 1650,813.2 1662,813.2 1663.5,813.2 1664.5,813.2 1669.5,813.2 1674,813.2 1675,813.2 1681,813.2 1686,813.2 1687.5,813.2 1693.5,813.2 1698,813.2 1699.5,813.2 1705.5,813.2 1710,813.2 1711.5,813.2 1717.5,813.2 1722,813.2 1723.5,813.2 1729.5,813.2 1734,813.2 1746,813.2 1750,813.2 1758,813.2 1760,813.2L1760,816Z" fill="#c4133e"/><path d="M234,799.3 241,798.1 246,797.2 247,797.1 253.5,794.5 258,801.7 259,803.3 265,798.4 270,798.2 271,798.2 277,799.8 282,799.4 283,799.2 289,794.3 294,801.1 295,802.5 301,797.7 306,800.9 307,801.5 313,798.2 318,799.1 319,799.3 325,800.4 330,798.6 331,798.2 337,799.3 342,798.4 343,798.2 349.5,798.8 354,799.2 355.5,799.3 361,797.1 366,799.4 367,799.9 373,800.2 378,800.4 379.5,800.4 385,795.5 390,799.2 391,799.9 397,799.3 402,798.9 403.5,798.8 409,801.0 414,800.5 414.5,800.5 421,799.9 426,801.3 427,801.5 434,799.3 438,799.1 445.5,798.7 450,798.3 451,798.2 457.5,797.7 462,799.0 463,799.3 463.5,799.3 469,798.8 474,798.8 481,798.8 486,801.0 487,801.3 493,799.9 498,800.4 499,800.4 505,799.9 510,799.0 511.5,798.8 517,799.5 522,800.1 523,800.2 529,798.8 534,799.7 535,799.9 541,800.5 546,800.5 553.5,800.5 558,800.5 559,800.5 565,800.5 570,798.6 571,798.2 577,796.9 582,796.9 589,797.0 594,797.5 595.5,797.6 601,797.0 606,797.0 613,797.0 616,797.5 618,797.8 619,797.9 625.5,796.5 627,797.0 630,797.2 640,797.8 642,797.5 646,797.0 652,796.2 654,796.5 658,797.0 664,797.0 666,796.7 670,796.2 676,797.0 678,797.0 682,797.0 688,797.8 690,797.5 694,797.0 700,797.8 702,797.8 706,797.8 712,797.0 714,797.0 718,797.0 724,796.2 726,796.5 730,797.0 736,797.8 738,797.8 742,797.8 748,797.0 750,797.0 754,797.0 760,797.0 762,797.0 766,797.0 772,797.0 774,797.0 778,797.0 784,797.0 786,797.3 790,797.8 796,796.2 798,796.2 802,796.2 808,797.0 810,797.0 814,797.0 820,797.0 822,797.0 826,797.0 832,797.0 834,797.0 838,797.0 844,797.0 846,797.0 850,797.0 856,797.0 858,797.0 862,797.0 868,797.8 870,797.5 874,797.0 880,797.0 882,797.0 886,797.0 892,797.0 894,797.0 898,797.0 904,797.0 906,797.0 910,797.0 912,797.0 914,797.0 918,797.4 925.5,797.9 930,797.4 931,797.3 937.5,801.4 942,798.0 943.5,797.1 949,798.1 954,791.8 955,790.4 961,794.1 966,796.4 967.5,797.1 973,802.1 978,796.8 979,795.8 985,792.3 990,795.6 991.5,796.5 997.5,797.9 1002,797.4 1003,797.2 1009,796.6 1014,801.6 1015,802.6 1021,797.6 1026,796.9 1027,796.7 1033,795.9 1038,795.2 1039,795.1 1045,794.2 1050,798.1 1051.5,799.3 1057,797.1 1062,797.3 1063.5,797.3 1069,797.6 1074,798.9 1075.5,799.2 1081,796.5 1086,796.0 1086.5,796.0 1093,795.3 1098,796.7 1099,797.0 1105.5,794.2 1110,799.9 1111,801.2 1114,797.0 1117.5,794.3 1122,797.4 1123,798.1 1129.5,795.4 1134,797.5 1135,797.9 1141.5,797.0 1146,795.6 1147,795.4 1153,797.5 1158,796.7 1159.5,796.5 1165,797.0 1170,796.6 1171.5,796.5 1177,798.2 1182,795.9 1183.5,795.4 1189,798.2 1194,797.2 1194.5,797.1 1201,795.3 1206,796.0 1207,796.1 1213.5,797.6 1218,797.2 1219,797.1 1225.5,797.0 1230,797.0 1231,797.0 1236.5,795.7 1242,797.2 1243.5,797.6 1249,796.5 1254,796.7 1261.5,797.0 1266,797.0 1273,797.0 1278,796.7 1279,796.6 1284.5,796.1 1290,796.6 1290.5,796.6 1296,797.0 1297,797.0 1301.5,796.8 1302,796.7 1303,796.7 1314,796.1 1320,795.5 1326,796.3 1332,796.3 1338,797.1 1344,796.3 1350,796.3 1356,796.3 1362,796.3 1368,797.1 1374,796.3 1380,795.5 1386,796.3 1392,796.3 1398,796.3 1404,796.3 1410,796.3 1416,796.3 1422,797.1 1428,796.3 1434,795.5 1440,795.5 1446,796.3 1452,796.3 1455,796.4 1458,796.4 1460,796.5 1465,796.5 1470,796.5 1477,796.5 1482,796.5 1494,796.5 1502,797.1 1506,808.3 1507.5,812.5 1518,813.2 1530,813.2 1542,813.2 1554,813.2 1566,813.2 1578,813.2 1590,813.2 1602,813.2 1605,813.2 1610,813.2 1614,813.2 1615,813.2 1626,813.2 1638,813.2 1650,813.2 1662,813.2 1663.5,813.2 1664.5,813.2 1669.5,813.2 1674,813.2 1675,813.2 1681,813.2 1686,813.2 1687.5,813.2 1693.5,813.2 1698,813.2 1699.5,813.2 1705.5,813.2 1710,813.2 1711.5,813.2 1717.5,813.2 1722,813.2 1723.5,813.2 1729.5,813.2 1734,813.2 1746,813.2 1750,813.2 1758,813.2 1760,813.2" fill="none" stroke="#e0184a" stroke-width="1.0" stroke-linejoin="round"/><path d="M234,816L234,803.3 241,802.1 246,801.2 247,801.0 253.5,797.3 258,803.6 259,805.0 265,801.2 270,801.5 271,801.6 277,802.7 282,802.7 283,802.6 289,798.3 294,803.3 295,804.3 301,799.9 306,802.7 307,803.3 313,801.0 318,801.7 319,801.9 325,802.7 330,801.3 331,801.1 337,801.6 342,801.1 343,801.0 349.5,801.3 354,801.5 355.5,801.5 361,799.9 366,801.3 367,801.6 373,802.1 378,802.6 379.5,802.7 385,798.8 390,801.2 391,801.6 397,801.6 402,801.6 403.5,801.6 409,803.3 414,803.1 414.5,803.0 421,802.7 426,802.0 427,801.8 434,803.3 438,802.7 445.5,801.6 450,801.4 451,801.3 457.5,801.1 462,802.0 463,802.2 463.5,802.1 469,801.6 474,801.6 481,801.6 486,803.0 487,803.3 493,802.7 498,802.5 499,802.4 505,802.2 510,800.8 511.5,800.5 517,801.3 522,802.0 523,802.1 529,801.4 534,802.5 535,802.7 541,802.6 546,802.5 553.5,802.4 558,802.3 559,802.3 565,802.2 570,802.6 571,802.7 577,803.8 582,803.9 589,803.9 594,803.4 595.5,803.3 601,803.4 606,803.5 613,803.6 616,803.6 618,803.6 619,803.5 625.5,803.3 627,803.3 630,803.4 640,803.8 642,803.8 646,803.8 652,804.6 654,804.1 658,803.0 664,804.6 666,804.1 670,803.0 676,803.8 678,803.8 682,803.8 688,803.8 690,803.5 694,803.0 700,803.8 702,803.8 706,803.8 712,803.0 714,803.5 718,804.6 724,803.8 726,803.8 730,803.8 736,804.6 738,804.3 742,803.8 748,803.8 750,803.8 754,803.8 760,803.8 762,803.8 766,803.8 772,804.6 774,804.3 778,803.8 784,803.8 786,803.8 790,803.8 796,804.6 798,804.3 802,803.8 808,804.6 810,804.3 814,803.8 820,803.8 822,803.8 826,803.8 832,803.8 834,803.8 838,803.8 844,803.8 846,804.1 850,804.6 856,803.0 858,803.5 862,804.6 868,803.8 870,804.1 874,804.6 880,803.8 882,803.8 886,803.8 892,803.8 894,803.8 898,803.8 904,803.8 906,803.8 910,803.8 912,803.5 914,803.3 918,803.5 925.5,803.9 930,803.4 931,803.3 937.5,806.0 942,803.9 943.5,803.3 949,803.8 954,800.2 955,799.4 961,801.5 966,802.9 967.5,803.3 973,806.1 978,803.2 979,802.6 985,800.2 990,802.7 991.5,803.3 997.5,803.3 1002,803.3 1003,803.3 1009,803.3 1014,805.6 1015,806.1 1021,803.3 1026,803.4 1027,803.5 1033,803.6 1038,802.8 1039,802.6 1045,801.6 1050,803.3 1051.5,803.9 1057,802.8 1062,803.0 1063.5,803.0 1069,803.3 1074,804.2 1075.5,804.4 1081,803.3 1086,802.8 1086.5,802.8 1093,802.2 1098,801.8 1099,801.8 1105.5,801.4 1110,803.8 1111,804.3 1114,802.7 1117.5,801.4 1122,803.4 1123,803.8 1129.5,802.2 1134,803.6 1135,803.9 1141.5,802.7 1146,802.3 1147,802.2 1153,803.3 1158,803.4 1159.5,803.4 1165,803.6 1170,803.7 1171.5,803.7 1177,803.9 1182,802.5 1183.5,802.2 1189,803.3 1194,802.8 1194.5,802.8 1201,802.2 1206,803.1 1207,803.3 1213.5,803.4 1218,803.6 1219,803.6 1225.5,803.7 1230,803.8 1231,803.9 1236.5,802.2 1242,802.6 1243.5,802.8 1249,803.3 1254,803.4 1261.5,803.6 1266,803.7 1273,803.9 1278,802.4 1279,802.2 1284.5,802.4 1290,802.7 1290.5,802.7 1296,802.4 1297,802.4 1301.5,802.2 1302,802.2 1303,802.2 1314,802.7 1320,802.8 1326,803.6 1332,802.8 1338,802.8 1344,802.8 1350,802.8 1356,802.8 1362,802.8 1368,802.8 1374,802.8 1380,802.8 1386,802.8 1392,802.8 1398,802.0 1404,802.0 1410,802.8 1416,802.8 1422,802.8 1428,802.8 1434,802.8 1440,803.6 1446,803.6 1452,802.8 1455,802.9 1458,802.9 1460,803.0 1465,802.7 1470,802.5 1477,802.9 1482,803.0 1494,803.0 1502,803.4 1506,810.5 1507.5,813.1 1518,813.5 1530,813.5 1542,813.5 1554,813.5 1566,813.5 1578,813.5 1590,813.5 1602,813.5 1605,813.5 1610,813.5 1614,813.5 1615,813.5 1626,813.5 1638,813.5 1650,813.5 1662,813.5 1663.5,813.5 1664.5,813.5 1669.5,813.5 1674,813.5 1675,813.5 1681,813.5 1686,813.5 1687.5,813.5 1693.5,813.5 1698,813.5 1699.5,813.5 1705.5,813.5 1710,813.5 1711.5,813.5 1717.5,813.5 1722,813.5 1723.5,813.5 1729.5,813.5 1734,813.5 1746,813.5 1750,813.5 1758,813.5 1760,813.5L1760,816Z" fill="url(#gp8)"/><path d="M232.0,837.9 234.0,837.9 238.5,839.0 268.1,839.0 277.2,837.9 284.0,839.0 295.4,839.0 301.0,837.9 306.7,839.0 324.9,839.0 330.6,837.9 337.4,840.2 348.8,837.9 354.5,839.0 372.6,839.0 378.3,837.9 384.0,839.0 389.7,837.9 395.4,839.0 457.9,839.0 463.5,837.9 469.2,839.0 564.7,839.0 570.4,834.0 577.2,821.5 634.0,821.5 929.5,821.5 937.4,822.7 948.8,820.4 954.5,821.5 997.6,821.5 1003.3,822.7 1009.0,821.5 1052.2,821.5 1056.7,820.4 1063.5,821.5 1070.4,821.5 1074.9,820.4 1081.7,821.5 1088.5,821.5 1093.1,822.7 1099.9,820.4 1106.7,821.5 1124.9,821.5 1134.0,821.5 1140.8,820.4 1147.6,822.7 1153.3,820.4 1159.0,822.7 1164.7,820.4 1170.4,822.7 1177.2,820.4 1182.9,821.5 1188.5,820.4 1195.4,821.5 1209.0,821.5 1213.5,820.4 1218.1,821.5 1238.5,821.5 1243.1,820.4 1247.6,821.5 1434.0,821.5 1661.8,821.5 1667.9,822.7 1675.1,820.7 1680.2,821.5 1704.8,821.5 1710.9,822.7 1717.0,820.7 1723.2,821.5 1760.0,821.5 1762.0,821.5" fill="none" stroke="#1a93b0" stroke-width="2.0" stroke-linejoin="round"/><path d="M232.0,862.9 234.0,862.9 252.2,862.9 259.0,864.3 265.8,862.9 299.9,862.9 306.7,864.3 313.5,862.9 324.9,864.3 330.6,862.0 336.3,864.3 343.1,862.9 361.3,862.9 367.0,864.3 372.6,862.9 449.9,862.9 456.7,864.3 463.5,862.9 564.7,862.9 570.4,860.2 577.2,852.7 634.0,852.7 938.5,852.7 943.1,851.5 948.8,852.7 954.5,851.5 959.0,852.7 993.1,852.7 997.6,851.5 1002.2,852.7 1052.2,852.7 1056.7,851.5 1063.5,852.7 1070.4,852.7 1074.9,851.5 1081.7,852.7 1093.1,852.7 1099.9,851.5 1106.7,852.7 1124.9,852.7 1129.5,851.5 1135.1,853.8 1140.8,851.5 1147.6,852.7 1153.3,851.5 1159.0,852.7 1164.7,851.5 1170.4,852.7 1177.2,851.5 1182.9,852.7 1209.0,852.7 1213.5,851.5 1218.1,852.7 1238.5,852.7 1243.1,851.5 1247.6,852.7 1434.0,852.7 1667.9,852.8 1675.1,851.4 1680.2,852.8 1710.9,852.8 1717.0,851.4 1723.2,852.8 1760.0,852.8 1762.0,852.8" fill="none" stroke="#34cc90" stroke-width="2.0" stroke-linejoin="round"/><path d="M232.0,878.8 234.0,878.8 564.7,878.8 570.4,876.5 577.2,872.7 634.0,872.7 943.1,872.7 948.8,871.5 954.5,872.7 1056.7,872.7 1062.4,871.5 1068.1,872.7 1074.9,871.5 1081.7,872.7 1106.7,872.7 1111.3,871.5 1115.8,872.7 1129.5,872.7 1135.1,871.5 1140.8,872.7 1147.6,872.7 1153.3,871.5 1159.0,872.7 1164.7,871.5 1170.4,872.7 1184.0,872.7 1189.7,871.5 1195.4,872.7 1201.0,871.5 1206.7,872.7 1238.5,872.7 1243.1,871.5 1247.6,872.7 1434.0,872.7 1667.9,872.6 1675.1,871.4 1680.2,872.6 1710.9,872.6 1717.0,871.4 1723.2,872.6 1760.0,872.6 1762.0,872.6" fill="none" stroke="#f0185a" stroke-width="2.0" stroke-linejoin="round"/><path d="M232.0,923.6 234.0,923.6 240.8,920.2 246.8,918.5 252.7,906.6 259.2,931.3 264.7,923.6 270.6,919.3 276.6,922.7 283.1,920.2 288.9,906.6 294.8,933.8 300.8,908.3 307.0,929.6 312.7,920.2 318.9,917.3 324.8,919.0 330.8,915.1 336.8,924.1 343.1,917.3 349.1,923.6 355.0,919.0 361.0,915.6 366.9,919.0 372.9,920.7 378.9,920.7 384.8,906.6 390.8,921.9 396.8,918.5 402.7,921.0 408.7,922.4 420.6,922.4 426.6,919.7 450.5,919.7 456.4,915.6 462.4,923.1 468.4,919.7 523.8,919.7 528.9,918.5 534.0,919.9 540.8,918.8 564.7,918.8 570.4,924.0 576.7,934.7 914.0,934.7 930.6,934.7 937.0,939.8 943.0,933.0 948.9,937.7 954.9,925.8 960.9,931.6 966.8,933.8 972.8,943.5 978.8,930.9 984.7,927.9 990.7,934.7 1002.6,934.7 1008.6,933.3 1014.6,942.9 1020.5,934.7 1032.5,933.8 1039.3,931.3 1044.4,932.1 1051.2,936.7 1057.2,933.3 1063.1,935.5 1069.1,933.3 1075.1,936.7 1081.0,934.7 1087.0,934.7 1093.0,930.9 1098.9,934.7 1104.9,929.9 1110.9,941.5 1116.8,930.9 1122.8,936.0 1128.8,929.9 1134.7,939.5 1140.7,936.0 1146.7,931.3 1152.6,936.7 1158.6,930.9 1164.6,936.7 1170.5,932.1 1176.5,936.0 1182.5,928.7 1188.4,939.5 1194.4,935.0 1200.3,933.0 1206.3,933.3 1214.0,936.7 1219.1,934.3 1225.9,934.3 1237.0,932.1 1243.0,935.5 1248.9,934.3 1510.6,934.3 1560.0,934.1 1604.3,934.1 1608.9,933.0 1613.4,934.1 1662.8,934.1 1669.1,937.5 1675.3,939.0 1681.0,924.5 1686.7,934.7 1693.0,937.0 1699.2,931.8 1704.9,933.8 1711.1,938.3 1716.8,930.7 1722.5,933.8 1760.0,934.1 1762.0,934.1" fill="none" stroke="#f0185a" stroke-width="2.0" stroke-linejoin="round"/><path d="M232.0,925.2 234.0,925.2 240.8,921.8 246.8,920.1 252.7,908.2 259.2,932.9 264.7,925.2 270.6,920.9 276.6,924.3 283.1,921.8 288.9,908.2 294.8,935.4 300.8,909.9 307.0,931.2 312.7,921.8 318.9,918.9 324.8,920.6 330.8,916.7 336.8,925.7 343.1,918.9 349.1,925.2 355.0,920.6 361.0,917.2 366.9,920.6 372.9,922.3 378.9,922.3 384.8,908.2 390.8,923.5 396.8,920.1 402.7,922.6 408.7,924.0 420.6,924.0 426.6,921.3 450.5,921.3 456.4,917.2 462.4,924.7 468.4,921.3 523.8,921.3 528.9,920.1 534.0,921.5 540.8,920.4 564.7,920.4 570.4,925.6 576.7,936.3 914.0,936.3 930.6,936.3 937.0,941.4 943.0,934.6 948.9,939.3 954.9,927.4 960.9,933.2 966.8,935.4 972.8,945.1 978.8,932.5 984.7,929.5 990.7,936.3 1002.6,936.3 1008.6,934.9 1014.6,944.5 1020.5,936.3 1032.5,935.4 1039.3,932.9 1044.4,933.7 1051.2,938.3 1057.2,934.9 1063.1,937.1 1069.1,934.9 1075.1,938.3 1081.0,936.3 1087.0,936.3 1093.0,932.5 1098.9,936.3 1104.9,931.5 1110.9,943.1 1116.8,932.5 1122.8,937.6 1128.8,931.5 1134.7,941.1 1140.7,937.6 1146.7,932.9 1152.6,938.3 1158.6,932.5 1164.6,938.3 1170.5,933.7 1176.5,937.6 1182.5,930.3 1188.4,941.1 1194.4,936.6 1200.3,934.6 1206.3,934.9 1214.0,938.3 1219.1,935.9 1225.9,935.9 1237.0,933.7 1243.0,937.1 1248.9,935.9 1510.6,935.9 1560.0,935.7 1604.3,935.7 1608.9,934.6 1613.4,935.7 1662.8,935.7 1669.1,939.1 1675.3,940.6 1681.0,926.1 1686.7,936.3 1693.0,938.6 1699.2,933.4 1704.9,935.4 1711.1,939.9 1716.8,932.3 1722.5,935.4 1760.0,935.7 1762.0,935.7" fill="none" stroke="#b048b0" stroke-width="2.0" stroke-linejoin="round"/><path d="M232.0,983.4 234.0,983.4 240.8,979.1 246.8,977.4 252.7,967.2 259.2,991.1 264.7,982.6 270.6,978.3 276.6,982.6 283.1,980.0 288.9,965.5 294.8,992.8 300.8,968.1 307.0,988.5 312.7,978.3 318.9,976.6 324.8,978.0 330.8,974.5 336.8,984.3 343.1,978.0 349.1,983.1 355.0,978.6 361.0,975.2 366.9,978.6 372.9,981.4 378.9,980.0 384.8,967.2 390.8,981.4 396.8,978.6 402.7,980.8 408.7,982.0 420.6,982.0 426.6,978.6 450.5,978.6 456.4,975.2 462.4,983.4 468.4,978.6 523.8,978.6 528.9,978.6 534.0,980.0 540.8,978.9 564.7,978.9 570.4,984.5 576.7,993.2 914.0,992.8 930.6,993.2 937.0,999.1 943.0,991.9 948.9,997.4 954.9,986.0 960.9,991.9 966.8,993.3 972.8,1001.8 978.8,990.2 984.7,987.7 990.7,992.8 1002.6,993.6 1008.6,991.9 1014.6,1001.3 1020.5,992.8 1032.5,992.3 1039.3,990.6 1044.4,991.1 1051.2,995.3 1057.2,992.8 1063.1,995.3 1069.1,992.8 1075.1,995.3 1081.0,992.8 1087.0,992.8 1093.0,990.6 1098.9,993.3 1104.9,989.4 1110.9,999.6 1116.8,989.4 1122.8,994.0 1128.8,989.4 1134.7,998.4 1140.7,994.0 1146.7,990.6 1152.6,995.3 1158.6,990.6 1164.6,995.3 1170.5,991.9 1176.5,995.3 1182.5,988.5 1188.4,998.4 1194.4,993.3 1206.3,991.9 1214.0,995.3 1219.1,992.8 1231.0,992.8 1237.0,990.6 1243.0,995.0 1248.9,992.8 1510.6,992.8 1560.0,992.7 1596.9,992.7 1603.0,994.2 1608.9,992.7 1662.8,992.7 1669.1,997.3 1675.3,998.2 1681.0,984.5 1686.7,992.5 1693.0,995.0 1699.2,990.2 1704.9,992.7 1711.1,997.3 1716.8,989.3 1722.5,992.7 1760.0,992.7 1762.0,992.7" fill="none" stroke="#1a93b0" stroke-width="2.0" stroke-linejoin="round"/><path d="M232.0,1017.5 234.0,1017.5 240.8,1015.8 270.6,1015.8 276.6,1017.2 283.1,1015.8 300.8,1015.8 307.0,1017.2 312.7,1015.8 349.1,1015.8 355.0,1017.2 361.0,1015.8 528.9,1015.8 640.0,1015.9 912.0,1015.9 914.0,1016.1 1069.1,1016.1 1075.1,1017.5 1081.0,1016.1 1104.9,1016.1 1110.9,1017.5 1116.8,1016.1 1134.7,1016.1 1140.7,1017.5 1146.7,1016.1 1182.5,1016.1 1188.4,1017.5 1194.4,1016.1 1214.0,1016.1 1219.1,1016.1 1237.0,1016.1 1243.0,1017.5 1248.9,1016.1 1510.6,1016.1 1560.0,1015.8 1760.0,1015.8 1762.0,1015.8" fill="none" stroke="#f2922f" stroke-width="2.0" stroke-linejoin="round"/></g><rect x="238" y="101" width="46.0" height="19" rx="4" fill="#2c2c2c" fill-opacity="0.72"/><text x="242" y="114" font-size="11" fill="#f4f4f4" textLength="37.0" lengthAdjust="spacingAndGlyphs">15 MCy</text><rect x="238" y="203" width="49.0" height="19" rx="4" fill="#2c2c2c" fill-opacity="0.72"/><text x="242" y="216" font-size="11" fill="#f4f4f4" textLength="40.0" lengthAdjust="spacingAndGlyphs">200 MiB</text><rect x="238" y="321" width="38.5" height="19" rx="4" fill="#2c2c2c" fill-opacity="0.72"/><text x="242" y="334" font-size="11" fill="#f4f4f4" textLength="29.5" lengthAdjust="spacingAndGlyphs">150 %</text><rect x="238" y="416" width="42.0" height="19" rx="4" fill="#2c2c2c" fill-opacity="0.72"/><text x="242" y="429" font-size="11" fill="#f4f4f4" textLength="33.0" lengthAdjust="spacingAndGlyphs">15 MiB</text><rect x="238" y="473" width="36.0" height="19" rx="4" fill="#2c2c2c" fill-opacity="0.72"/><text x="242" y="486" font-size="11" fill="#f4f4f4" textLength="27.0" lengthAdjust="spacingAndGlyphs">9 MiB</text><rect x="238" y="530" width="59.0" height="19" rx="4" fill="#2c2c2c" fill-opacity="0.72"/><text x="242" y="543" font-size="11" fill="#f4f4f4" textLength="50.0" lengthAdjust="spacingAndGlyphs">15 MTrans</text><rect x="238" y="647" width="53.5" height="19" rx="4" fill="#2c2c2c" fill-opacity="0.72"/><text x="242" y="660" font-size="11" fill="#f4f4f4" textLength="44.5" lengthAdjust="spacingAndGlyphs">3 MTrans</text><rect x="238" y="734" width="53.5" height="19" rx="4" fill="#2c2c2c" fill-opacity="0.72"/><text x="242" y="747" font-size="11" fill="#f4f4f4" textLength="44.5" lengthAdjust="spacingAndGlyphs">1 MTrans</text><rect x="238" y="821" width="33.5" height="19" rx="4" fill="#2c2c2c" fill-opacity="0.72"/><text x="242" y="834" font-size="11" fill="#f4f4f4" textLength="24.5" lengthAdjust="spacingAndGlyphs">90 %</text><rect x="238" y="909" width="56.5" height="19" rx="4" fill="#2c2c2c" fill-opacity="0.72"/><text x="242" y="922" font-size="11" fill="#f4f4f4" textLength="47.5" lengthAdjust="spacingAndGlyphs">1,500,000</text><rect x="238" y="966" width="76.0" height="19" rx="4" fill="#2c2c2c" fill-opacity="0.72"/><text x="242" y="979" font-size="11" fill="#f4f4f4" textLength="67.0" lengthAdjust="spacingAndGlyphs">400 kThreads</text></svg></body></html>
